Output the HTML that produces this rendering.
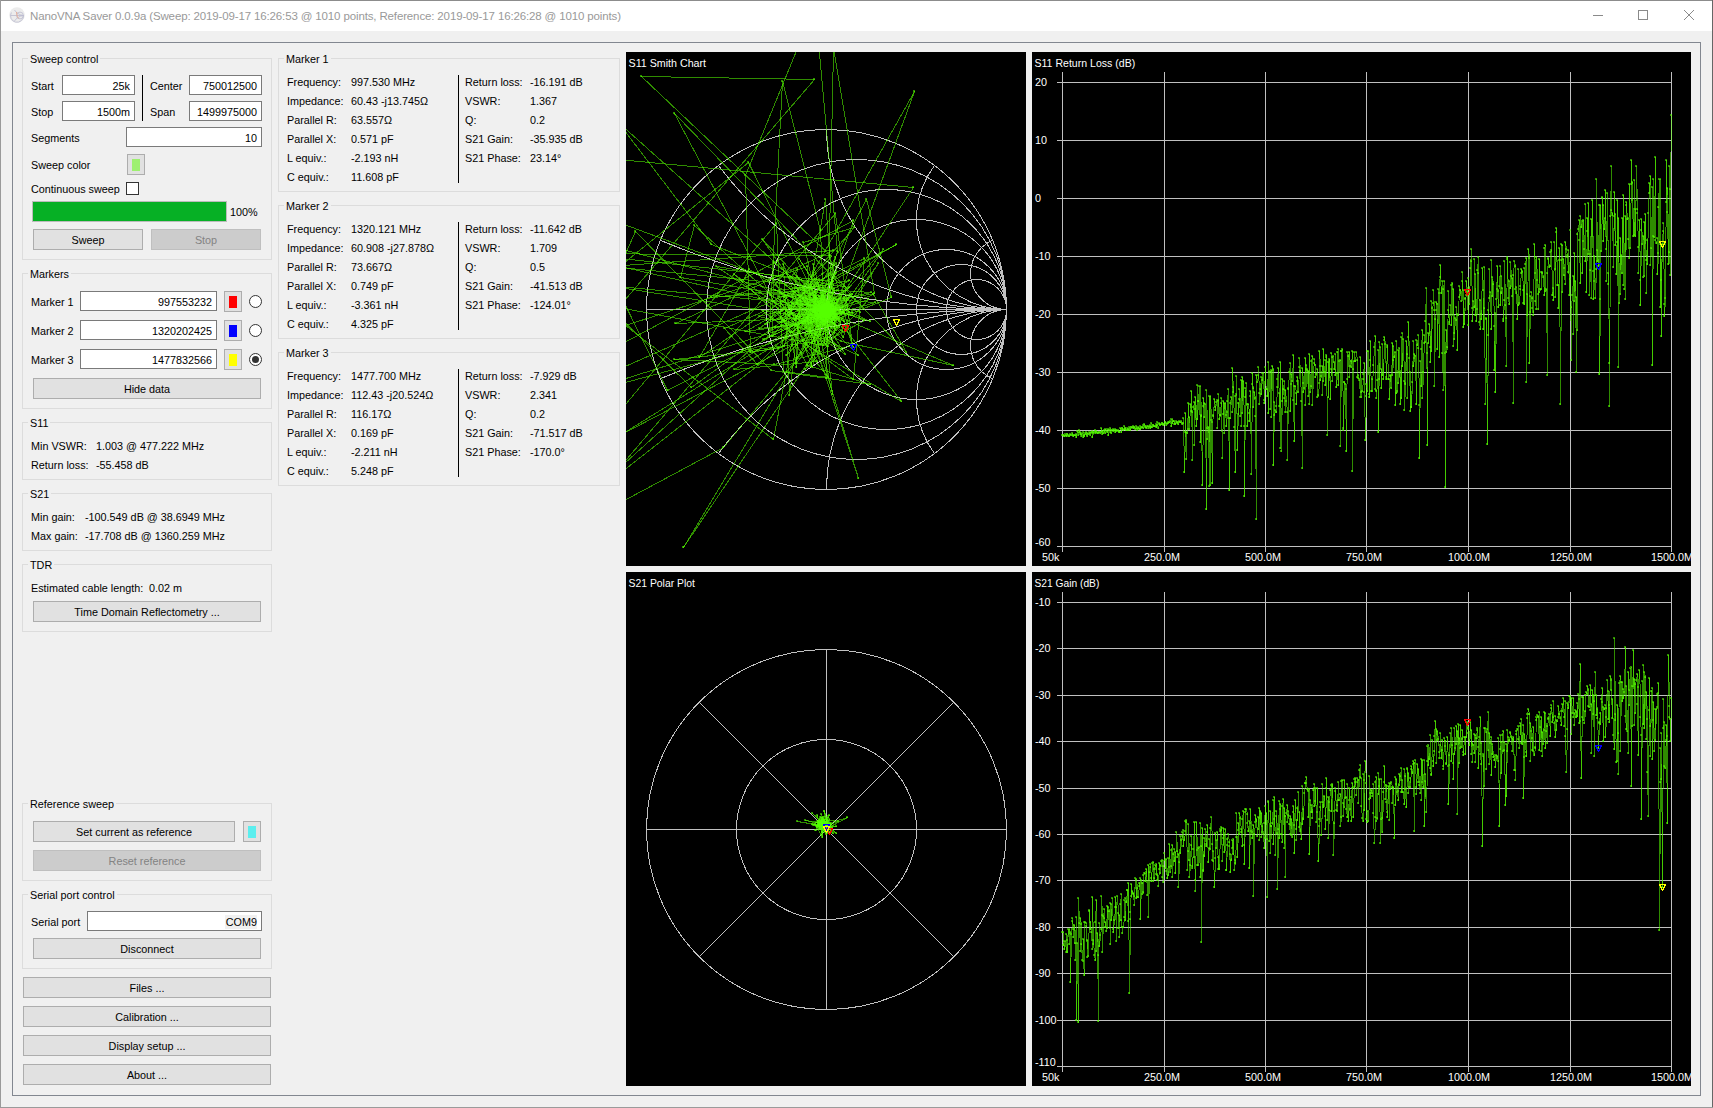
<!DOCTYPE html>
<html><head><meta charset="utf-8"><title>NanoVNA Saver</title><style>
*{box-sizing:border-box;margin:0;padding:0}
html,body{width:1713px;height:1108px;overflow:hidden;background:#f0f0f0}
body{position:relative;font-family:"Liberation Sans",sans-serif;font-size:10.8px;color:#000;line-height:13px}
.a{position:absolute;white-space:pre}
.t{position:absolute;white-space:pre;height:13px;line-height:13px}
.g{position:absolute;border:1px solid #dcdcdc}
.gt{position:absolute;white-space:pre;background:#f0f0f0;height:13px;line-height:13px;padding:0 2px}
.b{position:absolute;border:1px solid #adadad;background:#e1e1e1;text-align:center;white-space:pre;line-height:19px;height:21px}
.b.d{background:#cccccc;border-color:#bfbfbf;color:#838383}
.i{position:absolute;border:1px solid #7a7a7a;background:#fff;text-align:right;white-space:pre;height:20px;line-height:18px;padding-right:4px}
.c{position:absolute;border:1px solid #adadad;background:#e1e1e1}
.c i{position:absolute;display:block}
.v{position:absolute;width:1px;background:#000}
.r{position:absolute;width:13px;height:13px;border:1px solid #333;border-radius:50%;background:#fff}
.r.on::after{content:"";position:absolute;left:2px;top:2px;width:7px;height:7px;border-radius:50%;background:#333}
svg{position:absolute;display:block}
svg text{font-family:"Liberation Sans",sans-serif;font-size:10.8px;fill:#fff}
</style></head><body>
<div class="a" style="left:0;top:0;width:1713px;height:31px;background:#fff"></div>
<div class="a" style="left:0;top:0;width:1713px;height:1px;background:#8c8c8c"></div>
<div class="a" style="left:0;top:0;width:1px;height:1108px;background:#9a9a9a"></div>
<div class="a" style="left:1712px;top:0;width:1px;height:1108px;background:#666"></div>
<div class="a" style="left:0;top:1107px;width:1713px;height:1px;background:#9a9a9a"></div>
<svg style="left:9px;top:7px" width="16" height="16" viewBox="0 0 16 16"><circle cx="8" cy="8" r="7.8" fill="#ececec"/><g fill="none" stroke="#b4b4cc" stroke-width="0.8" opacity="0.85"><path d="M2.400 5.500A6.500 6.500 0 1 0 14.500 8.500"/><path d="M1.500 8.500H14.500"/><circle cx="11" cy="8.500" r="3.400"/><path d="M14.500 8.500C10 8 7 5.500 5.500 3M14.500 8.500C10 9 7 11.500 5.500 14"/></g><path d="M7.500 5C8 6.500 7.600 8 8.300 9.500S9.500 11 9.800 11.500" fill="none" stroke="#eaa98c" stroke-width="0.9"/></svg>
<div class="a" style="left:30px;top:9px;font-size:11.5px;line-height:15px;color:#999;letter-spacing:-0.137px" id="ttl">NanoVNA Saver 0.0.9a (Sweep: 2019-09-17 16:26:53 @ 1010 points, Reference: 2019-09-17 16:26:28 @ 1010 points)</div>
<svg style="left:1585px;top:1px" width="127" height="30" viewBox="0 0 127 30" shape-rendering="crispEdges"><path d="M8 14.500H18" stroke="#8a8a8a" fill="none"/><rect x="53.500" y="9.500" width="9" height="9" fill="none" stroke="#8a8a8a"/><path d="M99 9L109 19M109 9L99 19" stroke="#8a8a8a" fill="none" shape-rendering="auto"/></svg>
<div class="a" style="left:12px;top:42px;width:1689px;height:1054px;border:1px solid #828790"></div>
<div class="g" style="left:22px;top:58px;width:250px;height:202px"></div>
<div class="gt" style="left:28px;top:53px">Sweep control</div>
<div class="t" style="left:31px;top:80px;">Start</div>
<div class="i" style="left:62px;top:75px;width:73px;height:20px;line-height:20px">25k</div>
<div class="t" style="left:31px;top:106px;">Stop</div>
<div class="i" style="left:62px;top:101px;width:73px;height:20px;line-height:20px">1500m</div>
<div class="v" style="left:142px;top:75px;height:46px"></div>
<div class="t" style="left:150px;top:80px;">Center</div>
<div class="i" style="left:189px;top:75px;width:73px;height:20px;line-height:20px">750012500</div>
<div class="t" style="left:150px;top:106px;">Span</div>
<div class="i" style="left:189px;top:101px;width:73px;height:20px;line-height:20px">1499975000</div>
<div class="t" style="left:31px;top:132px;">Segments</div>
<div class="i" style="left:126px;top:127px;width:136px;height:20px;line-height:20px">10</div>
<div class="t" style="left:31px;top:159px;">Sweep color</div>
<div class="c" style="left:127px;top:154px;width:18px;height:21px"><i style="left:4px;top:4px;width:8px;height:12px;background:#9ef070"></i></div>
<div class="t" style="left:31px;top:183px;">Continuous sweep</div>
<div class="a" style="left:126px;top:182px;width:13px;height:13px;border:1px solid #333;background:#fff"></div>
<div class="a" style="left:32px;top:201px;width:195px;height:21px;border:1px solid #bcbcbc;background:#06b025"></div>
<div class="t" style="left:230px;top:206px;">100%</div>
<div class="b" style="left:33px;top:229px;width:110px;height:21px;line-height:20px">Sweep</div>
<div class="b d" style="left:151px;top:229px;width:110px;height:21px;line-height:20px">Stop</div>
<div class="g" style="left:22px;top:273px;width:250px;height:136px"></div>
<div class="gt" style="left:28px;top:268px">Markers</div>
<div class="t" style="left:31px;top:296px;">Marker 1</div>
<div class="i" style="left:80px;top:291px;width:137px;height:20px;line-height:20px">997553232</div>
<div class="c" style="left:224px;top:291px;width:18px;height:21px"><i style="left:4px;top:4px;width:8px;height:12px;background:#ff0000"></i></div>
<div class="r" style="left:249px;top:295px"></div>
<div class="t" style="left:31px;top:325px;">Marker 2</div>
<div class="i" style="left:80px;top:320px;width:137px;height:20px;line-height:20px">1320202425</div>
<div class="c" style="left:224px;top:320px;width:18px;height:21px"><i style="left:4px;top:4px;width:8px;height:12px;background:#0000ff"></i></div>
<div class="r" style="left:249px;top:324px"></div>
<div class="t" style="left:31px;top:354px;">Marker 3</div>
<div class="i" style="left:80px;top:349px;width:137px;height:20px;line-height:20px">1477832566</div>
<div class="c" style="left:224px;top:349px;width:18px;height:21px"><i style="left:4px;top:4px;width:8px;height:12px;background:#ffff00"></i></div>
<div class="r on" style="left:249px;top:353px"></div>
<div class="b" style="left:33px;top:378px;width:228px;height:21px;line-height:20px">Hide data</div>
<div class="g" style="left:22px;top:422px;width:250px;height:58px"></div>
<div class="gt" style="left:28px;top:417px">S11</div>
<div class="t" style="left:31px;top:440px;">Min VSWR:</div>
<div class="t" style="left:96px;top:440px;">1.003 @ 477.222 MHz</div>
<div class="t" style="left:31px;top:459px;">Return loss:</div>
<div class="t" style="left:96px;top:459px;">-55.458 dB</div>
<div class="g" style="left:22px;top:493px;width:250px;height:58px"></div>
<div class="gt" style="left:28px;top:488px">S21</div>
<div class="t" style="left:31px;top:511px;">Min gain:</div>
<div class="t" style="left:85px;top:511px;">-100.549 dB @ 38.6949 MHz</div>
<div class="t" style="left:31px;top:530px;">Max gain:</div>
<div class="t" style="left:85px;top:530px;">-17.708 dB @ 1360.259 MHz</div>
<div class="g" style="left:22px;top:564px;width:250px;height:68px"></div>
<div class="gt" style="left:28px;top:559px">TDR</div>
<div class="t" style="left:31px;top:582px;">Estimated cable length:</div>
<div class="t" style="left:149px;top:582px;">0.02 m</div>
<div class="b" style="left:33px;top:601px;width:228px;height:21px;line-height:20px">Time Domain Reflectometry ...</div>
<div class="g" style="left:22px;top:803px;width:250px;height:78px"></div>
<div class="gt" style="left:28px;top:798px">Reference sweep</div>
<div class="b" style="left:33px;top:821px;width:202px;height:21px;line-height:20px">Set current as reference</div>
<div class="c" style="left:243px;top:821px;width:18px;height:21px"><i style="left:4px;top:4px;width:8px;height:12px;background:#5beeee"></i></div>
<div class="b d" style="left:33px;top:850px;width:228px;height:21px;line-height:20px">Reset reference</div>
<div class="g" style="left:22px;top:894px;width:250px;height:75px"></div>
<div class="gt" style="left:28px;top:889px">Serial port control</div>
<div class="t" style="left:31px;top:916px;">Serial port</div>
<div class="i" style="left:87px;top:911px;width:175px;height:20px;line-height:20px"><span style="background:#f0f0f0;padding:1px 0 1px 1px">COM9</span></div>
<div class="b" style="left:33px;top:938px;width:228px;height:21px;line-height:20px">Disconnect</div>
<div class="b" style="left:23px;top:977px;width:248px;height:21px;line-height:20px">Files ...</div>
<div class="b" style="left:23px;top:1006px;width:248px;height:21px;line-height:20px">Calibration ...</div>
<div class="b" style="left:23px;top:1035px;width:248px;height:21px;line-height:20px">Display setup ...</div>
<div class="b" style="left:23px;top:1064px;width:248px;height:21px;line-height:20px">About ...</div>
<div class="g" style="left:278px;top:58px;width:342px;height:134px"></div>
<div class="gt" style="left:284px;top:53px">Marker 1</div>
<div class="t" style="left:287px;top:76px;">Frequency:</div>
<div class="t" style="left:351px;top:76px;">997.530 MHz</div>
<div class="t" style="left:287px;top:95px;">Impedance:</div>
<div class="t" style="left:351px;top:95px;">60.43 -j13.745Ω</div>
<div class="t" style="left:287px;top:114px;">Parallel R:</div>
<div class="t" style="left:351px;top:114px;">63.557Ω</div>
<div class="t" style="left:287px;top:133px;">Parallel X:</div>
<div class="t" style="left:351px;top:133px;">0.571 pF</div>
<div class="t" style="left:287px;top:152px;">L equiv.:</div>
<div class="t" style="left:351px;top:152px;">-2.193 nH</div>
<div class="t" style="left:287px;top:171px;">C equiv.:</div>
<div class="t" style="left:351px;top:171px;">11.608 pF</div>
<div class="t" style="left:465px;top:76px;">Return loss:</div>
<div class="t" style="left:530px;top:76px;">-16.191 dB</div>
<div class="t" style="left:465px;top:95px;">VSWR:</div>
<div class="t" style="left:530px;top:95px;">1.367</div>
<div class="t" style="left:465px;top:114px;">Q:</div>
<div class="t" style="left:530px;top:114px;">0.2</div>
<div class="t" style="left:465px;top:133px;">S21 Gain:</div>
<div class="t" style="left:530px;top:133px;">-35.935 dB</div>
<div class="t" style="left:465px;top:152px;">S21 Phase:</div>
<div class="t" style="left:530px;top:152px;">23.14°</div>
<div class="v" style="left:458px;top:75px;height:108px"></div>
<div class="g" style="left:278px;top:205px;width:342px;height:134px"></div>
<div class="gt" style="left:284px;top:200px">Marker 2</div>
<div class="t" style="left:287px;top:223px;">Frequency:</div>
<div class="t" style="left:351px;top:223px;">1320.121 MHz</div>
<div class="t" style="left:287px;top:242px;">Impedance:</div>
<div class="t" style="left:351px;top:242px;">60.908 -j27.878Ω</div>
<div class="t" style="left:287px;top:261px;">Parallel R:</div>
<div class="t" style="left:351px;top:261px;">73.667Ω</div>
<div class="t" style="left:287px;top:280px;">Parallel X:</div>
<div class="t" style="left:351px;top:280px;">0.749 pF</div>
<div class="t" style="left:287px;top:299px;">L equiv.:</div>
<div class="t" style="left:351px;top:299px;">-3.361 nH</div>
<div class="t" style="left:287px;top:318px;">C equiv.:</div>
<div class="t" style="left:351px;top:318px;">4.325 pF</div>
<div class="t" style="left:465px;top:223px;">Return loss:</div>
<div class="t" style="left:530px;top:223px;">-11.642 dB</div>
<div class="t" style="left:465px;top:242px;">VSWR:</div>
<div class="t" style="left:530px;top:242px;">1.709</div>
<div class="t" style="left:465px;top:261px;">Q:</div>
<div class="t" style="left:530px;top:261px;">0.5</div>
<div class="t" style="left:465px;top:280px;">S21 Gain:</div>
<div class="t" style="left:530px;top:280px;">-41.513 dB</div>
<div class="t" style="left:465px;top:299px;">S21 Phase:</div>
<div class="t" style="left:530px;top:299px;">-124.01°</div>
<div class="v" style="left:458px;top:222px;height:108px"></div>
<div class="g" style="left:278px;top:352px;width:342px;height:134px"></div>
<div class="gt" style="left:284px;top:347px">Marker 3</div>
<div class="t" style="left:287px;top:370px;">Frequency:</div>
<div class="t" style="left:351px;top:370px;">1477.700 MHz</div>
<div class="t" style="left:287px;top:389px;">Impedance:</div>
<div class="t" style="left:351px;top:389px;">112.43 -j20.524Ω</div>
<div class="t" style="left:287px;top:408px;">Parallel R:</div>
<div class="t" style="left:351px;top:408px;">116.17Ω</div>
<div class="t" style="left:287px;top:427px;">Parallel X:</div>
<div class="t" style="left:351px;top:427px;">0.169 pF</div>
<div class="t" style="left:287px;top:446px;">L equiv.:</div>
<div class="t" style="left:351px;top:446px;">-2.211 nH</div>
<div class="t" style="left:287px;top:465px;">C equiv.:</div>
<div class="t" style="left:351px;top:465px;">5.248 pF</div>
<div class="t" style="left:465px;top:370px;">Return loss:</div>
<div class="t" style="left:530px;top:370px;">-7.929 dB</div>
<div class="t" style="left:465px;top:389px;">VSWR:</div>
<div class="t" style="left:530px;top:389px;">2.341</div>
<div class="t" style="left:465px;top:408px;">Q:</div>
<div class="t" style="left:530px;top:408px;">0.2</div>
<div class="t" style="left:465px;top:427px;">S21 Gain:</div>
<div class="t" style="left:530px;top:427px;">-71.517 dB</div>
<div class="t" style="left:465px;top:446px;">S21 Phase:</div>
<div class="t" style="left:530px;top:446px;">-170.0°</div>
<div class="v" style="left:458px;top:369px;height:108px"></div>
<svg style="left:1032px;top:52px;background:#000" width="659" height="514" viewBox="0 0 659 514"><text x="2.5" y="15.3" textLength="100.7" lengthAdjust="spacingAndGlyphs">S11 Return Loss (dB)</text><path d="M30 20V499M132 20V499M233 20V499M334 20V499M436 20V499M538 20V499M639 20V499M25 30H639M25 88H639M25 146H639M25 204H639M25 262H639M25 320H639M25 378H639M25 436H639M25 494H639" stroke="#c0c0c0" fill="none" stroke-linecap="square" shape-rendering="crispEdges" transform="translate(.5 .5)"/><text x="3" y="34.3">20</text><text x="3" y="92.3">10</text><text x="3" y="150.3">0</text><text x="3" y="208.3">-10</text><text x="3" y="266.3">-20</text><text x="3" y="324.3">-30</text><text x="3" y="382.3">-40</text><text x="3" y="440.3">-50</text><text x="3" y="494.3">-60</text><text x="10" y="509.3">50k</text><text x="112" y="509.3">250.0M</text><text x="213" y="509.3">500.0M</text><text x="314" y="509.3">750.0M</text><text x="416" y="509.3">1000.0M</text><text x="518" y="509.3">1250.0M</text><text x="619" y="509.3">1500.0M</text><g fill="none" stroke="rgba(85,255,0,0.55)" stroke-width="1" stroke-linecap="square" shape-rendering="crispEdges" transform="translate(.5 .5)"><path d="M30 383l1 0M31 383l0 0M40 381l0 2M40 383l1 1M49 382l1 -1M50 381l1 4M59 380l1 -1M60 379l0 6M69 376l0 4M69 380l1 -1M78 380l1 1M79 381l0 -3M88 376l1 1M89 377l0 3M98 377l0 1M98 378l1 -3M107 377l1 -3M108 374l0 3M117 374l1 -1M118 373l0 3M127 371l0 1M127 372l1 0M136 370l1 0M137 370l0 0M146 372l0 -2M146 370l1 -1M156 351l0 26M156 377l1 -12M165 367l1 -18M166 349l0 0M175 376l0 11M175 387l1 -12M185 348l0 28M185 376l1 -28M194 374l1 -14M195 360l0 -11M204 342l0 -18M204 324l1 74M213 345l1 -14M214 331l1 43M223 364l1 103M224 467l0 -144M233 315l0 15M233 330l1 7M242 363l1 -5M243 358l1 2M252 346l1 14M253 360l0 -22M262 389l0 -55M262 334l1 0M271 340l1 -4M272 336l1 -30M281 320l1 -13M282 307l0 4M291 297l0 32M291 329l1 -9M300 305l1 -1M301 304l1 13M310 297l1 81M311 378l0 -2M320 299l0 120M320 419l1 -102M329 340l1 -1M330 339l1 -12M339 339l1 0M340 339l0 -12M349 336l0 -19M349 317l1 6M358 323l1 13M359 336l1 -45M368 352l1 -67M369 285l0 61M378 359l0 -39M378 320l1 35M387 406l1 -97M388 309l1 25M397 272l1 23M398 295l0 15M407 305l0 -64M407 241l1 -28M416 258l1 14M417 272l0 -2M426 263l1 -29M427 234l0 11M436 273l0 -47M436 226l1 16M445 218l1 -13M446 205l0 16M455 392l1 -134M456 258l0 25M465 214l0 23M465 237l1 18M474 266l1 -59M475 207l0 -2M484 241l0 -6M484 235l1 32M494 206l0 124M494 330l1 -88M503 249l1 8M504 257l0 -52M513 193l0 46M513 239l1 -2M523 217l0 28M523 245l1 -69M532 223l1 9M533 232l0 -42M542 201l0 48M542 249l1 -20M551 168l1 29M552 197l1 12M561 247l1 -18M562 229l0 -25M571 189l0 -36M571 153l1 24M580 161l1 54M581 215l1 -75M590 166l1 67M591 233l0 -90M600 130l0 18M600 148l1 36M609 167l1 25M610 192l1 -8M619 196l1 -61M620 135l0 178M629 284l0 -56M629 228l1 -36M638 137l1 -74"/><path d="M31 383l1 1M32 384l0 0M41 384l0 -1M41 383l1 0M51 385l0 -5M51 380l1 4M60 385l1 -4M61 381l0 -1M70 379l0 3M70 382l1 -1M79 378l1 0M80 378l1 -1M89 380l1 -4M90 376l0 0M99 375l0 0M99 375l1 0M108 377l1 -2M109 375l1 0M118 376l1 -5M119 371l0 4M128 372l0 1M128 373l1 -1M137 370l1 -1M138 369l1 5M147 369l1 1M148 370l0 0M157 365l0 12M157 377l1 -25M166 349l1 -15M167 334l1 56M176 375l1 59M177 434l0 -90M186 348l0 -6M186 342l1 25M195 349l1 -12M196 337l1 101M205 398l1 -47M206 351l0 11M215 374l0 -22M215 352l1 0M224 323l1 7M225 330l1 -7M234 337l1 0M235 337l0 7M244 360l0 -6M244 354l1 -19M253 338l1 11M254 349l1 11M263 334l1 7M264 341l0 11M273 306l0 47M273 353l1 -36M282 311l1 2M283 313l0 12M292 320l1 -12M293 308l0 25M302 317l0 -7M302 310l1 13M311 376l1 -46M312 330l0 0M321 317l1 -17M322 300l0 9M331 327l0 -5M331 322l1 -11M340 327l1 -7M341 320l0 -7M350 323l0 -31M350 292l1 35M360 291l0 32M360 323l1 -15M369 346l1 -65M370 281l0 33M379 355l0 0M379 355l1 -25M389 334l0 -37M389 297l1 -19M398 310l1 -61M399 249l0 50M408 213l0 12M408 225l1 16M417 270l1 -17M418 253l1 20M427 245l1 -7M428 238l0 0M437 242l0 10M437 252l1 -36M446 221l1 49M447 270l1 7M456 283l1 -66M457 217l0 29M466 255l0 -16M466 239l1 -5M475 205l1 41M476 246l1 6M485 267l1 -50M486 217l0 36M495 242l0 21M495 263l1 -66M504 205l1 23M505 228l1 14M514 237l1 86M515 323l0 -102M524 176l0 4M524 180l1 53M533 190l1 7M534 197l1 6M543 229l1 91M544 320l0 -75M553 209l0 -57M553 152l1 88M562 204l1 42M563 246l1 -29M572 177l1 -11M573 166l0 -28M582 140l0 24M582 164l1 29M591 143l1 94M592 237l1 -73M601 184l1 -56M602 128l0 55M611 184l0 41M611 225l1 -55M620 313l1 -186M621 127l0 57M630 192l1 -21M631 171l0 8"/><path d="M32 384l1 -2M33 382l1 2M42 383l1 0M43 383l0 0M52 384l0 -1M52 383l1 -2M61 380l1 0M62 380l1 -2M71 381l1 -3M72 378l0 1M81 377l0 2M81 379l1 -1M90 376l1 2M91 378l1 -1M100 375l1 -1M101 374l0 2M110 375l0 0M110 375l1 1M119 375l1 0M120 375l1 -2M129 372l1 -1M130 371l0 0M139 374l0 -7M139 367l1 4M148 370l1 -1M149 369l1 2M158 352l1 7M159 359l0 -20M168 390l0 -56M168 334l1 30M177 344l1 89M178 433l0 -89M187 367l1 -4M188 363l0 0M197 438l0 -72M197 366l1 0M206 362l1 -25M207 337l0 10M216 352l1 9M217 361l0 8M226 323l0 -8M226 315l1 26M235 344l1 -34M236 310l0 51M245 335l0 -8M245 327l1 -11M255 360l0 48M255 408l1 -71M264 352l1 -23M265 329l0 -4M274 317l0 -4M274 313l1 5M283 325l1 -3M284 322l1 -5M293 333l1 -28M294 305l0 -2M303 323l0 -21M303 302l1 33M312 330l1 2M313 332l1 67M322 309l1 0M323 309l0 0M332 311l0 29M332 340l1 48M341 313l1 -18M342 295l1 -11M351 327l1 -39M352 288l0 -3M361 308l0 -14M361 294l1 11M370 314l1 -27M371 287l1 42M380 330l1 -41M381 289l0 25M390 278l0 68M390 346l1 -26M399 299l1 -43M400 256l1 -5M409 241l1 -12M410 229l0 72M419 273l0 -40M419 233l1 -2M428 238l1 11M429 249l1 -20M438 216l1 -19M439 197l0 12M448 277l0 -29M448 248l1 19M457 246l1 -6M458 240l1 37M467 234l1 -20M468 214l0 39M477 252l0 -23M477 229l1 7M486 253l1 -2M487 251l1 -14M496 197l1 9M497 206l0 105M506 242l0 15M506 257l1 -50M515 221l1 -15M516 206l0 1M525 233l1 0M526 233l0 23M535 203l0 2M535 205l1 15M544 245l1 33M545 278l0 -96M554 240l1 -61M555 179l0 -13M564 217l0 -90M564 127l1 82M573 138l1 91M574 229l0 -32M583 193l0 -31M583 162l1 60M593 164l0 83M593 247l1 -97M602 183l1 -26M603 157l0 27M612 170l0 54M612 224l1 -62M621 184l1 1M622 185l1 -80M631 179l1 73M632 252l0 12"/><path d="M34 384l0 -1M34 383l1 -1M43 383l1 -1M44 382l0 3M53 381l1 -1M54 380l0 2M63 378l0 3M63 381l1 -1M72 379l1 2M73 381l0 -4M82 378l1 -1M83 377l0 3M92 377l0 -3M92 374l1 2M101 376l1 -1M102 375l0 0M111 376l0 -3M111 373l1 -1M121 373l0 0M121 373l1 1M130 371l1 2M131 373l0 -1M140 371l0 -4M140 367l1 2M150 371l0 1M150 372l1 -1M159 339l1 69M160 408l0 -48M169 364l0 -1M169 363l1 70M178 344l1 24M179 368l1 63M188 363l1 -17M189 346l0 5M198 366l0 -15M198 351l1 -6M207 347l1 17M208 364l1 -36M217 369l1 -25M218 344l0 -5M227 341l0 11M227 352l1 -15M236 361l1 -41M237 320l1 -1M246 316l1 38M247 354l0 -13M256 337l0 -1M256 336l1 -16M265 325l1 15M266 340l1 -25M275 318l1 26M276 344l0 -25M285 317l0 28M285 345l1 -2M294 303l1 80M295 383l1 -73M304 335l1 -14M305 321l0 -21M314 399l0 -62M314 337l1 -10M323 309l1 -9M324 300l1 8M333 388l1 -44M334 344l0 -12M343 284l0 53M343 337l1 2M352 285l1 7M353 292l1 35M362 305l1 -5M363 300l0 53M372 329l0 29M372 358l1 -26M381 314l1 -8M382 306l0 -4M391 320l1 -37M392 283l0 8M401 251l0 -13M401 238l1 20M410 301l1 37M411 338l0 -101M420 231l1 63M421 294l0 -57M430 229l0 -9M430 220l1 55M439 209l1 47M440 256l0 13M449 267l0 -5M449 262l1 -46M459 277l0 -69M459 208l1 36M468 253l1 -29M469 224l0 17M478 236l0 -26M478 210l1 14M488 237l0 -3M488 234l1 -17M497 311l1 -67M498 244l0 16M507 207l0 33M507 240l1 -3M516 207l1 8M517 215l1 -1M526 256l1 -48M527 208l0 -12M536 220l0 -22M536 198l1 45M545 182l1 -5M546 177l1 -9M555 166l1 36M556 202l0 -51M565 209l0 -11M565 198l1 16M574 197l1 -56M575 141l1 91M584 222l1 -32M585 190l0 -42M594 150l0 3M594 153l1 14M603 184l1 -70M604 114l1 43M613 162l1 79M614 241l0 -33M623 105l0 83M623 188l1 3M632 264l1 -18M633 246l1 -138"/><path d="M35 382l0 0M35 382l1 2M44 385l1 -6M45 379l1 1M54 382l1 2M55 384l0 -3M64 380l0 -1M64 379l1 2M73 377l1 1M74 378l1 2M83 380l1 -1M84 379l0 -1M93 376l0 1M93 377l1 1M102 375l1 2M103 377l1 -1M112 372l1 2M113 374l0 1M122 374l0 0M122 374l1 0M131 372l1 0M132 372l1 -2M141 369l1 0M142 369l0 3M151 371l0 -5M151 366l1 54M160 360l1 -5M161 355l1 -5M170 433l1 -79M171 354l0 -8M180 431l0 -61M180 370l1 -6M189 351l1 55M190 406l1 -57M199 345l1 15M200 360l0 -44M209 328l0 46M209 374l1 -49M218 339l1 83M219 422l1 -101M228 337l1 -12M229 325l0 17M238 319l0 38M238 357l1 -39M247 341l1 55M248 396l0 -86M257 320l1 -9M258 311l0 48M267 315l0 -9M267 306l1 13M276 319l1 33M277 352l0 -50M286 343l1 -12M287 331l0 -32M296 310l0 35M296 345l1 -38M305 300l1 -3M306 297l0 36M315 327l0 -27M315 300l1 4M325 308l0 17M325 325l1 1M334 332l1 7M335 339l0 -40M344 339l0 7M344 346l1 -18M354 327l0 -2M354 325l1 -32M363 353l1 -64M364 289l0 52M373 332l0 -1M373 331l1 -42M382 302l1 2M383 304l1 48M392 291l1 -1M393 290l0 -21M402 258l0 76M402 334l1 -67M411 237l1 -8M412 229l1 206M421 237l1 50M422 287l0 -6M431 275l0 -37M431 238l1 34M440 269l1 -20M441 249l1 6M450 216l1 22M451 238l0 39M460 244l0 -19M460 225l1 7M469 241l1 -5M470 236l1 33M479 224l1 20M480 244l0 -18M489 217l0 4M489 221l1 -2M498 260l1 -20M499 240l1 6M508 237l1 0M509 237l0 -17M518 214l0 -14M518 200l1 -2M527 196l1 156M528 352l1 -144M537 243l1 -65M538 178l0 49M547 168l0 20M547 188l1 43M556 151l1 92M557 243l1 -25M566 214l1 -61M567 153l0 169M576 232l0 -11M576 221l1 90M585 148l1 167M586 315l0 -149M595 167l1 -1M596 166l0 21M605 157l0 4M605 161l1 34M614 208l1 -20M615 188l0 24M624 191l1 -5M625 186l0 36M634 108l0 42M634 150l1 -14"/><path d="M36 384l1 -1M37 383l0 1M46 380l0 3M46 383l1 -5M55 381l1 1M56 382l1 -2M65 381l1 0M66 381l0 -1M75 380l0 -3M75 377l1 6M84 378l1 0M85 378l1 1M94 378l1 -2M95 376l0 2M104 376l0 -2M104 374l1 2M113 375l1 1M114 376l0 -1M123 374l1 -2M124 372l0 3M133 370l0 0M133 370l1 1M142 372l1 -1M143 371l0 1M152 420l1 -40M153 380l0 -19M162 350l0 43M162 393l1 -48M171 346l1 19M172 365l0 -14M181 364l0 -1M181 363l1 -16M191 349l0 13M191 362l1 -11M200 316l1 24M201 340l0 -5M210 325l0 36M210 361l1 -32M220 321l0 11M220 332l1 4M229 342l1 -21M230 321l0 7M239 318l0 47M239 365l1 -51M248 310l1 89M249 399l1 -72M258 359l1 -27M259 332l0 -10M268 319l0 0M268 319l1 30M277 302l1 38M278 340l1 -6M287 299l1 15M288 314l0 14M297 307l0 2M297 309l1 38M306 333l1 -24M307 309l1 -1M316 304l1 21M317 325l0 -25M326 326l0 -3M326 323l1 5M335 299l1 0M336 299l1 46M345 328l1 -30M346 298l0 82M355 293l0 2M355 295l1 32M364 341l1 -2M365 339l1 -41M374 289l1 57M375 346l0 -44M384 352l0 -64M384 288l1 5M393 269l1 -33M394 236l1 157M403 267l1 -9M404 258l0 -8M413 435l0 -134M413 301l1 -23M422 281l1 -15M423 266l1 2M432 272l1 -25M433 247l0 -1M442 255l0 -48M442 207l1 56M451 277l1 -62M452 215l0 41M461 232l1 42M462 274l0 44M471 269l0 -2M471 267l1 -19M480 226l1 125M481 351l0 -128M490 219l1 19M491 238l0 13M500 246l0 10M500 256l1 4M509 220l1 0M510 220l0 1M519 198l0 -8M519 190l1 53M529 208l0 -16M529 192l1 1M538 227l1 81M539 308l0 -53M548 231l0 -67M548 164l1 11M558 218l0 -16M558 202l1 -35M567 322l1 -75M568 247l0 -94M577 311l0 43M577 354l1 -190M586 166l1 85M587 251l1 -65M596 187l1 19M597 206l0 -74M606 195l0 26M606 221l1 -53M615 212l1 -51M616 161l1 -30M625 222l1 -21M626 201l0 -46M635 136l0 24M635 160l1 52"/><path d="M37 384l1 -1M38 383l0 -1M47 378l1 4M48 382l0 -2M57 380l0 2M57 382l1 -2M66 380l1 0M67 380l0 0M76 383l0 -6M76 377l1 1M86 379l0 -1M86 378l1 2M95 378l1 0M96 378l0 -1M105 376l0 2M105 378l1 -3M114 375l1 -1M115 374l1 0M124 375l1 -5M125 370l0 3M134 371l0 2M134 373l1 -2M143 372l1 -3M144 369l1 1M153 361l1 46M154 407l0 -27M163 345l0 12M163 357l1 17M172 351l1 1M173 352l1 105M182 347l1 8M183 355l0 3M192 351l0 30M192 381l1 -30M201 335l1 40M202 375l1 45M211 329l1 45M212 374l0 70M221 336l0 19M221 355l1 -15M230 328l1 -7M231 321l1 30M240 314l1 4M241 318l0 95M250 327l0 22M250 349l1 -12M259 322l1 7M260 329l1 -26M269 349l1 67M270 416l0 -100M279 334l0 -25M279 309l1 -5M288 328l1 -4M289 324l1 -10M298 347l1 -46M299 301l0 16M308 308l0 86M308 394l1 -95M317 300l1 14M318 314l1 -5M327 328l1 17M328 345l0 -40M337 345l0 -3M337 342l1 -53M346 380l1 -90M347 290l0 37M356 327l1 0M357 327l0 20M366 298l0 33M366 331l1 -11M375 302l1 -17M376 285l0 -15M385 293l1 -10M386 283l0 13M395 393l0 -92M395 301l1 -20M404 250l1 2M405 252l0 45M414 278l0 22M414 300l1 -5M424 268l0 -13M424 255l1 43M433 246l1 -3M434 243l0 -14M443 263l0 -41M443 222l1 47M452 256l1 96M453 352l1 -86M462 318l1 -57M463 261l0 79M472 248l0 -39M472 209l1 44M481 223l1 -14M482 209l1 5M491 251l1 -35M492 216l0 36M501 260l0 3M501 263l1 -71M510 221l1 4M511 225l1 18M520 243l1 -7M521 236l0 12M530 193l0 47M530 240l1 -33M539 255l1 -12M540 243l1 -19M549 175l1 -6M550 169l0 52M559 167l0 79M559 246l1 -98M568 153l1 46M569 199l1 -53M578 164l1 -50M579 114l0 44M588 186l0 56M588 242l1 -39M597 132l1 64M598 196l1 -88M607 168l1 60M608 228l0 25M617 131l0 10M617 141l1 -17M626 155l1 -28M627 127l1 128M636 212l1 -98M637 114l0 86"/><path d="M38 382l1 1M39 383l1 -2M48 380l1 4M49 384l0 -2M58 380l0 3M58 383l1 -3M67 380l1 1M68 381l1 -5M77 378l1 -2M78 376l0 4M87 380l0 0M87 380l1 -4M96 377l1 -2M97 375l1 2M106 375l1 1M107 376l0 1M116 374l0 2M116 376l1 -2M125 373l1 3M126 376l1 -5M135 371l1 0M136 371l0 -1M145 370l0 1M145 371l1 1M154 380l1 1M155 381l1 -30M164 374l1 -41M165 333l0 34M174 457l0 -119M174 338l1 38M183 358l1 -8M184 350l1 -2M193 351l1 12M194 363l0 11M203 420l0 -76M203 344l1 -2M212 444l1 -108M213 336l0 9M222 340l1 6M223 346l0 18M232 351l0 -3M232 348l1 -33M241 413l1 -63M242 350l0 13M251 337l1 -8M252 329l0 17M261 303l0 45M261 348l1 41M270 316l1 15M271 331l0 9M280 304l0 49M280 353l1 -33M290 314l0 29M290 343l1 -46M299 317l1 12M300 329l0 -24M309 299l0 0M309 299l1 -2M319 309l0 6M319 315l1 -16M328 305l1 40M329 345l0 -5M338 289l0 19M338 308l1 31M347 327l1 -32M348 295l1 41M357 347l1 -23M358 324l0 -1M367 320l0 -24M367 296l1 56M376 270l1 36M377 306l1 53M386 296l1 57M387 353l0 53M396 281l0 10M396 291l1 -19M405 297l1 -60M406 237l1 68M415 295l1 -56M416 239l0 19M425 298l0 -36M425 262l1 1M434 229l1 11M435 240l1 33M444 269l1 -12M445 257l0 -39M454 266l0 1M454 267l1 125M463 340l1 -93M464 247l1 -33M473 253l1 61M474 314l0 -48M483 214l0 23M483 237l1 4M492 252l1 -40M493 212l1 -6M502 192l1 29M503 221l0 28M512 243l0 -47M512 196l1 -3M521 248l1 -58M522 190l1 27M531 207l1 9M532 216l0 7M541 224l0 58M541 282l1 -81M550 221l1 -32M551 189l0 -21M560 148l1 71M561 219l0 28M570 146l0 -1M570 145l1 44M579 158l1 5M580 163l0 -2M589 203l1 18M590 221l0 -55M599 108l0 24M599 132l1 -2M608 253l1 -75M609 178l0 -11M618 124l0 89M618 213l1 -17M628 255l0 -128M628 127l1 157M637 200l1 23M638 223l0 -86"/></g><g fill="rgba(85,255,0,0.55)" shape-rendering="crispEdges"><path d="M29 382h2v2h-2zM30 382h2v2h-2zM31 383h2v2h-2zM33 383h2v2h-2zM34 381h2v2h-2zM35 383h2v2h-2zM36 383h2v2h-2zM37 381h2v2h-2zM39 380h2v2h-2zM40 383h2v2h-2zM41 382h2v2h-2zM42 382h2v2h-2zM43 384h2v2h-2zM45 379h2v2h-2zM46 377h2v2h-2zM47 379h2v2h-2zM48 381h2v2h-2zM50 384h2v2h-2zM51 383h2v2h-2zM52 380h2v2h-2zM53 381h2v2h-2zM54 380h2v2h-2zM56 379h2v2h-2zM57 379h2v2h-2zM58 379h2v2h-2zM59 384h2v2h-2zM60 379h2v2h-2zM62 377h2v2h-2zM63 379h2v2h-2zM64 380h2v2h-2zM65 379h2v2h-2zM66 379h2v2h-2zM68 375h2v2h-2zM69 378h2v2h-2zM70 380h2v2h-2zM71 378h2v2h-2zM72 376h2v2h-2zM74 379h2v2h-2zM75 382h2v2h-2zM76 377h2v2h-2zM77 379h2v2h-2zM78 377h2v2h-2zM80 376h2v2h-2zM81 377h2v2h-2zM82 379h2v2h-2zM83 377h2v2h-2zM85 378h2v2h-2zM86 379h2v2h-2zM87 375h2v2h-2zM88 379h2v2h-2zM89 375h2v2h-2zM91 376h2v2h-2zM92 375h2v2h-2zM93 377h2v2h-2zM94 377h2v2h-2zM95 376h2v2h-2zM97 376h2v2h-2zM98 374h2v2h-2zM99 374h2v2h-2zM100 375h2v2h-2zM101 374h2v2h-2zM103 375h2v2h-2zM104 375h2v2h-2zM105 374h2v2h-2zM106 376h2v2h-2zM107 376h2v2h-2zM109 374h2v2h-2zM110 375h2v2h-2zM111 371h2v2h-2zM112 374h2v2h-2zM113 374h2v2h-2zM115 373h2v2h-2zM116 373h2v2h-2zM117 375h2v2h-2zM118 374h2v2h-2zM120 372h2v2h-2zM121 373h2v2h-2zM122 373h2v2h-2zM123 374h2v2h-2zM124 372h2v2h-2zM126 370h2v2h-2zM127 371h2v2h-2zM128 371h2v2h-2zM129 370h2v2h-2zM130 371h2v2h-2zM132 369h2v2h-2zM133 370h2v2h-2zM134 370h2v2h-2zM135 369h2v2h-2zM136 369h2v2h-2zM138 373h2v2h-2zM139 370h2v2h-2zM140 368h2v2h-2zM141 371h2v2h-2zM142 371h2v2h-2zM144 369h2v2h-2zM145 371h2v2h-2zM146 368h2v2h-2zM147 369h2v2h-2zM149 370h2v2h-2zM150 370h2v2h-2zM151 419h2v2h-2zM152 360h2v2h-2zM153 379h2v2h-2zM155 350h2v2h-2zM156 364h2v2h-2zM157 351h2v2h-2zM158 338h2v2h-2zM159 359h2v2h-2zM161 349h2v2h-2zM162 344h2v2h-2zM163 373h2v2h-2zM164 366h2v2h-2zM165 348h2v2h-2zM167 389h2v2h-2zM168 363h2v2h-2zM169 432h2v2h-2zM170 345h2v2h-2zM171 350h2v2h-2zM173 456h2v2h-2zM174 375h2v2h-2zM175 374h2v2h-2zM176 343h2v2h-2zM177 343h2v2h-2zM179 430h2v2h-2zM180 363h2v2h-2zM181 346h2v2h-2zM182 357h2v2h-2zM184 347h2v2h-2zM185 347h2v2h-2zM186 366h2v2h-2zM187 362h2v2h-2zM188 350h2v2h-2zM190 348h2v2h-2zM191 350h2v2h-2zM192 350h2v2h-2zM193 373h2v2h-2zM194 348h2v2h-2zM196 437h2v2h-2zM197 365h2v2h-2zM198 344h2v2h-2zM199 315h2v2h-2zM200 334h2v2h-2zM202 419h2v2h-2zM203 341h2v2h-2zM204 397h2v2h-2zM205 361h2v2h-2zM206 346h2v2h-2zM208 327h2v2h-2zM209 324h2v2h-2zM210 328h2v2h-2zM211 443h2v2h-2zM212 344h2v2h-2zM214 373h2v2h-2zM215 351h2v2h-2zM216 368h2v2h-2zM217 338h2v2h-2zM219 320h2v2h-2zM220 335h2v2h-2zM221 339h2v2h-2zM222 363h2v2h-2zM223 322h2v2h-2zM225 322h2v2h-2zM226 340h2v2h-2zM227 336h2v2h-2zM228 341h2v2h-2zM229 327h2v2h-2zM231 350h2v2h-2zM232 314h2v2h-2zM233 336h2v2h-2zM234 343h2v2h-2zM235 360h2v2h-2zM237 318h2v2h-2zM238 317h2v2h-2zM239 313h2v2h-2zM240 412h2v2h-2zM241 362h2v2h-2zM243 359h2v2h-2zM244 334h2v2h-2zM245 315h2v2h-2zM246 340h2v2h-2zM247 309h2v2h-2zM249 326h2v2h-2zM250 336h2v2h-2zM251 345h2v2h-2zM252 337h2v2h-2zM254 359h2v2h-2zM255 336h2v2h-2zM256 319h2v2h-2zM257 358h2v2h-2zM258 321h2v2h-2zM260 302h2v2h-2zM261 388h2v2h-2zM262 333h2v2h-2zM263 351h2v2h-2zM264 324h2v2h-2zM266 314h2v2h-2zM267 318h2v2h-2zM268 348h2v2h-2zM269 315h2v2h-2zM270 339h2v2h-2zM272 305h2v2h-2zM273 316h2v2h-2zM274 317h2v2h-2zM275 318h2v2h-2zM276 301h2v2h-2zM278 333h2v2h-2zM279 303h2v2h-2zM280 319h2v2h-2zM281 310h2v2h-2zM282 324h2v2h-2zM284 316h2v2h-2zM285 342h2v2h-2zM286 298h2v2h-2zM287 327h2v2h-2zM289 313h2v2h-2zM290 296h2v2h-2zM291 319h2v2h-2zM292 332h2v2h-2zM293 302h2v2h-2zM295 309h2v2h-2zM296 306h2v2h-2zM297 346h2v2h-2zM298 316h2v2h-2zM299 304h2v2h-2zM301 316h2v2h-2zM302 322h2v2h-2zM303 334h2v2h-2zM304 299h2v2h-2zM305 332h2v2h-2zM307 307h2v2h-2zM308 298h2v2h-2zM309 296h2v2h-2zM310 375h2v2h-2zM311 329h2v2h-2zM313 398h2v2h-2zM314 326h2v2h-2zM315 303h2v2h-2zM316 299h2v2h-2zM318 308h2v2h-2zM319 298h2v2h-2zM320 316h2v2h-2zM321 308h2v2h-2zM322 308h2v2h-2zM324 307h2v2h-2zM325 325h2v2h-2zM326 327h2v2h-2zM327 304h2v2h-2zM328 339h2v2h-2zM330 326h2v2h-2zM331 310h2v2h-2zM332 387h2v2h-2zM333 331h2v2h-2zM334 298h2v2h-2zM336 344h2v2h-2zM337 288h2v2h-2zM338 338h2v2h-2zM339 326h2v2h-2zM340 312h2v2h-2zM342 283h2v2h-2zM343 338h2v2h-2zM344 327h2v2h-2zM345 379h2v2h-2zM346 326h2v2h-2zM348 335h2v2h-2zM349 322h2v2h-2zM350 326h2v2h-2zM351 284h2v2h-2zM353 326h2v2h-2zM354 292h2v2h-2zM355 326h2v2h-2zM356 346h2v2h-2zM357 322h2v2h-2zM359 290h2v2h-2zM360 307h2v2h-2zM361 304h2v2h-2zM362 352h2v2h-2zM363 340h2v2h-2zM365 297h2v2h-2zM366 319h2v2h-2zM367 351h2v2h-2zM368 345h2v2h-2zM369 313h2v2h-2zM371 328h2v2h-2zM372 331h2v2h-2zM373 288h2v2h-2zM374 301h2v2h-2zM375 269h2v2h-2zM377 358h2v2h-2zM378 354h2v2h-2zM379 329h2v2h-2zM380 313h2v2h-2zM381 301h2v2h-2zM383 351h2v2h-2zM384 292h2v2h-2zM385 295h2v2h-2zM386 405h2v2h-2zM388 333h2v2h-2zM389 277h2v2h-2zM390 319h2v2h-2zM391 290h2v2h-2zM392 268h2v2h-2zM394 392h2v2h-2zM395 280h2v2h-2zM396 271h2v2h-2zM397 309h2v2h-2zM398 298h2v2h-2zM400 250h2v2h-2zM401 257h2v2h-2zM402 266h2v2h-2zM403 249h2v2h-2zM404 296h2v2h-2zM406 304h2v2h-2zM407 212h2v2h-2zM408 240h2v2h-2zM409 300h2v2h-2zM410 236h2v2h-2zM412 434h2v2h-2zM413 277h2v2h-2zM414 294h2v2h-2zM415 257h2v2h-2zM416 269h2v2h-2zM418 272h2v2h-2zM419 230h2v2h-2zM420 236h2v2h-2zM421 280h2v2h-2zM423 267h2v2h-2zM424 297h2v2h-2zM425 262h2v2h-2zM426 244h2v2h-2zM427 237h2v2h-2zM429 228h2v2h-2zM430 274h2v2h-2zM431 271h2v2h-2zM432 245h2v2h-2zM433 228h2v2h-2zM435 272h2v2h-2zM436 241h2v2h-2zM437 215h2v2h-2zM438 208h2v2h-2zM439 268h2v2h-2zM441 254h2v2h-2zM442 262h2v2h-2zM443 268h2v2h-2zM444 217h2v2h-2zM445 220h2v2h-2zM447 276h2v2h-2zM448 266h2v2h-2zM449 215h2v2h-2zM450 276h2v2h-2zM451 255h2v2h-2zM453 265h2v2h-2zM454 391h2v2h-2zM455 282h2v2h-2zM456 245h2v2h-2zM458 276h2v2h-2zM459 243h2v2h-2zM460 231h2v2h-2zM461 317h2v2h-2zM462 339h2v2h-2zM464 213h2v2h-2zM465 254h2v2h-2zM466 233h2v2h-2zM467 252h2v2h-2zM468 240h2v2h-2zM470 268h2v2h-2zM471 247h2v2h-2zM472 252h2v2h-2zM473 265h2v2h-2zM474 204h2v2h-2zM476 251h2v2h-2zM477 235h2v2h-2zM478 223h2v2h-2zM479 225h2v2h-2zM480 222h2v2h-2zM482 213h2v2h-2zM483 240h2v2h-2zM484 266h2v2h-2zM485 252h2v2h-2zM487 236h2v2h-2zM488 216h2v2h-2zM489 218h2v2h-2zM490 250h2v2h-2zM491 251h2v2h-2zM493 205h2v2h-2zM494 241h2v2h-2zM495 196h2v2h-2zM496 310h2v2h-2zM497 259h2v2h-2zM499 245h2v2h-2zM500 259h2v2h-2zM501 191h2v2h-2zM502 248h2v2h-2zM503 204h2v2h-2zM505 241h2v2h-2zM506 206h2v2h-2zM507 236h2v2h-2zM508 219h2v2h-2zM509 220h2v2h-2zM511 242h2v2h-2zM512 192h2v2h-2zM513 236h2v2h-2zM514 220h2v2h-2zM515 206h2v2h-2zM517 213h2v2h-2zM518 197h2v2h-2zM519 242h2v2h-2zM520 247h2v2h-2zM522 216h2v2h-2zM523 175h2v2h-2zM524 232h2v2h-2zM525 255h2v2h-2zM526 195h2v2h-2zM528 207h2v2h-2zM529 192h2v2h-2zM530 206h2v2h-2zM531 222h2v2h-2zM532 189h2v2h-2zM534 202h2v2h-2zM535 219h2v2h-2zM536 242h2v2h-2zM537 226h2v2h-2zM538 254h2v2h-2zM540 223h2v2h-2zM541 200h2v2h-2zM542 228h2v2h-2zM543 244h2v2h-2zM544 181h2v2h-2zM546 167h2v2h-2zM547 230h2v2h-2zM548 174h2v2h-2zM549 220h2v2h-2zM550 167h2v2h-2zM552 208h2v2h-2zM553 239h2v2h-2zM554 165h2v2h-2zM555 150h2v2h-2zM557 217h2v2h-2zM558 166h2v2h-2zM559 147h2v2h-2zM560 246h2v2h-2zM561 203h2v2h-2zM563 216h2v2h-2zM564 208h2v2h-2zM565 213h2v2h-2zM566 321h2v2h-2zM567 152h2v2h-2zM569 145h2v2h-2zM570 188h2v2h-2zM571 176h2v2h-2zM572 137h2v2h-2zM573 196h2v2h-2zM575 231h2v2h-2zM576 310h2v2h-2zM577 163h2v2h-2zM578 157h2v2h-2zM579 160h2v2h-2zM581 139h2v2h-2zM582 192h2v2h-2zM583 221h2v2h-2zM584 147h2v2h-2zM585 165h2v2h-2zM587 185h2v2h-2zM588 202h2v2h-2zM589 165h2v2h-2zM590 142h2v2h-2zM592 163h2v2h-2zM593 149h2v2h-2zM594 166h2v2h-2zM595 186h2v2h-2zM596 131h2v2h-2zM598 107h2v2h-2zM599 129h2v2h-2zM600 183h2v2h-2zM601 182h2v2h-2zM602 183h2v2h-2zM604 156h2v2h-2zM605 194h2v2h-2zM606 167h2v2h-2zM607 252h2v2h-2zM608 166h2v2h-2zM610 183h2v2h-2zM611 169h2v2h-2zM612 161h2v2h-2zM613 207h2v2h-2zM614 211h2v2h-2zM616 130h2v2h-2zM617 123h2v2h-2zM618 195h2v2h-2zM619 312h2v2h-2zM620 183h2v2h-2zM622 104h2v2h-2zM623 190h2v2h-2zM624 221h2v2h-2zM625 154h2v2h-2zM627 254h2v2h-2zM628 283h2v2h-2zM629 191h2v2h-2zM630 178h2v2h-2zM631 263h2v2h-2zM633 107h2v2h-2zM634 135h2v2h-2zM635 211h2v2h-2zM636 199h2v2h-2zM637 136h2v2h-2z"/><path d="M30 382h2v2h-2zM31 383h2v2h-2zM32 381h2v2h-2zM33 382h2v2h-2zM34 381h2v2h-2zM36 382h2v2h-2zM37 382h2v2h-2zM38 382h2v2h-2zM39 382h2v2h-2zM40 382h2v2h-2zM42 382h2v2h-2zM43 381h2v2h-2zM44 378h2v2h-2zM45 382h2v2h-2zM47 381h2v2h-2zM48 383h2v2h-2zM49 380h2v2h-2zM50 379h2v2h-2zM51 382h2v2h-2zM53 379h2v2h-2zM54 383h2v2h-2zM55 381h2v2h-2zM56 381h2v2h-2zM57 382h2v2h-2zM59 378h2v2h-2zM60 380h2v2h-2zM61 379h2v2h-2zM62 380h2v2h-2zM63 378h2v2h-2zM65 380h2v2h-2zM66 379h2v2h-2zM67 380h2v2h-2zM68 379h2v2h-2zM69 381h2v2h-2zM71 377h2v2h-2zM72 380h2v2h-2zM73 377h2v2h-2zM74 376h2v2h-2zM75 376h2v2h-2zM77 375h2v2h-2zM78 380h2v2h-2zM79 377h2v2h-2zM80 378h2v2h-2zM82 376h2v2h-2zM83 378h2v2h-2zM84 377h2v2h-2zM85 377h2v2h-2zM86 379h2v2h-2zM88 376h2v2h-2zM89 375h2v2h-2zM90 377h2v2h-2zM91 373h2v2h-2zM92 376h2v2h-2zM94 375h2v2h-2zM95 377h2v2h-2zM96 374h2v2h-2zM97 377h2v2h-2zM98 374h2v2h-2zM100 373h2v2h-2zM101 374h2v2h-2zM102 376h2v2h-2zM103 373h2v2h-2zM104 377h2v2h-2zM106 375h2v2h-2zM107 373h2v2h-2zM108 374h2v2h-2zM109 374h2v2h-2zM110 372h2v2h-2zM112 373h2v2h-2zM113 375h2v2h-2zM114 373h2v2h-2zM115 375h2v2h-2zM117 372h2v2h-2zM118 370h2v2h-2zM119 374h2v2h-2zM120 372h2v2h-2zM121 373h2v2h-2zM123 371h2v2h-2zM124 369h2v2h-2zM125 375h2v2h-2zM126 371h2v2h-2zM127 372h2v2h-2zM129 370h2v2h-2zM130 372h2v2h-2zM131 371h2v2h-2zM132 369h2v2h-2zM133 372h2v2h-2zM135 370h2v2h-2zM136 369h2v2h-2zM137 368h2v2h-2zM138 366h2v2h-2zM139 366h2v2h-2zM141 368h2v2h-2zM142 370h2v2h-2zM143 368h2v2h-2zM144 370h2v2h-2zM145 369h2v2h-2zM147 369h2v2h-2zM148 368h2v2h-2zM149 371h2v2h-2zM150 365h2v2h-2zM152 379h2v2h-2zM153 406h2v2h-2zM154 380h2v2h-2zM155 376h2v2h-2zM156 376h2v2h-2zM158 358h2v2h-2zM159 407h2v2h-2zM160 354h2v2h-2zM161 392h2v2h-2zM162 356h2v2h-2zM164 332h2v2h-2zM165 348h2v2h-2zM166 333h2v2h-2zM167 333h2v2h-2zM168 362h2v2h-2zM170 353h2v2h-2zM171 364h2v2h-2zM172 351h2v2h-2zM173 337h2v2h-2zM174 386h2v2h-2zM176 433h2v2h-2zM177 432h2v2h-2zM178 367h2v2h-2zM179 369h2v2h-2zM180 362h2v2h-2zM182 354h2v2h-2zM183 349h2v2h-2zM184 375h2v2h-2zM185 341h2v2h-2zM187 362h2v2h-2zM188 345h2v2h-2zM189 405h2v2h-2zM190 361h2v2h-2zM191 380h2v2h-2zM193 362h2v2h-2zM194 359h2v2h-2zM195 336h2v2h-2zM196 365h2v2h-2zM197 350h2v2h-2zM199 359h2v2h-2zM200 339h2v2h-2zM201 374h2v2h-2zM202 343h2v2h-2zM203 323h2v2h-2zM205 350h2v2h-2zM206 336h2v2h-2zM207 363h2v2h-2zM208 373h2v2h-2zM209 360h2v2h-2zM211 373h2v2h-2zM212 335h2v2h-2zM213 330h2v2h-2zM214 351h2v2h-2zM216 360h2v2h-2zM217 343h2v2h-2zM218 421h2v2h-2zM219 331h2v2h-2zM220 354h2v2h-2zM222 345h2v2h-2zM223 466h2v2h-2zM224 329h2v2h-2zM225 314h2v2h-2zM226 351h2v2h-2zM228 324h2v2h-2zM229 320h2v2h-2zM230 320h2v2h-2zM231 347h2v2h-2zM232 329h2v2h-2zM234 336h2v2h-2zM235 309h2v2h-2zM236 319h2v2h-2zM237 356h2v2h-2zM238 364h2v2h-2zM240 317h2v2h-2zM241 349h2v2h-2zM242 357h2v2h-2zM243 353h2v2h-2zM244 326h2v2h-2zM246 353h2v2h-2zM247 395h2v2h-2zM248 398h2v2h-2zM249 348h2v2h-2zM251 328h2v2h-2zM252 359h2v2h-2zM253 348h2v2h-2zM254 407h2v2h-2zM255 335h2v2h-2zM257 310h2v2h-2zM258 331h2v2h-2zM259 328h2v2h-2zM260 347h2v2h-2zM261 333h2v2h-2zM263 340h2v2h-2zM264 328h2v2h-2zM265 339h2v2h-2zM266 305h2v2h-2zM267 318h2v2h-2zM269 415h2v2h-2zM270 330h2v2h-2zM271 335h2v2h-2zM272 352h2v2h-2zM273 312h2v2h-2zM275 343h2v2h-2zM276 351h2v2h-2zM277 339h2v2h-2zM278 308h2v2h-2zM279 352h2v2h-2zM281 306h2v2h-2zM282 312h2v2h-2zM283 321h2v2h-2zM284 344h2v2h-2zM286 330h2v2h-2zM287 313h2v2h-2zM288 323h2v2h-2zM289 342h2v2h-2zM290 328h2v2h-2zM292 307h2v2h-2zM293 304h2v2h-2zM294 382h2v2h-2zM295 344h2v2h-2zM296 308h2v2h-2zM298 300h2v2h-2zM299 328h2v2h-2zM300 303h2v2h-2zM301 309h2v2h-2zM302 301h2v2h-2zM304 320h2v2h-2zM305 296h2v2h-2zM306 308h2v2h-2zM307 393h2v2h-2zM308 298h2v2h-2zM310 377h2v2h-2zM311 329h2v2h-2zM312 331h2v2h-2zM313 336h2v2h-2zM314 299h2v2h-2zM316 324h2v2h-2zM317 313h2v2h-2zM318 314h2v2h-2zM319 418h2v2h-2zM321 299h2v2h-2zM322 308h2v2h-2zM323 299h2v2h-2zM324 324h2v2h-2zM325 322h2v2h-2zM327 344h2v2h-2zM328 344h2v2h-2zM329 338h2v2h-2zM330 321h2v2h-2zM331 339h2v2h-2zM333 343h2v2h-2zM334 338h2v2h-2zM335 298h2v2h-2zM336 341h2v2h-2zM337 307h2v2h-2zM339 338h2v2h-2zM340 319h2v2h-2zM341 294h2v2h-2zM342 336h2v2h-2zM343 345h2v2h-2zM345 297h2v2h-2zM346 289h2v2h-2zM347 294h2v2h-2zM348 316h2v2h-2zM349 291h2v2h-2zM351 287h2v2h-2zM352 291h2v2h-2zM353 324h2v2h-2zM354 294h2v2h-2zM356 326h2v2h-2zM357 323h2v2h-2zM358 335h2v2h-2zM359 322h2v2h-2zM360 293h2v2h-2zM362 299h2v2h-2zM363 288h2v2h-2zM364 338h2v2h-2zM365 330h2v2h-2zM366 295h2v2h-2zM368 284h2v2h-2zM369 280h2v2h-2zM370 286h2v2h-2zM371 357h2v2h-2zM372 330h2v2h-2zM374 345h2v2h-2zM375 284h2v2h-2zM376 305h2v2h-2zM377 319h2v2h-2zM378 354h2v2h-2zM380 288h2v2h-2zM381 305h2v2h-2zM382 303h2v2h-2zM383 287h2v2h-2zM385 282h2v2h-2zM386 352h2v2h-2zM387 308h2v2h-2zM388 296h2v2h-2zM389 345h2v2h-2zM391 282h2v2h-2zM392 289h2v2h-2zM393 235h2v2h-2zM394 300h2v2h-2zM395 290h2v2h-2zM397 294h2v2h-2zM398 248h2v2h-2zM399 255h2v2h-2zM400 237h2v2h-2zM401 333h2v2h-2zM403 257h2v2h-2zM404 251h2v2h-2zM405 236h2v2h-2zM406 240h2v2h-2zM407 224h2v2h-2zM409 228h2v2h-2zM410 337h2v2h-2zM411 228h2v2h-2zM412 300h2v2h-2zM413 299h2v2h-2zM415 238h2v2h-2zM416 271h2v2h-2zM417 252h2v2h-2zM418 232h2v2h-2zM420 293h2v2h-2zM421 286h2v2h-2zM422 265h2v2h-2zM423 254h2v2h-2zM424 261h2v2h-2zM426 233h2v2h-2zM427 237h2v2h-2zM428 248h2v2h-2zM429 219h2v2h-2zM430 237h2v2h-2zM432 246h2v2h-2zM433 242h2v2h-2zM434 239h2v2h-2zM435 225h2v2h-2zM436 251h2v2h-2zM438 196h2v2h-2zM439 255h2v2h-2zM440 248h2v2h-2zM441 206h2v2h-2zM442 221h2v2h-2zM444 256h2v2h-2zM445 204h2v2h-2zM446 269h2v2h-2zM447 247h2v2h-2zM448 261h2v2h-2zM450 237h2v2h-2zM451 214h2v2h-2zM452 351h2v2h-2zM453 266h2v2h-2zM455 257h2v2h-2zM456 216h2v2h-2zM457 239h2v2h-2zM458 207h2v2h-2zM459 224h2v2h-2zM461 273h2v2h-2zM462 260h2v2h-2zM463 246h2v2h-2zM464 236h2v2h-2zM465 238h2v2h-2zM467 213h2v2h-2zM468 223h2v2h-2zM469 235h2v2h-2zM470 266h2v2h-2zM471 208h2v2h-2zM473 313h2v2h-2zM474 206h2v2h-2zM475 245h2v2h-2zM476 228h2v2h-2zM477 209h2v2h-2zM479 243h2v2h-2zM480 350h2v2h-2zM481 208h2v2h-2zM482 236h2v2h-2zM483 234h2v2h-2zM485 216h2v2h-2zM486 250h2v2h-2zM487 233h2v2h-2zM488 220h2v2h-2zM490 237h2v2h-2zM491 215h2v2h-2zM492 211h2v2h-2zM493 329h2v2h-2zM494 262h2v2h-2zM496 205h2v2h-2zM497 243h2v2h-2zM498 239h2v2h-2zM499 255h2v2h-2zM500 262h2v2h-2zM502 220h2v2h-2zM503 256h2v2h-2zM504 227h2v2h-2zM505 256h2v2h-2zM506 239h2v2h-2zM508 236h2v2h-2zM509 219h2v2h-2zM510 224h2v2h-2zM511 195h2v2h-2zM512 238h2v2h-2zM514 322h2v2h-2zM515 205h2v2h-2zM516 214h2v2h-2zM517 199h2v2h-2zM518 189h2v2h-2zM520 235h2v2h-2zM521 189h2v2h-2zM522 244h2v2h-2zM523 179h2v2h-2zM525 232h2v2h-2zM526 207h2v2h-2zM527 351h2v2h-2zM528 191h2v2h-2zM529 239h2v2h-2zM531 215h2v2h-2zM532 231h2v2h-2zM533 196h2v2h-2zM534 204h2v2h-2zM535 197h2v2h-2zM537 177h2v2h-2zM538 307h2v2h-2zM539 242h2v2h-2zM540 281h2v2h-2zM541 248h2v2h-2zM543 319h2v2h-2zM544 277h2v2h-2zM545 176h2v2h-2zM546 187h2v2h-2zM547 163h2v2h-2zM549 168h2v2h-2zM550 188h2v2h-2zM551 196h2v2h-2zM552 151h2v2h-2zM554 178h2v2h-2zM555 201h2v2h-2zM556 242h2v2h-2zM557 201h2v2h-2zM558 245h2v2h-2zM560 218h2v2h-2zM561 228h2v2h-2zM562 245h2v2h-2zM563 126h2v2h-2zM564 197h2v2h-2zM566 152h2v2h-2zM567 246h2v2h-2zM568 198h2v2h-2zM569 144h2v2h-2zM570 152h2v2h-2zM572 165h2v2h-2zM573 228h2v2h-2zM574 140h2v2h-2zM575 220h2v2h-2zM576 353h2v2h-2zM578 113h2v2h-2zM579 162h2v2h-2zM580 214h2v2h-2zM581 163h2v2h-2zM582 161h2v2h-2zM584 189h2v2h-2zM585 314h2v2h-2zM586 250h2v2h-2zM587 241h2v2h-2zM589 220h2v2h-2zM590 232h2v2h-2zM591 236h2v2h-2zM592 246h2v2h-2zM593 152h2v2h-2zM595 165h2v2h-2zM596 205h2v2h-2zM597 195h2v2h-2zM598 131h2v2h-2zM599 147h2v2h-2zM601 127h2v2h-2zM602 156h2v2h-2zM603 113h2v2h-2zM604 160h2v2h-2zM605 220h2v2h-2zM607 227h2v2h-2zM608 177h2v2h-2zM609 191h2v2h-2zM610 224h2v2h-2zM611 223h2v2h-2zM613 240h2v2h-2zM614 187h2v2h-2zM615 160h2v2h-2zM616 140h2v2h-2zM617 212h2v2h-2zM619 134h2v2h-2zM620 126h2v2h-2zM621 184h2v2h-2zM622 187h2v2h-2zM624 185h2v2h-2zM625 200h2v2h-2zM626 126h2v2h-2zM627 126h2v2h-2zM628 227h2v2h-2zM630 170h2v2h-2zM631 251h2v2h-2zM632 245h2v2h-2zM633 149h2v2h-2zM634 159h2v2h-2zM636 113h2v2h-2zM637 222h2v2h-2zM638 62h2v2h-2z"/></g><path d="M435 243L432 237M435 243L438 237M432 237H438" fill="none" stroke="#ff0000" stroke-width="1" stroke-linecap="square" shape-rendering="crispEdges" transform="translate(.5 .5)"/><path d="M566 217L563 211M566 217L569 211M563 211H569" fill="none" stroke="#0000ff" stroke-width="1" stroke-linecap="square" shape-rendering="crispEdges" transform="translate(.5 .5)"/><path d="M630 195L627 189M630 195L633 189M627 189H633" fill="none" stroke="#ffff00" stroke-width="1" stroke-linecap="square" shape-rendering="crispEdges" transform="translate(.5 .5)"/></svg>
<svg style="left:1032px;top:572px;background:#000" width="659" height="514" viewBox="0 0 659 514"><text x="2.5" y="15.3" textLength="64.8" lengthAdjust="spacingAndGlyphs">S21 Gain (dB)</text><path d="M30 20V499M132 20V499M233 20V499M334 20V499M436 20V499M538 20V499M639 20V499M25 30H639M25 76H639M25 123H639M25 169H639M25 216H639M25 262H639M25 308H639M25 355H639M25 401H639M25 448H639M25 494H639" stroke="#c0c0c0" fill="none" stroke-linecap="square" shape-rendering="crispEdges" transform="translate(.5 .5)"/><text x="3" y="34.3">-10</text><text x="3" y="80.3">-20</text><text x="3" y="127.3">-30</text><text x="3" y="173.3">-40</text><text x="3" y="220.3">-50</text><text x="3" y="266.3">-60</text><text x="3" y="312.3">-70</text><text x="3" y="359.3">-80</text><text x="3" y="405.3">-90</text><text x="3" y="452.3">-100</text><text x="3" y="494.3">-110</text><text x="10" y="509.3">50k</text><text x="112" y="509.3">250.0M</text><text x="213" y="509.3">500.0M</text><text x="314" y="509.3">750.0M</text><text x="416" y="509.3">1000.0M</text><text x="518" y="509.3">1250.0M</text><text x="619" y="509.3">1500.0M</text><g fill="none" stroke="rgba(85,255,0,0.55)" stroke-width="1" stroke-linecap="square" shape-rendering="crispEdges" transform="translate(.5 .5)"><path d="M30 360l1 0M31 360l0 13M40 349l0 -3M40 346l1 11M49 372l1 16M50 388l1 -21M59 360l1 17M60 377l0 -52M69 357l0 -33M69 324l1 19M78 331l1 1M79 332l0 16M88 332l1 -10M89 322l0 26M98 347l0 -7M98 340l1 -28M107 314l1 -8M108 306l0 41M117 300l1 -8M118 292l0 3M127 291l0 6M127 297l1 -4M136 303l1 -8M137 295l0 -23M146 282l0 33M146 315l1 -25M156 279l0 -27M156 252l1 36M165 293l1 0M166 293l0 -17M175 253l0 7M175 260l1 30M185 260l0 8M185 268l1 29M194 298l1 -25M195 273l0 -6M204 265l0 -24M204 241l1 44M213 237l1 0M214 237l1 5M223 243l1 6M224 249l0 -2M233 234l0 32M233 266l1 -25M242 225l1 58M243 283l1 -39M252 236l1 69M253 305l0 -61M262 281l0 -28M262 253l1 -25M271 247l1 -26M272 221l1 -10M281 218l1 -6M282 212l0 22M291 235l0 -2M291 233l1 -9M300 212l1 71M301 283l1 -32M310 208l1 36M311 244l0 -13M320 211l0 5M320 216l1 29M329 234l1 12M330 246l1 3M339 218l1 6M340 224l0 -3M349 247l0 -40M349 207l1 39M358 211l1 -1M359 210l1 5M368 204l1 -8M369 196l0 24M378 206l0 9M378 215l1 -21M387 213l1 8M388 221l1 -34M397 187l1 -24M398 163l0 33M407 180l0 6M407 186l1 -13M416 232l1 -39M417 193l0 -10M426 152l1 39M427 191l0 -25M436 156l0 5M436 161l1 12M445 158l1 17M446 175l0 21M455 157l1 -17M456 140l0 38M465 184l0 2M465 186l1 3M474 224l1 -66M475 158l0 21M484 162l0 -3M484 159l1 -2M494 184l0 -4M494 180l1 -34M503 176l1 -31M504 145l0 3M513 176l0 -35M513 141l1 18M523 165l0 -21M523 144l1 14M532 145l1 -16M533 129l0 35M542 141l0 12M542 153l1 -15M551 125l1 26M552 151l1 -12M561 123l1 61M562 184l0 -55M571 169l0 -34M571 135l1 2M580 127l1 36M581 163l1 14M590 129l1 -12M591 117l0 9M600 114l0 40M600 154l1 -76M609 247l1 -138M610 109l1 43M619 119l1 -3M620 116l0 71M629 207l0 -46M629 161l1 154M638 169l1 -43"/><path d="M31 373l1 -4M32 369l0 8M41 357l0 8M41 365l1 -12M51 367l0 22M51 389l1 14M60 325l1 47M61 372l0 -4M70 343l0 37M70 380l1 -36M79 348l1 -22M80 326l1 34M89 348l1 13M90 361l0 -6M99 312l0 12M99 324l1 -5M108 347l1 -39M109 308l1 3M118 295l1 11M119 306l0 3M128 293l0 8M128 301l1 -12M137 272l1 28M138 300l1 -6M147 290l1 -26M148 264l0 17M157 288l0 17M157 305l1 -12M166 276l1 -1M167 275l1 30M176 290l1 -23M177 267l0 9M186 297l0 -12M186 285l1 12M195 267l1 -5M196 262l1 8M205 285l1 -27M206 258l0 -7M215 242l0 9M215 251l1 8M224 247l1 17M225 264l1 -19M234 241l1 84M235 325l0 -58M244 244l0 -5M244 239l1 22M253 244l1 -3M254 241l1 -8M263 228l1 40M264 268l0 -11M273 211l0 0M273 211l1 -6M282 234l1 -5M283 229l0 -13M292 224l1 20M293 244l0 13M302 251l0 -12M302 239l1 -20M311 231l1 4M312 235l0 -27M321 245l1 -38M322 207l0 8M331 249l0 -47M331 202l1 36M340 221l1 -9M341 212l0 29M350 246l0 14M350 260l1 -40M360 215l0 16M360 231l1 -16M369 220l1 -12M370 208l0 12M379 194l0 3M379 197l1 4M389 187l0 41M389 228l1 -40M398 196l1 7M399 203l0 -1M408 173l0 -12M408 161l1 25M417 183l1 -22M418 161l1 28M427 166l1 10M428 176l0 -23M437 173l0 -5M437 168l1 -18M446 196l1 -31M447 165l1 -20M456 178l1 14M457 192l0 -31M466 189l0 -23M466 166l1 88M475 179l1 -14M476 165l1 4M485 157l1 -3M486 154l0 13M495 146l0 -4M495 142l1 -5M504 148l1 -5M505 143l1 2M514 159l1 12M515 171l0 -17M524 158l0 -10M524 148l1 1M533 164l1 36M534 200l1 -43M543 138l1 2M544 140l0 5M553 139l0 -16M553 123l1 -3M562 129l1 -29M563 100l1 43M572 137l1 -4M573 133l0 32M582 177l0 -111M582 66l1 82M591 126l1 -6M592 120l1 -45M601 78l1 75M602 153l0 -46M611 152l0 -59M611 93l1 63M620 187l1 -39M621 148l0 -18M630 315l1 -188M631 127l0 29"/><path d="M32 377l1 -8M33 369l1 11M42 353l1 35M43 388l0 -17M52 403l0 -53M52 350l1 0M61 368l1 15M62 383l1 5M71 344l1 -7M72 337l0 9M81 360l0 -3M81 357l1 -9M90 355l1 0M91 355l1 -10M100 319l1 3M101 322l0 -1M110 311l0 11M110 322l1 -2M119 309l1 -18M120 291l1 -1M129 289l1 -1M130 288l0 17M139 294l0 -16M139 278l1 -5M148 281l1 -13M149 268l1 -4M158 293l1 -29M159 264l0 9M168 305l0 -54M168 251l1 23M177 276l1 1M178 277l0 -21M187 297l1 -40M188 257l0 2M197 270l0 4M197 274l1 26M206 251l1 11M207 262l0 -21M216 259l1 -10M217 249l0 47M226 245l0 12M226 257l1 -21M235 267l1 -38M236 229l0 1M245 261l0 56M245 317l1 -60M255 233l0 17M255 250l1 -7M264 257l1 -21M265 236l0 12M274 205l0 6M274 211l1 6M283 216l1 34M284 250l1 -34M293 257l1 -41M294 216l0 -10M303 219l0 -3M303 216l1 22M312 208l1 18M313 226l1 -1M322 215l1 -5M323 210l0 -4M332 238l0 -30M332 208l1 -19M341 241l1 30M342 271l1 -26M351 220l1 -10M352 210l0 -16M361 215l0 1M361 216l1 50M370 220l1 0M371 220l1 12M380 201l1 -9M381 192l0 -3M390 188l0 22M390 210l1 5M399 202l1 -34M400 168l1 26M409 186l1 -18M410 168l0 10M419 189l0 -33M419 156l1 17M428 153l1 22M429 175l1 -17M438 150l1 32M439 182l0 -24M448 145l0 37M448 182l1 10M457 161l1 10M458 171l1 32M467 254l1 -91M468 163l0 14M477 169l0 -1M477 168l1 -7M486 167l1 9M487 176l1 -25M496 137l1 5M497 142l0 0M506 145l0 -1M506 144l1 34M515 154l1 -7M516 147l0 -1M525 149l1 -4M526 145l0 -11M535 157l0 -26M535 131l1 5M544 145l1 -14M545 131l0 13M554 120l1 2M555 122l0 -8M564 143l0 -20M564 123l1 23M573 165l1 -20M574 145l0 -9M583 148l0 -6M583 142l1 48M593 75l0 69M593 144l1 13M602 107l1 34M603 141l0 -29M612 156l0 -56M612 100l1 5M621 130l1 49M622 179l1 -42M631 156l1 -6M632 150l0 44"/><path d="M34 380l0 -18M34 362l1 18M43 371l1 -26M44 345l0 103M53 350l1 1M54 351l0 3M63 388l0 -38M63 350l1 -22M72 346l1 9M73 355l0 -5M82 348l1 -13M83 335l0 -10M92 345l0 -17M92 328l1 20M101 321l1 12M102 333l0 -9M111 320l0 -17M111 303l1 -2M121 290l0 19M121 309l1 -3M130 305l1 5M131 310l0 -16M140 273l0 32M140 305l1 -23M150 264l0 -4M150 260l1 14M159 273l1 23M160 296l0 -2M169 274l0 96M169 370l1 -114M178 256l1 -11M179 245l1 27M188 259l1 -1M189 258l0 -3M198 300l0 -18M198 282l1 6M207 241l1 5M208 246l1 14M217 296l1 -45M218 251l0 -14M227 236l0 32M227 268l1 -29M236 230l1 39M237 269l1 -30M246 257l1 -28M247 229l0 37M256 243l0 -4M256 239l1 13M265 248l1 -28M266 220l1 35M275 217l1 2M276 219l0 26M285 216l0 24M285 240l1 49M294 206l1 42M295 248l1 -23M304 238l1 1M305 239l0 -6M314 225l0 12M314 237l1 8M323 206l1 17M324 223l1 -13M333 189l1 22M334 211l0 36M343 245l0 -35M343 210l1 -5M352 194l1 33M353 227l1 -14M362 266l1 -61M363 205l0 28M372 232l0 -35M372 197l1 7M381 189l1 70M382 259l0 -68M391 215l1 -27M392 188l0 66M401 194l0 -5M401 189l1 -10M410 178l1 19M411 197l0 -3M420 173l1 18M421 191l0 16M430 158l0 9M430 167l1 16M439 158l1 32M440 190l0 -19M449 192l0 -21M449 171l1 103M459 203l0 -38M459 165l1 17M468 177l1 -7M469 170l0 31M478 161l0 -1M478 160l1 5M488 151l0 3M488 154l1 17M497 142l1 47M498 189l0 -38M507 178l0 -38M507 140l1 15M516 146l1 -4M517 142l1 22M526 134l1 8M527 142l0 0M536 136l0 -3M536 133l1 -9M545 144l1 -22M546 122l1 29M555 114l1 4M556 118l0 16M565 146l0 -9M565 137l1 39M574 136l1 -28M575 108l1 39M584 190l1 -1M585 189l0 -56M594 157l0 -43M594 114l1 45M603 112l1 -4M604 108l1 -6M613 105l1 62M614 167l0 -47M623 137l0 31M623 168l1 -31M632 194l1 2M633 196l1 -43"/><path d="M35 380l0 -12M35 368l1 -11M44 448l1 -77M45 371l1 79M54 354l1 31M55 385l0 -17M64 328l0 51M64 379l1 -18M73 350l1 9M74 359l1 -25M83 325l1 44M84 369l0 -34M93 348l0 -22M93 326l1 4M102 324l1 -18M103 306l1 20M112 301l1 0M113 301l0 8M122 306l0 -9M122 297l1 -4M131 294l1 -13M132 281l1 15M141 282l1 -5M142 277l0 12M151 274l0 -16M151 258l1 10M160 294l1 -17M161 277l1 -27M170 256l1 43M171 299l0 -1M180 272l0 16M180 288l1 1M189 255l1 34M190 289l1 -33M199 288l1 -12M200 276l0 -8M209 260l0 -3M209 257l1 17M218 237l1 22M219 259l1 7M228 239l1 26M229 265l0 -24M238 239l0 42M238 281l1 -27M247 266l1 -29M248 237l0 -5M257 252l1 10M258 262l0 -18M267 255l0 -15M267 240l1 19M276 245l1 -28M277 217l0 65M286 289l1 -35M287 254l0 -7M296 225l0 41M296 266l1 -28M305 233l1 -23M306 210l0 18M315 245l0 -33M315 212l1 37M325 210l0 -4M325 206l1 2M334 247l1 -8M335 239l0 11M344 205l0 44M344 249l1 -3M354 213l0 17M354 230l1 15M363 233l1 -21M364 212l0 -5M373 204l0 13M373 217l1 18M382 191l1 -3M383 188l1 27M392 254l1 -52M393 202l0 7M402 179l0 -15M402 164l1 -15M411 194l1 -28M412 166l1 3M421 207l1 -51M422 156l0 26M431 183l0 -3M431 180l1 -15M440 171l1 2M441 173l1 8M450 274l1 -92M451 182l0 2M460 182l0 -10M460 172l1 13M469 201l1 -38M470 163l1 -4M479 165l1 14M480 179l0 -13M489 171l0 -24M489 147l1 25M498 151l1 8M499 159l1 19M508 155l1 24M509 179l0 -34M518 164l0 -22M518 142l1 -6M527 142l1 4M528 146l1 7M537 124l1 0M538 124l0 6M547 151l0 -24M547 127l1 -35M556 134l1 1M557 135l1 -22M566 176l1 -25M567 151l0 -1M576 147l0 -28M576 119l1 31M585 133l1 69M586 202l0 -41M595 159l1 22M596 181l0 -81M605 102l0 30M605 132l1 51M614 120l1 27M615 147l0 53M624 137l1 -2M625 135l0 -13M634 153l0 15M634 168l1 83"/><path d="M36 357l1 15M37 372l0 -15M46 450l0 -124M46 326l1 25M55 368l1 16M56 384l1 -46M65 361l1 88M66 449l0 -66M75 334l0 22M75 356l1 -17M84 335l1 -11M85 324l1 17M94 330l1 -12M95 318l0 0M104 326l0 -19M104 307l1 9M113 309l1 -9M114 300l0 -3M123 293l1 9M124 302l0 -10M133 296l0 -8M133 288l1 -1M142 289l1 -9M143 280l0 21M152 268l1 -9M153 259l0 -10M162 250l0 35M162 285l1 23M171 298l1 -32M172 266l0 18M181 289l0 -10M181 279l1 36M191 256l0 10M191 266l1 14M200 268l1 14M201 282l0 -15M210 274l0 -27M210 247l1 -8M220 266l0 -6M220 260l1 -7M229 241l1 19M230 260l0 -6M239 254l0 0M239 254l1 -3M248 232l1 30M249 262l1 8M258 244l1 19M259 263l0 -16M268 259l0 -2M268 257l1 10M277 282l1 -54M278 228l1 12M287 247l1 -17M288 230l0 5M297 238l0 -8M297 230l1 -12M306 228l1 0M307 228l1 -6M316 249l1 -21M317 228l0 -12M326 208l0 23M326 231l1 -33M335 250l1 -1M336 249l1 -22M345 246l1 -45M346 201l0 21M355 245l0 -5M355 240l1 -26M364 207l1 13M365 220l1 8M374 235l1 -39M375 196l0 1M384 215l0 7M384 222l1 -30M393 209l1 31M394 240l1 -51M403 149l1 42M404 191l0 -34M413 169l0 5M413 174l1 17M422 182l1 -6M423 176l1 -22M432 165l1 0M433 165l0 17M442 181l0 -19M442 162l1 1M451 184l1 30M452 214l0 -58M461 185l1 -1M462 184l0 4M471 159l0 20M471 179l1 -1M480 166l1 2M481 168l0 -3M490 172l1 -19M491 153l0 73M500 178l0 -12M500 166l1 -11M509 145l1 39M510 184l0 -24M519 136l0 -3M519 133l1 17M529 153l0 -14M529 139l1 -7M538 130l1 32M539 162l0 -36M548 92l0 57M548 149l1 57M558 113l0 25M558 138l1 -6M567 150l1 -9M568 141l0 11M577 150l0 -17M577 133l1 -29M586 161l1 -50M587 111l1 -7M596 100l1 33M597 133l0 -15M606 183l0 -68M606 115l1 -17M615 200l1 44M616 244l1 -138M625 122l1 -1M626 121l0 -10M635 251l0 -87M635 164l1 -81"/><path d="M37 357l1 4M38 361l0 49M47 351l1 28M48 379l0 -33M57 338l0 1M57 339l1 18M66 383l1 -32M67 351l0 23M76 339l0 -4M76 335l1 4M86 341l0 15M86 356l1 -13M95 318l1 31M96 349l0 -38M105 316l0 9M105 325l1 0M114 297l1 26M115 323l1 -30M124 292l1 16M125 308l0 -5M134 287l0 12M134 299l1 7M143 301l1 -41M144 260l1 19M153 249l1 -1M154 248l0 2M163 308l0 11M163 319l1 -69M172 284l1 -27M173 257l1 17M182 315l1 -29M183 286l0 -25M192 280l0 -17M192 263l1 -6M201 267l1 31M202 298l1 -10M211 239l1 34M212 273l0 19M221 253l0 71M221 324l1 -62M230 254l1 8M231 262l1 14M240 251l1 -23M241 228l0 44M250 270l0 -36M250 234l1 -7M259 247l1 18M260 265l1 -31M269 267l1 -53M270 214l0 38M279 240l0 -7M279 233l1 7M288 235l1 28M289 263l1 -33M298 218l1 -5M299 213l0 26M308 222l0 32M308 254l1 -9M317 216l1 21M318 237l1 12M327 198l1 -5M328 193l0 12M337 227l0 -23M337 204l1 22M346 222l1 -8M347 214l0 -7M356 214l1 34M357 248l0 -37M366 228l0 -9M366 219l1 -17M375 197l1 24M376 221l0 -20M385 192l1 18M386 210l0 -13M395 189l0 -15M395 174l1 19M404 157l1 11M405 168l0 -9M414 191l0 1M414 192l1 -27M424 154l0 18M424 172l1 -13M433 182l1 -32M434 150l0 15M443 163l0 27M443 190l1 -24M452 156l1 0M453 156l1 4M462 188l1 -5M463 183l0 12M472 178l0 -8M472 170l1 63M481 165l1 33M482 198l1 0M491 226l1 -41M492 185l0 -23M501 155l0 24M501 179l1 4M510 160l1 12M511 172l1 -32M520 150l1 -21M521 129l0 16M530 132l0 7M530 139l1 -13M539 126l1 15M540 141l1 -15M549 206l1 -81M550 125l0 20M559 132l0 49M559 181l1 -63M568 152l1 -25M569 127l1 -11M578 104l1 4M579 108l0 10M588 104l0 75M588 179l1 -69M597 118l1 -22M598 96l1 118M607 98l1 26M608 124l0 21M617 106l0 32M617 138l1 16M626 111l1 247M627 358l1 -148M636 83l1 51M637 134l0 11"/><path d="M38 410l1 -48M39 362l1 -13M48 346l1 6M49 352l0 20M58 357l0 -7M58 350l1 10M67 374l1 -11M68 363l1 -6M77 339l1 33M78 372l0 -41M87 343l0 22M87 365l1 -33M96 311l1 110M97 421l1 -74M106 325l1 -14M107 311l0 3M116 293l0 52M116 345l1 -45M125 303l1 11M126 314l1 -23M135 306l1 -20M136 286l0 17M145 279l0 6M145 285l1 -3M154 250l1 48M155 298l1 -19M164 250l1 28M165 278l0 15M174 274l0 -2M174 272l1 -19M183 261l1 15M184 276l1 -16M193 257l1 41M194 298l0 0M203 288l0 3M203 291l1 -26M212 292l1 -52M213 240l0 -3M222 262l1 -12M223 250l0 -7M232 276l0 -25M232 251l1 -17M241 272l1 -25M242 247l0 -22M251 227l1 49M252 276l0 -40M261 234l0 6M261 240l1 41M270 252l1 -15M271 237l0 10M280 240l0 6M280 246l1 -28M290 230l0 -18M290 212l1 23M299 239l1 -25M300 214l0 -2M309 245l0 -36M309 209l1 -1M319 249l0 -24M319 225l1 -14M328 205l1 1M329 206l0 28M338 226l0 -5M338 221l1 -3M347 207l1 64M348 271l1 -24M357 211l1 6M358 217l0 -6M367 202l0 11M367 213l1 -9M376 201l1 14M377 215l1 -9M386 197l1 13M387 210l0 3M396 193l0 -20M396 173l1 14M405 159l1 8M406 167l1 13M415 165l1 29M416 194l0 38M425 159l0 83M425 242l1 -90M434 165l1 -15M435 150l1 6M444 166l1 -10M445 156l0 2M454 160l0 37M454 197l1 -40M463 195l1 -12M464 183l1 1M473 233l1 -61M474 172l0 52M483 198l0 10M483 208l1 -46M492 162l1 8M493 170l1 14M502 183l1 -8M503 175l0 1M512 140l0 18M512 158l1 18M521 145l1 6M522 151l1 14M531 126l1 28M532 154l0 -9M541 126l0 19M541 145l1 -4M550 145l1 3M551 148l0 -23M560 118l1 24M561 142l0 -19M570 116l0 14M570 130l1 39M579 118l1 28M580 146l0 -19M589 110l1 0M590 110l0 19M599 214l0 -119M599 95l1 19M608 145l1 18M609 163l0 84M618 154l0 30M618 184l1 -65M628 210l0 -34M628 176l1 31M637 145l1 2M638 147l0 22"/></g><g fill="rgba(85,255,0,0.55)" shape-rendering="crispEdges"><path d="M29 359h2v2h-2zM30 372h2v2h-2zM31 376h2v2h-2zM33 379h2v2h-2zM34 379h2v2h-2zM35 356h2v2h-2zM36 356h2v2h-2zM37 409h2v2h-2zM39 348h2v2h-2zM40 356h2v2h-2zM41 352h2v2h-2zM42 370h2v2h-2zM43 447h2v2h-2zM45 449h2v2h-2zM46 350h2v2h-2zM47 345h2v2h-2zM48 371h2v2h-2zM50 366h2v2h-2zM51 402h2v2h-2zM52 349h2v2h-2zM53 353h2v2h-2zM54 367h2v2h-2zM56 337h2v2h-2zM57 356h2v2h-2zM58 359h2v2h-2zM59 324h2v2h-2zM60 367h2v2h-2zM62 387h2v2h-2zM63 327h2v2h-2zM64 360h2v2h-2zM65 382h2v2h-2zM66 373h2v2h-2zM68 356h2v2h-2zM69 342h2v2h-2zM70 343h2v2h-2zM71 345h2v2h-2zM72 349h2v2h-2zM74 333h2v2h-2zM75 338h2v2h-2zM76 338h2v2h-2zM77 330h2v2h-2zM78 347h2v2h-2zM80 359h2v2h-2zM81 347h2v2h-2zM82 324h2v2h-2zM83 334h2v2h-2zM85 340h2v2h-2zM86 342h2v2h-2zM87 331h2v2h-2zM88 347h2v2h-2zM89 354h2v2h-2zM91 344h2v2h-2zM92 347h2v2h-2zM93 329h2v2h-2zM94 317h2v2h-2zM95 310h2v2h-2zM97 346h2v2h-2zM98 311h2v2h-2zM99 318h2v2h-2zM100 320h2v2h-2zM101 323h2v2h-2zM103 325h2v2h-2zM104 315h2v2h-2zM105 324h2v2h-2zM106 313h2v2h-2zM107 346h2v2h-2zM109 310h2v2h-2zM110 319h2v2h-2zM111 300h2v2h-2zM112 308h2v2h-2zM113 296h2v2h-2zM115 292h2v2h-2zM116 299h2v2h-2zM117 294h2v2h-2zM118 308h2v2h-2zM120 289h2v2h-2zM121 305h2v2h-2zM122 292h2v2h-2zM123 291h2v2h-2zM124 302h2v2h-2zM126 290h2v2h-2zM127 292h2v2h-2zM128 288h2v2h-2zM129 304h2v2h-2zM130 293h2v2h-2zM132 295h2v2h-2zM133 286h2v2h-2zM134 305h2v2h-2zM135 302h2v2h-2zM136 271h2v2h-2zM138 293h2v2h-2zM139 272h2v2h-2zM140 281h2v2h-2zM141 288h2v2h-2zM142 300h2v2h-2zM144 278h2v2h-2zM145 281h2v2h-2zM146 289h2v2h-2zM147 280h2v2h-2zM149 263h2v2h-2zM150 273h2v2h-2zM151 267h2v2h-2zM152 248h2v2h-2zM153 249h2v2h-2zM155 278h2v2h-2zM156 287h2v2h-2zM157 292h2v2h-2zM158 272h2v2h-2zM159 293h2v2h-2zM161 249h2v2h-2zM162 307h2v2h-2zM163 249h2v2h-2zM164 292h2v2h-2zM165 275h2v2h-2zM167 304h2v2h-2zM168 273h2v2h-2zM169 255h2v2h-2zM170 297h2v2h-2zM171 283h2v2h-2zM173 273h2v2h-2zM174 252h2v2h-2zM175 289h2v2h-2zM176 275h2v2h-2zM177 255h2v2h-2zM179 271h2v2h-2zM180 288h2v2h-2zM181 314h2v2h-2zM182 260h2v2h-2zM184 259h2v2h-2zM185 296h2v2h-2zM186 296h2v2h-2zM187 258h2v2h-2zM188 254h2v2h-2zM190 255h2v2h-2zM191 279h2v2h-2zM192 256h2v2h-2zM193 297h2v2h-2zM194 266h2v2h-2zM196 269h2v2h-2zM197 299h2v2h-2zM198 287h2v2h-2zM199 267h2v2h-2zM200 266h2v2h-2zM202 287h2v2h-2zM203 264h2v2h-2zM204 284h2v2h-2zM205 250h2v2h-2zM206 240h2v2h-2zM208 259h2v2h-2zM209 273h2v2h-2zM210 238h2v2h-2zM211 291h2v2h-2zM212 236h2v2h-2zM214 241h2v2h-2zM215 258h2v2h-2zM216 295h2v2h-2zM217 236h2v2h-2zM219 265h2v2h-2zM220 252h2v2h-2zM221 261h2v2h-2zM222 242h2v2h-2zM223 246h2v2h-2zM225 244h2v2h-2zM226 235h2v2h-2zM227 238h2v2h-2zM228 240h2v2h-2zM229 253h2v2h-2zM231 275h2v2h-2zM232 233h2v2h-2zM233 240h2v2h-2zM234 266h2v2h-2zM235 229h2v2h-2zM237 238h2v2h-2zM238 253h2v2h-2zM239 250h2v2h-2zM240 271h2v2h-2zM241 224h2v2h-2zM243 243h2v2h-2zM244 260h2v2h-2zM245 256h2v2h-2zM246 265h2v2h-2zM247 231h2v2h-2zM249 269h2v2h-2zM250 226h2v2h-2zM251 235h2v2h-2zM252 243h2v2h-2zM254 232h2v2h-2zM255 242h2v2h-2zM256 251h2v2h-2zM257 243h2v2h-2zM258 246h2v2h-2zM260 233h2v2h-2zM261 280h2v2h-2zM262 227h2v2h-2zM263 256h2v2h-2zM264 247h2v2h-2zM266 254h2v2h-2zM267 258h2v2h-2zM268 266h2v2h-2zM269 251h2v2h-2zM270 246h2v2h-2zM272 210h2v2h-2zM273 204h2v2h-2zM274 216h2v2h-2zM275 244h2v2h-2zM276 281h2v2h-2zM278 239h2v2h-2zM279 239h2v2h-2zM280 217h2v2h-2zM281 233h2v2h-2zM282 215h2v2h-2zM284 215h2v2h-2zM285 288h2v2h-2zM286 246h2v2h-2zM287 234h2v2h-2zM289 229h2v2h-2zM290 234h2v2h-2zM291 223h2v2h-2zM292 256h2v2h-2zM293 205h2v2h-2zM295 224h2v2h-2zM296 237h2v2h-2zM297 217h2v2h-2zM298 238h2v2h-2zM299 211h2v2h-2zM301 250h2v2h-2zM302 218h2v2h-2zM303 237h2v2h-2zM304 232h2v2h-2zM305 227h2v2h-2zM307 221h2v2h-2zM308 244h2v2h-2zM309 207h2v2h-2zM310 230h2v2h-2zM311 207h2v2h-2zM313 224h2v2h-2zM314 244h2v2h-2zM315 248h2v2h-2zM316 215h2v2h-2zM318 248h2v2h-2zM319 210h2v2h-2zM320 244h2v2h-2zM321 214h2v2h-2zM322 205h2v2h-2zM324 209h2v2h-2zM325 207h2v2h-2zM326 197h2v2h-2zM327 204h2v2h-2zM328 233h2v2h-2zM330 248h2v2h-2zM331 237h2v2h-2zM332 188h2v2h-2zM333 246h2v2h-2zM334 249h2v2h-2zM336 226h2v2h-2zM337 225h2v2h-2zM338 217h2v2h-2zM339 220h2v2h-2zM340 240h2v2h-2zM342 244h2v2h-2zM343 204h2v2h-2zM344 245h2v2h-2zM345 221h2v2h-2zM346 206h2v2h-2zM348 246h2v2h-2zM349 245h2v2h-2zM350 219h2v2h-2zM351 193h2v2h-2zM353 212h2v2h-2zM354 244h2v2h-2zM355 213h2v2h-2zM356 210h2v2h-2zM357 210h2v2h-2zM359 214h2v2h-2zM360 214h2v2h-2zM361 265h2v2h-2zM362 232h2v2h-2zM363 206h2v2h-2zM365 227h2v2h-2zM366 201h2v2h-2zM367 203h2v2h-2zM368 219h2v2h-2zM369 219h2v2h-2zM371 231h2v2h-2zM372 203h2v2h-2zM373 234h2v2h-2zM374 196h2v2h-2zM375 200h2v2h-2zM377 205h2v2h-2zM378 193h2v2h-2zM379 200h2v2h-2zM380 188h2v2h-2zM381 190h2v2h-2zM383 214h2v2h-2zM384 191h2v2h-2zM385 196h2v2h-2zM386 212h2v2h-2zM388 186h2v2h-2zM389 187h2v2h-2zM390 214h2v2h-2zM391 253h2v2h-2zM392 208h2v2h-2zM394 188h2v2h-2zM395 192h2v2h-2zM396 186h2v2h-2zM397 195h2v2h-2zM398 201h2v2h-2zM400 193h2v2h-2zM401 178h2v2h-2zM402 148h2v2h-2zM403 156h2v2h-2zM404 158h2v2h-2zM406 179h2v2h-2zM407 172h2v2h-2zM408 185h2v2h-2zM409 177h2v2h-2zM410 193h2v2h-2zM412 168h2v2h-2zM413 190h2v2h-2zM414 164h2v2h-2zM415 231h2v2h-2zM416 182h2v2h-2zM418 188h2v2h-2zM419 172h2v2h-2zM420 206h2v2h-2zM421 181h2v2h-2zM423 153h2v2h-2zM424 158h2v2h-2zM425 151h2v2h-2zM426 165h2v2h-2zM427 152h2v2h-2zM429 157h2v2h-2zM430 182h2v2h-2zM431 164h2v2h-2zM432 181h2v2h-2zM433 164h2v2h-2zM435 155h2v2h-2zM436 172h2v2h-2zM437 149h2v2h-2zM438 157h2v2h-2zM439 170h2v2h-2zM441 180h2v2h-2zM442 162h2v2h-2zM443 165h2v2h-2zM444 157h2v2h-2zM445 195h2v2h-2zM447 144h2v2h-2zM448 191h2v2h-2zM449 273h2v2h-2zM450 183h2v2h-2zM451 155h2v2h-2zM453 159h2v2h-2zM454 156h2v2h-2zM455 177h2v2h-2zM456 160h2v2h-2zM458 202h2v2h-2zM459 181h2v2h-2zM460 184h2v2h-2zM461 187h2v2h-2zM462 194h2v2h-2zM464 183h2v2h-2zM465 188h2v2h-2zM466 253h2v2h-2zM467 176h2v2h-2zM468 200h2v2h-2zM470 158h2v2h-2zM471 177h2v2h-2zM472 232h2v2h-2zM473 223h2v2h-2zM474 178h2v2h-2zM476 168h2v2h-2zM477 160h2v2h-2zM478 164h2v2h-2zM479 165h2v2h-2zM480 164h2v2h-2zM482 197h2v2h-2zM483 161h2v2h-2zM484 156h2v2h-2zM485 166h2v2h-2zM487 150h2v2h-2zM488 170h2v2h-2zM489 171h2v2h-2zM490 225h2v2h-2zM491 161h2v2h-2zM493 183h2v2h-2zM494 145h2v2h-2zM495 136h2v2h-2zM496 141h2v2h-2zM497 150h2v2h-2zM499 177h2v2h-2zM500 154h2v2h-2zM501 182h2v2h-2zM502 175h2v2h-2zM503 147h2v2h-2zM505 144h2v2h-2zM506 177h2v2h-2zM507 154h2v2h-2zM508 144h2v2h-2zM509 159h2v2h-2zM511 139h2v2h-2zM512 175h2v2h-2zM513 158h2v2h-2zM514 153h2v2h-2zM515 145h2v2h-2zM517 163h2v2h-2zM518 135h2v2h-2zM519 149h2v2h-2zM520 144h2v2h-2zM522 164h2v2h-2zM523 157h2v2h-2zM524 148h2v2h-2zM525 133h2v2h-2zM526 141h2v2h-2zM528 152h2v2h-2zM529 131h2v2h-2zM530 125h2v2h-2zM531 144h2v2h-2zM532 163h2v2h-2zM534 156h2v2h-2zM535 135h2v2h-2zM536 123h2v2h-2zM537 129h2v2h-2zM538 125h2v2h-2zM540 125h2v2h-2zM541 140h2v2h-2zM542 137h2v2h-2zM543 144h2v2h-2zM544 143h2v2h-2zM546 150h2v2h-2zM547 91h2v2h-2zM548 205h2v2h-2zM549 144h2v2h-2zM550 124h2v2h-2zM552 138h2v2h-2zM553 119h2v2h-2zM554 113h2v2h-2zM555 133h2v2h-2zM557 112h2v2h-2zM558 131h2v2h-2zM559 117h2v2h-2zM560 122h2v2h-2zM561 128h2v2h-2zM563 142h2v2h-2zM564 145h2v2h-2zM565 175h2v2h-2zM566 149h2v2h-2zM567 151h2v2h-2zM569 115h2v2h-2zM570 168h2v2h-2zM571 136h2v2h-2zM572 164h2v2h-2zM573 135h2v2h-2zM575 146h2v2h-2zM576 149h2v2h-2zM577 103h2v2h-2zM578 117h2v2h-2zM579 126h2v2h-2zM581 176h2v2h-2zM582 147h2v2h-2zM583 189h2v2h-2zM584 132h2v2h-2zM585 160h2v2h-2zM587 103h2v2h-2zM588 109h2v2h-2zM589 128h2v2h-2zM590 125h2v2h-2zM592 74h2v2h-2zM593 156h2v2h-2zM594 158h2v2h-2zM595 99h2v2h-2zM596 117h2v2h-2zM598 213h2v2h-2zM599 113h2v2h-2zM600 77h2v2h-2zM601 106h2v2h-2zM602 111h2v2h-2zM604 101h2v2h-2zM605 182h2v2h-2zM606 97h2v2h-2zM607 144h2v2h-2zM608 246h2v2h-2zM610 151h2v2h-2zM611 155h2v2h-2zM612 104h2v2h-2zM613 119h2v2h-2zM614 199h2v2h-2zM616 105h2v2h-2zM617 153h2v2h-2zM618 118h2v2h-2zM619 186h2v2h-2zM620 129h2v2h-2zM622 136h2v2h-2zM623 136h2v2h-2zM624 121h2v2h-2zM625 110h2v2h-2zM627 209h2v2h-2zM628 206h2v2h-2zM629 314h2v2h-2zM630 155h2v2h-2zM631 193h2v2h-2zM633 152h2v2h-2zM634 250h2v2h-2zM635 82h2v2h-2zM636 144h2v2h-2zM637 168h2v2h-2z"/><path d="M30 359h2v2h-2zM31 368h2v2h-2zM32 368h2v2h-2zM33 361h2v2h-2zM34 367h2v2h-2zM36 371h2v2h-2zM37 360h2v2h-2zM38 361h2v2h-2zM39 345h2v2h-2zM40 364h2v2h-2zM42 387h2v2h-2zM43 344h2v2h-2zM44 370h2v2h-2zM45 325h2v2h-2zM47 378h2v2h-2zM48 351h2v2h-2zM49 387h2v2h-2zM50 388h2v2h-2zM51 349h2v2h-2zM53 350h2v2h-2zM54 384h2v2h-2zM55 383h2v2h-2zM56 338h2v2h-2zM57 349h2v2h-2zM59 376h2v2h-2zM60 371h2v2h-2zM61 382h2v2h-2zM62 349h2v2h-2zM63 378h2v2h-2zM65 448h2v2h-2zM66 350h2v2h-2zM67 362h2v2h-2zM68 323h2v2h-2zM69 379h2v2h-2zM71 336h2v2h-2zM72 354h2v2h-2zM73 358h2v2h-2zM74 355h2v2h-2zM75 334h2v2h-2zM77 371h2v2h-2zM78 331h2v2h-2zM79 325h2v2h-2zM80 356h2v2h-2zM82 334h2v2h-2zM83 368h2v2h-2zM84 323h2v2h-2zM85 355h2v2h-2zM86 364h2v2h-2zM88 321h2v2h-2zM89 360h2v2h-2zM90 354h2v2h-2zM91 327h2v2h-2zM92 325h2v2h-2zM94 317h2v2h-2zM95 348h2v2h-2zM96 420h2v2h-2zM97 339h2v2h-2zM98 323h2v2h-2zM100 321h2v2h-2zM101 332h2v2h-2zM102 305h2v2h-2zM103 306h2v2h-2zM104 324h2v2h-2zM106 310h2v2h-2zM107 305h2v2h-2zM108 307h2v2h-2zM109 321h2v2h-2zM110 302h2v2h-2zM112 300h2v2h-2zM113 299h2v2h-2zM114 322h2v2h-2zM115 344h2v2h-2zM117 291h2v2h-2zM118 305h2v2h-2zM119 290h2v2h-2zM120 308h2v2h-2zM121 296h2v2h-2zM123 301h2v2h-2zM124 307h2v2h-2zM125 313h2v2h-2zM126 296h2v2h-2zM127 300h2v2h-2zM129 287h2v2h-2zM130 309h2v2h-2zM131 280h2v2h-2zM132 287h2v2h-2zM133 298h2v2h-2zM135 285h2v2h-2zM136 294h2v2h-2zM137 299h2v2h-2zM138 277h2v2h-2zM139 304h2v2h-2zM141 276h2v2h-2zM142 279h2v2h-2zM143 259h2v2h-2zM144 284h2v2h-2zM145 314h2v2h-2zM147 263h2v2h-2zM148 267h2v2h-2zM149 259h2v2h-2zM150 257h2v2h-2zM152 258h2v2h-2zM153 247h2v2h-2zM154 297h2v2h-2zM155 251h2v2h-2zM156 304h2v2h-2zM158 263h2v2h-2zM159 295h2v2h-2zM160 276h2v2h-2zM161 284h2v2h-2zM162 318h2v2h-2zM164 277h2v2h-2zM165 292h2v2h-2zM166 274h2v2h-2zM167 250h2v2h-2zM168 369h2v2h-2zM170 298h2v2h-2zM171 265h2v2h-2zM172 256h2v2h-2zM173 271h2v2h-2zM174 259h2v2h-2zM176 266h2v2h-2zM177 276h2v2h-2zM178 244h2v2h-2zM179 287h2v2h-2zM180 278h2v2h-2zM182 285h2v2h-2zM183 275h2v2h-2zM184 267h2v2h-2zM185 284h2v2h-2zM187 256h2v2h-2zM188 257h2v2h-2zM189 288h2v2h-2zM190 265h2v2h-2zM191 262h2v2h-2zM193 297h2v2h-2zM194 272h2v2h-2zM195 261h2v2h-2zM196 273h2v2h-2zM197 281h2v2h-2zM199 275h2v2h-2zM200 281h2v2h-2zM201 297h2v2h-2zM202 290h2v2h-2zM203 240h2v2h-2zM205 257h2v2h-2zM206 261h2v2h-2zM207 245h2v2h-2zM208 256h2v2h-2zM209 246h2v2h-2zM211 272h2v2h-2zM212 239h2v2h-2zM213 236h2v2h-2zM214 250h2v2h-2zM216 248h2v2h-2zM217 250h2v2h-2zM218 258h2v2h-2zM219 259h2v2h-2zM220 323h2v2h-2zM222 249h2v2h-2zM223 248h2v2h-2zM224 263h2v2h-2zM225 256h2v2h-2zM226 267h2v2h-2zM228 264h2v2h-2zM229 259h2v2h-2zM230 261h2v2h-2zM231 250h2v2h-2zM232 265h2v2h-2zM234 324h2v2h-2zM235 228h2v2h-2zM236 268h2v2h-2zM237 280h2v2h-2zM238 253h2v2h-2zM240 227h2v2h-2zM241 246h2v2h-2zM242 282h2v2h-2zM243 238h2v2h-2zM244 316h2v2h-2zM246 228h2v2h-2zM247 236h2v2h-2zM248 261h2v2h-2zM249 233h2v2h-2zM251 275h2v2h-2zM252 304h2v2h-2zM253 240h2v2h-2zM254 249h2v2h-2zM255 238h2v2h-2zM257 261h2v2h-2zM258 262h2v2h-2zM259 264h2v2h-2zM260 239h2v2h-2zM261 252h2v2h-2zM263 267h2v2h-2zM264 235h2v2h-2zM265 219h2v2h-2zM266 239h2v2h-2zM267 256h2v2h-2zM269 213h2v2h-2zM270 236h2v2h-2zM271 220h2v2h-2zM272 210h2v2h-2zM273 210h2v2h-2zM275 218h2v2h-2zM276 216h2v2h-2zM277 227h2v2h-2zM278 232h2v2h-2zM279 245h2v2h-2zM281 211h2v2h-2zM282 228h2v2h-2zM283 249h2v2h-2zM284 239h2v2h-2zM286 253h2v2h-2zM287 229h2v2h-2zM288 262h2v2h-2zM289 211h2v2h-2zM290 232h2v2h-2zM292 243h2v2h-2zM293 215h2v2h-2zM294 247h2v2h-2zM295 265h2v2h-2zM296 229h2v2h-2zM298 212h2v2h-2zM299 213h2v2h-2zM300 282h2v2h-2zM301 238h2v2h-2zM302 215h2v2h-2zM304 238h2v2h-2zM305 209h2v2h-2zM306 227h2v2h-2zM307 253h2v2h-2zM308 208h2v2h-2zM310 243h2v2h-2zM311 234h2v2h-2zM312 225h2v2h-2zM313 236h2v2h-2zM314 211h2v2h-2zM316 227h2v2h-2zM317 236h2v2h-2zM318 224h2v2h-2zM319 215h2v2h-2zM321 206h2v2h-2zM322 209h2v2h-2zM323 222h2v2h-2zM324 205h2v2h-2zM325 230h2v2h-2zM327 192h2v2h-2zM328 205h2v2h-2zM329 245h2v2h-2zM330 201h2v2h-2zM331 207h2v2h-2zM333 210h2v2h-2zM334 238h2v2h-2zM335 248h2v2h-2zM336 203h2v2h-2zM337 220h2v2h-2zM339 223h2v2h-2zM340 211h2v2h-2zM341 270h2v2h-2zM342 209h2v2h-2zM343 248h2v2h-2zM345 200h2v2h-2zM346 213h2v2h-2zM347 270h2v2h-2zM348 206h2v2h-2zM349 259h2v2h-2zM351 209h2v2h-2zM352 226h2v2h-2zM353 229h2v2h-2zM354 239h2v2h-2zM356 247h2v2h-2zM357 216h2v2h-2zM358 209h2v2h-2zM359 230h2v2h-2zM360 215h2v2h-2zM362 204h2v2h-2zM363 211h2v2h-2zM364 219h2v2h-2zM365 218h2v2h-2zM366 212h2v2h-2zM368 195h2v2h-2zM369 207h2v2h-2zM370 219h2v2h-2zM371 196h2v2h-2zM372 216h2v2h-2zM374 195h2v2h-2zM375 220h2v2h-2zM376 214h2v2h-2zM377 214h2v2h-2zM378 196h2v2h-2zM380 191h2v2h-2zM381 258h2v2h-2zM382 187h2v2h-2zM383 221h2v2h-2zM385 209h2v2h-2zM386 209h2v2h-2zM387 220h2v2h-2zM388 227h2v2h-2zM389 209h2v2h-2zM391 187h2v2h-2zM392 201h2v2h-2zM393 239h2v2h-2zM394 173h2v2h-2zM395 172h2v2h-2zM397 162h2v2h-2zM398 202h2v2h-2zM399 167h2v2h-2zM400 188h2v2h-2zM401 163h2v2h-2zM403 190h2v2h-2zM404 167h2v2h-2zM405 166h2v2h-2zM406 185h2v2h-2zM407 160h2v2h-2zM409 167h2v2h-2zM410 196h2v2h-2zM411 165h2v2h-2zM412 173h2v2h-2zM413 191h2v2h-2zM415 193h2v2h-2zM416 192h2v2h-2zM417 160h2v2h-2zM418 155h2v2h-2zM420 190h2v2h-2zM421 155h2v2h-2zM422 175h2v2h-2zM423 171h2v2h-2zM424 241h2v2h-2zM426 190h2v2h-2zM427 175h2v2h-2zM428 174h2v2h-2zM429 166h2v2h-2zM430 179h2v2h-2zM432 164h2v2h-2zM433 149h2v2h-2zM434 149h2v2h-2zM435 160h2v2h-2zM436 167h2v2h-2zM438 181h2v2h-2zM439 189h2v2h-2zM440 172h2v2h-2zM441 161h2v2h-2zM442 189h2v2h-2zM444 155h2v2h-2zM445 174h2v2h-2zM446 164h2v2h-2zM447 181h2v2h-2zM448 170h2v2h-2zM450 181h2v2h-2zM451 213h2v2h-2zM452 155h2v2h-2zM453 196h2v2h-2zM455 139h2v2h-2zM456 191h2v2h-2zM457 170h2v2h-2zM458 164h2v2h-2zM459 171h2v2h-2zM461 183h2v2h-2zM462 182h2v2h-2zM463 182h2v2h-2zM464 185h2v2h-2zM465 165h2v2h-2zM467 162h2v2h-2zM468 169h2v2h-2zM469 162h2v2h-2zM470 178h2v2h-2zM471 169h2v2h-2zM473 171h2v2h-2zM474 157h2v2h-2zM475 164h2v2h-2zM476 167h2v2h-2zM477 159h2v2h-2zM479 178h2v2h-2zM480 167h2v2h-2zM481 197h2v2h-2zM482 207h2v2h-2zM483 158h2v2h-2zM485 153h2v2h-2zM486 175h2v2h-2zM487 153h2v2h-2zM488 146h2v2h-2zM490 152h2v2h-2zM491 184h2v2h-2zM492 169h2v2h-2zM493 179h2v2h-2zM494 141h2v2h-2zM496 141h2v2h-2zM497 188h2v2h-2zM498 158h2v2h-2zM499 165h2v2h-2zM500 178h2v2h-2zM502 174h2v2h-2zM503 144h2v2h-2zM504 142h2v2h-2zM505 143h2v2h-2zM506 139h2v2h-2zM508 178h2v2h-2zM509 183h2v2h-2zM510 171h2v2h-2zM511 157h2v2h-2zM512 140h2v2h-2zM514 170h2v2h-2zM515 146h2v2h-2zM516 141h2v2h-2zM517 141h2v2h-2zM518 132h2v2h-2zM520 128h2v2h-2zM521 150h2v2h-2zM522 143h2v2h-2zM523 147h2v2h-2zM525 144h2v2h-2zM526 141h2v2h-2zM527 145h2v2h-2zM528 138h2v2h-2zM529 138h2v2h-2zM531 153h2v2h-2zM532 128h2v2h-2zM533 199h2v2h-2zM534 130h2v2h-2zM535 132h2v2h-2zM537 123h2v2h-2zM538 161h2v2h-2zM539 140h2v2h-2zM540 144h2v2h-2zM541 152h2v2h-2zM543 139h2v2h-2zM544 130h2v2h-2zM545 121h2v2h-2zM546 126h2v2h-2zM547 148h2v2h-2zM549 124h2v2h-2zM550 147h2v2h-2zM551 150h2v2h-2zM552 122h2v2h-2zM554 121h2v2h-2zM555 117h2v2h-2zM556 134h2v2h-2zM557 137h2v2h-2zM558 180h2v2h-2zM560 141h2v2h-2zM561 183h2v2h-2zM562 99h2v2h-2zM563 122h2v2h-2zM564 136h2v2h-2zM566 150h2v2h-2zM567 140h2v2h-2zM568 126h2v2h-2zM569 129h2v2h-2zM570 134h2v2h-2zM572 132h2v2h-2zM573 144h2v2h-2zM574 107h2v2h-2zM575 118h2v2h-2zM576 132h2v2h-2zM578 107h2v2h-2zM579 145h2v2h-2zM580 162h2v2h-2zM581 65h2v2h-2zM582 141h2v2h-2zM584 188h2v2h-2zM585 201h2v2h-2zM586 110h2v2h-2zM587 178h2v2h-2zM589 109h2v2h-2zM590 116h2v2h-2zM591 119h2v2h-2zM592 143h2v2h-2zM593 113h2v2h-2zM595 180h2v2h-2zM596 132h2v2h-2zM597 95h2v2h-2zM598 94h2v2h-2zM599 153h2v2h-2zM601 152h2v2h-2zM602 140h2v2h-2zM603 107h2v2h-2zM604 131h2v2h-2zM605 114h2v2h-2zM607 123h2v2h-2zM608 162h2v2h-2zM609 108h2v2h-2zM610 92h2v2h-2zM611 99h2v2h-2zM613 166h2v2h-2zM614 146h2v2h-2zM615 243h2v2h-2zM616 137h2v2h-2zM617 183h2v2h-2zM619 115h2v2h-2zM620 147h2v2h-2zM621 178h2v2h-2zM622 167h2v2h-2zM624 134h2v2h-2zM625 120h2v2h-2zM626 357h2v2h-2zM627 175h2v2h-2zM628 160h2v2h-2zM630 126h2v2h-2zM631 149h2v2h-2zM632 195h2v2h-2zM633 167h2v2h-2zM634 163h2v2h-2zM636 133h2v2h-2zM637 146h2v2h-2zM638 125h2v2h-2z"/></g><path d="M435 153L432 147M435 153L438 147M432 147H438" fill="none" stroke="#ff0000" stroke-width="1" stroke-linecap="square" shape-rendering="crispEdges" transform="translate(.5 .5)"/><path d="M566 179L563 173M566 179L569 173M563 173H569" fill="none" stroke="#0000ff" stroke-width="1" stroke-linecap="square" shape-rendering="crispEdges" transform="translate(.5 .5)"/><path d="M630 318L627 312M630 318L633 312M627 312H633" fill="none" stroke="#ffff00" stroke-width="1" stroke-linecap="square" shape-rendering="crispEdges" transform="translate(.5 .5)"/></svg>
<svg style="left:626px;top:52px;background:#000" width="400" height="514" viewBox="0 0 400 514"><text x="2.5" y="15.3" textLength="77.6" lengthAdjust="spacingAndGlyphs">S11 Smith Chart</text><g fill="none" stroke="#c0c0c0" stroke-width="1" shape-rendering="crispEdges" transform="translate(.5 .5)"><circle cx="200" cy="257" r="180"/><path d="M20 257H380"/><circle cx="290.0" cy="257" r="90.0"/><circle cx="320.0" cy="257" r="60.0"/><circle cx="335.0" cy="257" r="45.0"/><circle cx="350.0" cy="257" r="30.0"/><circle cx="260.0" cy="257" r="120.0"/><circle cx="230.0" cy="257" r="150.0"/><path d="M380 257A36.0 36.0 0 0 1 366.2 187.8M380 257A36.0 36.0 0 0 0 366.2 326.2M380 257A90.0 90.0 0 0 1 308.0 113.0M380 257A90.0 90.0 0 0 0 308.0 401.0M380 257A180.0 180.0 0 0 1 200.0 77.0M380 257A180.0 180.0 0 0 0 200.0 437.0M380 257A360.0 360.0 0 0 1 92.0 113.0M380 257A360.0 360.0 0 0 0 92.0 401.0M380 257A900.0 900.0 0 0 1 33.8 187.8M380 257A900.0 900.0 0 0 0 33.8 326.2"/></g><g fill="none" stroke="rgba(85,255,0,0.55)" stroke-width="1" stroke-linecap="square" shape-rendering="crispEdges" transform="translate(.5 .5)"><path d="M201 258l0 0M201 258l1 1M199 258l0 0M199 258l0 0M199 260l-1 -1M198 259l1 1M202 259l0 1M202 260l-1 -2M201 261l0 -1M201 260l1 0M198 258l0 0M198 258l0 1M202 259l0 0M202 259l-1 1M198 259l0 0M198 259l0 0M199 261l0 0M199 261l-1 -1M200 261l2 -2M202 259l0 0M202 260l0 0M202 260l0 -2M198 259l0 1M198 260l0 -1M201 257l1 1M202 258l0 1M198 259l5 1M203 260l-4 -3M206 256l-5 4M201 260l-3 -1M200 256l0 4M200 260l-3 -2M201 260l1 3M202 263l2 2M196 256l6 -1M202 255l-2 9M204 258l-5 0M199 258l-1 -1M198 265l4 -5M202 260l0 1M196 255l4 7M200 262l-2 2M197 258l4 0M201 258l-2 7M200 266l0 -2M200 264l2 -8M198 258l1 1M199 259l-5 0M194 256l4 3M198 259l4 0M202 255l-2 3M200 258l2 -1M199 251l-2 11M197 262l8 -7M196 268l7 -16M203 252l-4 16M191 256l9 7M200 263l-1 -5M201 258l2 2M203 260l-1 0M197 261l-7 -15M190 246l7 8M199 260l1 3M200 263l-4 -6M200 250l3 9M203 259l-9 1M201 263l5 -11M206 252l-4 13M203 255l-9 5M194 260l12 7M196 256l7 0M203 256l-1 3M209 256l-7 0M202 256l3 14M200 269l-6 -7M194 262l0 -1M194 266l-1 -15M193 251l0 1M205 253l-4 2M201 255l4 2M202 257l8 1M210 258l-6 -1M152 227l27 22M179 249l20 23M193 244l-22 -20M171 224l23 56M199 270l-12 -11M187 259l23 -39M204 259l-34 13M170 272l28 -5M199 292l53 -81M252 211l-45 60M194 283l2 -61M196 222l1 38M182 272l-4 -34M178 238l-24 32M242 247l-40 13M202 260l-53 -22M201 255l43 14M244 269l-74 -34M207 252l-20 -3M187 249l6 50M197 257l-11 58M186 315l-26 -70M170 315l-6 -35M164 280l33 2M206 260l-5 -6M201 254l74 95M166 261l30 2M196 263l-1 -7M-1 273l148 114M147 387l23 -122M41 338l-198 -401M-157 -63l347 310M194 178l3 67M197 245l-31 6M226 260l-37 3M189 263l-53 -76M48 61l133 252M181 313l63 19M193 265l-276 87M-83 352l227 -61M209 -97l-90 220M119 123l5 177M172 240l33 -36M205 204l-190 -180M85 192l-485 -635"/><path d="M202 259l0 0M202 259l0 0M199 258l1 -1M200 257l-1 1M199 260l0 0M199 260l0 0M201 258l1 0M202 258l-2 -1M202 260l-1 0M201 260l1 -1M198 259l0 0M198 259l1 2M201 260l1 0M202 260l-1 1M198 259l0 0M198 259l1 -1M198 260l1 0M199 260l-1 0M202 259l0 -1M202 258l0 2M202 258l-1 -1M201 257l-1 0M198 259l0 1M198 260l1 -2M202 259l0 0M202 259l0 0M199 257l3 4M202 261l-2 0M198 259l1 -2M199 257l-1 5M197 258l8 5M205 263l-9 -8M204 265l-9 -4M195 261l10 -3M200 264l-3 -5M197 259l-1 5M198 257l2 4M200 261l4 -2M202 261l-7 -4M195 257l6 1M198 264l3 -2M201 262l-1 6M199 265l-5 -4M194 261l4 -4M202 256l0 -1M202 255l-4 5M194 259l1 -2M195 257l13 4M202 259l-1 -2M201 257l-7 2M202 257l-3 2M199 259l6 -1M205 255l1 5M206 260l-5 -1M199 268l-9 -6M190 262l7 -7M199 258l-8 -6M191 252l14 3M202 260l-5 -2M197 258l6 7M197 254l6 3M203 257l3 -8M196 257l4 10M200 267l-1 -10M194 260l7 -2M201 258l2 -8M202 265l1 0M203 265l-4 -9M206 267l1 -5M207 262l0 -4M202 259l-2 -4M200 255l6 1M205 270l9 -16M214 254l-20 6M194 261l-5 0M189 261l13 -10M193 252l8 12M201 264l-7 -17M205 257l-13 -7M192 250l7 -12M204 257l-16 -3M188 254l1 10M199 272l11 6M210 278l-9 -10M194 280l-12 -23M182 257l-3 26M210 220l-22 40M188 260l12 18M198 267l-1 6M197 273l-27 -9M207 271l-19 -24M188 247l14 15M197 260l-11 31M186 291l5 -25M154 270l37 -16M191 254l27 15M149 238l64 29M213 267l-80 9M170 235l75 5M245 240l-35 7M193 299l-22 -47M171 252l12 -2M160 245l-21 27M139 272l84 -44M197 282l10 -60M207 222l19 20M275 349l-96 -57M179 292l32 -93M195 256l-18 -15M177 241l93 -49M170 265l10 -19M180 246l19 13M190 247l-13 -57M177 190l51 -15M166 251l49 46M215 297l-107 -75M136 187l70 75M206 262l-58 -12M244 332l-99 -14M145 318l-136 -139M144 291l78 -44M222 247l-34 39M124 300l34 -6M158 294l13 -77M15 24l173 3M188 27l-196 228"/><path d="M202 259l0 0M202 259l0 -1M199 258l0 0M199 258l0 0M199 260l1 1M200 261l0 0M200 257l0 0M200 257l-1 0M202 259l-1 1M201 260l1 0M199 261l1 0M200 261l1 0M201 261l-1 0M200 261l-2 -1M199 258l1 -1M200 257l-2 1M198 260l1 1M199 261l0 0M202 260l0 -1M202 259l0 -1M200 257l-1 1M199 258l-1 0M199 258l-1 1M198 259l0 0M202 259l0 -1M202 258l-1 -1M200 261l1 -5M201 256l0 4M198 262l1 -4M199 258l0 0M196 255l5 6M201 261l-2 -2M205 258l-10 1M195 259l9 -3M196 264l5 -6M201 258l-1 8M204 259l-7 2M197 261l6 3M201 258l0 3M201 261l-4 -5M200 268l-2 -5M198 263l5 -7M198 257l-3 -3M195 254l9 4M198 260l2 -8M200 252l7 6M208 261l-3 -7M205 254l-6 6M194 259l2 1M196 260l2 2M205 258l-11 -3M194 255l10 3M201 259l1 -1M202 258l-1 1M197 255l4 -4M201 251l-5 8M205 255l-4 3M201 258l-3 4M203 265l-8 0M195 265l8 -3M206 249l-8 20M198 269l9 -9M199 257l-1 -3M198 254l5 4M203 250l-17 6M186 256l17 17M199 256l9 2M208 258l1 8M207 258l-13 3M194 261l4 -11M206 256l-6 14M200 270l-7 -3M194 260l11 -5M205 255l0 4M202 251l9 13M211 264l-4 -19M194 247l0 26M194 273l-2 -23M199 238l-3 37M196 275l-37 10M189 264l5 -3M194 261l-9 5M201 268l-6 -21M195 247l-8 6M179 283l21 -16M200 267l16 12M200 278l57 -81M257 197l-58 64M170 264l39 -8M209 256l-46 0M202 262l-16 -8M186 254l25 21M191 266l-4 -9M187 257l16 7M218 269l-20 -16M198 253l19 7M133 276l69 -54M202 222l-1 65M210 247l-2 19M208 266l-20 -21M183 250l19 18M202 268l-25 -33M223 228l-79 15M144 243l42 20M226 242l-74 2M152 244l59 -6M211 199l-36 -396M175 -197l73 438M270 192l-114 65M156 257l29 -27M199 259l2 -3M201 256l-144 239M228 175l-54 61M174 236l-101 69M108 222l51 47M159 269l129 -230M148 250l67 39M215 289l112 24M9 179l-156 348M-147 527l297 -356M188 286l-91 109M97 395l-159 85M171 217l-7 8M164 225l14 13M-8 255l210 39M202 294l-134 -121"/><path d="M202 258l0 1M202 259l0 0M199 258l0 0M199 258l-1 1M200 261l2 -2M202 259l-1 1M199 257l-1 2M198 259l1 2M202 260l0 -1M202 259l0 0M201 261l0 0M201 261l-1 0M198 260l0 -2M198 258l1 -1M198 258l0 1M198 259l1 -2M199 261l1 0M200 261l-1 0M202 258l-1 0M201 258l1 1M198 258l1 0M199 258l0 -1M198 259l0 0M198 259l1 2M201 257l-1 0M200 257l1 0M201 260l0 4M201 264l1 -1M199 258l-3 2M196 260l3 -2M199 259l3 4M202 263l2 -1M204 256l-3 3M201 259l-3 -3M200 266l-3 -7M197 259l3 2M203 264l-6 -4M197 260l2 5M197 256l3 3M200 259l-2 -3M203 256l-6 -1M197 255l1 8M204 258l-4 -5M200 253l-2 3M207 258l0 7M207 265l-11 -9M199 260l-1 -3M198 257l6 0M198 262l-5 -5M193 257l5 0M204 258l-5 0M199 258l4 2M201 259l-6 8M195 267l9 -19M196 259l8 -6M204 253l-10 10M198 262l5 -4M203 258l-7 6M203 262l-7 0M196 262l11 -9M207 260l-1 2M206 262l-17 -9M203 258l-2 9M201 267l13 -6M203 273l0 -15M203 258l3 1M209 266l-17 -9M192 257l17 6M198 250l4 10M202 260l-5 4M193 267l12 -8M205 259l-3 1M205 259l-3 -2M202 257l2 -2M207 245l-5 17M202 262l-2 -7M192 250l-6 7M186 257l-49 30M159 285l58 -46M217 239l-13 15M185 266l13 -19M198 247l-20 22M187 253l-11 -1M176 252l40 3M216 279l0 -4M216 275l-20 -19M199 261l10 -56M209 205l-13 49M163 256l63 7M226 263l-27 -9M211 275l-16 -19M195 256l1 -7M203 264l-3 -4M200 260l-10 -33M217 260l-68 15M149 275l48 -13M201 287l-9 -33M192 254l-7 60M188 245l-4 -4M184 241l6 5M177 235l42 67M219 302l-129 -88M186 263l16 2M202 265l4 -24M211 238l-22 21M189 259l18 -26M248 241l-47 8M201 249l-28 -42M185 230l-39 54M146 284l1 -74M57 495l163 -242M220 253l-45 15M73 305l50 -88M123 217l51 31M288 39l-86 235M202 274l-207 108M327 313l-165 -70M162 243l76 -37M150 171l7 148M157 319l45 6M-62 480l271 -319M209 161l17 132M178 238l-93 7M85 245l119 -13M68 173l-14 52M54 225l154 26"/><path d="M202 259l-3 -1M199 258l2 0M198 259l0 1M198 260l0 -2M201 260l1 -1M202 259l0 1M199 261l0 -1M199 260l-1 -1M202 259l-1 1M201 260l1 -1M200 261l1 0M201 261l0 0M199 257l0 1M199 258l0 0M199 257l0 1M199 258l0 -1M199 261l0 0M199 261l-1 -1M202 259l-1 -2M201 257l1 2M199 257l-1 2M198 259l0 -1M199 261l0 0M199 261l1 0M201 257l-3 0M198 257l7 1M202 263l1 -4M203 259l-2 1M199 258l2 -1M201 257l-5 5M204 262l-6 1M198 263l1 -3M198 256l3 5M201 261l0 -4M200 261l0 -4M200 257l-2 3M199 265l-3 -9M196 256l8 4M198 256l0 3M198 259l-5 4M198 263l4 -9M202 254l-4 7M198 256l-2 0M196 256l4 6M196 256l-1 6M195 262l11 -2M204 257l-1 4M203 261l1 2M198 257l7 6M205 263l-8 -7M203 260l1 -4M204 256l-1 -2M204 248l-12 10M192 258l17 6M194 263l2 -7M196 256l8 -3M196 264l7 -5M203 259l0 1M207 253l-14 11M193 264l9 -11M189 253l21 13M210 266l-19 -8M214 261l-10 2M204 263l-2 -8M206 259l-7 -1M199 258l-1 2M209 263l-14 -1M195 262l2 -3M197 264l-9 -4M188 260l20 1M202 260l-3 -8M199 252l0 0M204 255l-2 5M202 260l3 -14M200 255l16 -2M216 253l-26 -1M137 287l57 -26M194 261l9 -2M204 254l-1 -10M203 244l-8 6M178 269l-18 34M160 303l47 -50M216 255l-35 14M181 269l2 7M196 256l2 2M198 258l-16 8M196 254l10 88M206 342l-16 -75M199 254l-22 34M177 288l26 -3M196 249l-9 -37M187 212l2 48M190 227l-38 40M152 267l45 -20M197 262l-8 -13M189 249l18 8M185 314l-1 -72M184 242l-3 7M190 246l59 4M249 250l-46 13M90 214l133 21M223 235l-21 14M206 241l-25 6M181 247l-2 28M207 233l-38 34M169 267l4 -8M173 207l40 62M213 269l-26 -9M147 210l62 50M209 260l-12 8M175 268l65 -121M240 147l25 98M174 248l-4 63M170 311l117 -176M-5 382l201 -125M196 257l31 -89M238 206l-11 121M227 327l-90 -68M202 325l-47 -59M155 266l77 37M226 293l-78 19M148 312l-100 -5M204 232l23 63M227 295l-24 -92M208 251l26 9M234 260l-306 -81"/><path d="M201 258l-1 -1M200 257l1 1M198 258l0 1M198 259l0 1M202 260l0 -1M202 259l0 0M198 259l0 0M198 259l0 0M202 259l0 0M202 259l-1 -2M201 261l0 -1M201 260l1 0M199 258l1 -1M200 257l0 0M199 257l-1 1M198 258l0 0M198 260l1 1M199 261l2 0M202 259l0 -1M202 258l-1 -1M198 258l1 -1M199 257l1 0M200 261l0 0M200 261l2 -2M205 258l-7 6M198 264l6 -2M201 260l-1 -3M200 257l-3 2M196 262l1 -6M197 256l1 5M199 260l1 -1M200 259l3 -4M201 257l-5 5M196 262l2 -5M198 260l3 -6M201 254l1 6M204 260l-4 -3M200 257l-1 7M193 263l4 -7M197 256l5 1M198 261l6 1M204 262l2 -9M200 262l1 -2M201 260l-1 -3M206 260l-8 -8M198 252l-3 6M204 263l1 -10M205 253l-12 11M197 256l-2 4M195 260l5 -1M203 254l-4 3M199 257l8 0M209 264l-5 -6M204 258l-12 8M204 253l1 5M205 258l-5 8M203 260l-8 1M195 261l6 4M202 253l-10 4M192 257l12 0M191 258l-5 -9M186 249l18 12M202 255l-8 3M194 258l1 2M198 260l0 -5M198 255l4 9M197 259l6 -8M203 251l4 8M208 261l-4 -14M204 247l-2 7M199 252l5 6M204 258l-1 2M205 246l12 13M217 259l-17 -6M190 252l11 6M201 258l6 9M203 259l0 7M203 266l-10 -12M195 250l24 8M219 258l-13 13M207 253l-25 9M182 262l26 -16M183 276l5 -8M188 268l20 -29M182 266l-3 -1M179 265l4 -2M190 267l9 -16M199 251l-9 7M203 285l-5 -27M198 258l19 27M189 260l1 -5M190 255l23 20M197 247l-64 17M133 264l61 16M207 257l-41 23M166 280l21 -23M181 249l18 -102M199 147l8 108M203 263l-22 -31M181 232l22 31M202 249l-7 17M195 266l-2 -13M179 275l15 17M194 292l44 -24M173 259l-21 -13M152 246l39 63M187 260l6 -33M193 227l-31 33M197 268l-8 21M189 289l-66 9M265 245l-73 29M192 274l-7 -41M287 135l-1085 -103M-798 32l931 214M227 168l-520 277M-293 445l415 -335M137 259l-39 17M98 276l33 36M232 303l-38 -38M194 265l-145 6M48 307l104 -11M152 296l21 -37M203 203l-255 -2M-52 201l259 28M-72 179l-89 206M-161 385l333 -148"/><path d="M201 258l0 0M201 258l-1 -1M198 260l0 -1M198 259l1 1M202 259l0 -1M202 258l0 1M198 259l1 2M199 261l0 -1M201 257l-1 0M200 257l1 1M202 260l-1 0M201 260l1 -2M200 257l-2 2M198 259l1 -1M198 258l0 0M198 258l0 2M201 261l0 0M201 261l0 0M201 257l-1 0M200 257l1 0M200 257l-1 0M199 257l0 0M202 259l0 1M202 260l0 0M204 262l-4 -3M200 259l0 1M197 259l-1 -1M196 258l5 1M198 261l0 -4M198 257l1 5M203 255l-2 4M201 259l4 -3M198 257l0 0M198 257l1 1M202 260l-3 2M199 262l4 0M199 264l7 -3M206 261l-6 -4M202 257l-3 3M199 260l7 4M206 253l-4 4M202 257l-3 7M200 257l5 -2M205 255l-5 6M195 258l5 1M200 259l1 6M193 264l6 1M199 265l-3 -12M200 259l2 -7M202 252l1 3M207 257l-8 -6M199 251l-9 6M192 266l11 -9M203 257l-2 4M200 266l3 -9M203 257l1 8M201 265l0 0M201 265l0 -9M204 257l-6 2M198 259l-6 3M204 261l-1 -1M203 260l4 -6M195 260l8 2M203 262l-14 -6M202 264l-2 -7M200 257l-7 -1M207 259l-11 -3M196 256l-6 0M202 254l0 9M202 263l-4 -18M203 260l0 1M203 261l6 -2M200 253l7 8M207 261l-8 3M207 267l2 -8M209 259l-12 -5M193 254l16 18M209 272l-34 -4M206 271l-32 -21M174 250l15 -11M208 246l-11 18M197 264l5 0M208 239l-17 23M191 262l-18 -10M183 263l-1 1M182 264l6 2M190 258l2 9M192 267l5 -19M217 285l6 -25M223 260l-5 -13M213 275l1 -6M214 269l-26 -42M194 280l-5 -26M189 254l3 20M187 257l1 -7M188 250l12 24M207 255l-47 16M160 271l36 -28M203 263l-6 30M197 293l-27 -43M193 253l31 -11M224 242l-4 5M238 268l-66 -25M172 243l28 4M191 309l-83 8M108 317l89 -53M162 260l47 16M209 276l-51 -31M123 298l-177 160M-54 458l239 -187M185 233l8 31M193 264l-23 42M133 246l58 8M191 254l-48 25M122 110l71 143M193 253l-212 -20M131 312l41 -41M172 271l75 -29M49 271l158 -73M207 198l-224 16M173 259l-10 84M163 343l-6 -131M207 229l-88 50M119 279l66 -9M172 237l-335 -125M-163 112l228 223"/><path d="M200 257l-1 1M199 258l0 0M199 260l-1 -1M198 259l1 1M202 259l-1 1M201 260l1 -1M199 260l0 0M199 260l2 1M201 258l-2 -1M199 257l-1 1M202 258l0 1M202 259l0 0M199 258l0 -1M199 257l-1 2M198 260l1 0M199 260l0 1M201 261l-1 0M200 261l0 0M201 257l1 2M202 259l0 1M199 257l-1 2M198 259l0 0M202 260l0 -2M202 258l-1 -1M200 260l-1 -4M199 256l-1 3M201 259l0 -1M201 258l5 -2M199 262l0 0M199 262l1 -6M205 256l-5 2M200 258l1 2M199 258l-7 1M192 259l4 -3M203 262l-3 -5M200 257l4 1M200 257l0 0M200 257l-2 8M206 264l1 -10M207 254l-11 1M199 264l-4 -3M195 261l2 -3M200 261l1 -6M201 255l-1 11M201 265l-6 -6M195 259l3 -1M196 253l11 9M207 262l-13 -6M203 255l-2 1M201 256l1 -1M190 257l9 -1M199 256l0 -5M201 261l-4 -5M197 256l-1 12M204 265l3 1M207 266l-16 -10M201 256l7 -1M208 255l-7 3M192 262l2 -6M194 256l3 5M207 254l-9 -1M198 253l1 7M189 256l13 7M202 263l-2 -13M193 256l2 14M195 270l6 -7M190 256l-3 -1M187 255l16 0M198 245l7 16M205 261l-9 -5M209 259l-11 3M198 262l11 -6M199 264l6 -6M205 258l-5 11M197 254l-8 2M189 256l5 10M175 268l6 -9M181 259l24 -6M189 239l0 29M189 268l13 -11M202 264l1 3M203 267l-51 -40M173 252l45 9M218 261l-25 -17M188 266l-11 -19M177 247l22 23M197 248l-13 11M184 259l20 0M218 247l-26 21M192 268l7 24M188 227l22 -16M210 211l-16 72M192 274l19 -18M211 256l-29 16M200 274l-21 43M179 317l63 -70M196 243l2 30M198 273l3 -18M170 250l38 31M208 281l-1 -29M220 247l-28 18M192 265l5 -8M200 247l-29 27M171 274l-1 41M197 264l21 -19M218 245l-12 15M158 245l-12 -19M146 226l20 35M185 271l-4 -57M181 214l-182 59M170 306l42 -57M212 249l-171 89M143 279l13 -250M156 29l38 149M-19 233l200 32M181 265l45 -5M247 242l33 58M280 300l-232 -239M-17 214l225 22M208 236l-15 29M157 212l43 114M200 326l9 -423M185 270l47 156M232 426l-60 -186M65 335l134 -98M199 237l-114 -45"/></g><g fill="rgba(85,255,0,0.55)" shape-rendering="crispEdges"><path d="M200 257h2v2h-2zM201 258h2v2h-2zM201 258h2v2h-2zM201 257h2v2h-2zM201 258h2v2h-2zM200 257h2v2h-2zM200 257h2v2h-2zM199 256h2v2h-2zM198 257h2v2h-2zM198 257h2v2h-2zM198 257h2v2h-2zM198 257h2v2h-2zM197 258h2v2h-2zM197 257h2v2h-2zM197 259h2v2h-2zM198 259h2v2h-2zM198 259h2v2h-2zM198 259h2v2h-2zM198 259h2v2h-2zM199 260h2v2h-2zM200 259h2v2h-2zM201 259h2v2h-2zM201 258h2v2h-2zM201 258h2v2h-2zM201 258h2v2h-2zM200 257h2v2h-2zM199 256h2v2h-2zM198 256h2v2h-2zM198 260h2v2h-2zM197 258h2v2h-2zM197 258h2v2h-2zM198 259h2v2h-2zM200 260h2v2h-2zM201 259h2v2h-2zM201 258h2v2h-2zM201 259h2v2h-2zM201 258h2v2h-2zM201 258h2v2h-2zM200 256h2v2h-2zM200 257h2v2h-2zM197 257h2v2h-2zM197 258h2v2h-2zM198 260h2v2h-2zM200 260h2v2h-2zM199 260h2v2h-2zM200 260h2v2h-2zM201 259h2v2h-2zM201 257h2v2h-2zM201 258h2v2h-2zM200 259h2v2h-2zM200 260h2v2h-2zM197 259h2v2h-2zM198 256h2v2h-2zM198 257h2v2h-2zM199 256h2v2h-2zM198 257h2v2h-2zM197 258h2v2h-2zM197 258h2v2h-2zM198 257h2v2h-2zM197 257h2v2h-2zM198 256h2v2h-2zM198 256h2v2h-2zM197 257h2v2h-2zM197 259h2v2h-2zM198 260h2v2h-2zM197 259h2v2h-2zM197 259h2v2h-2zM198 260h2v2h-2zM198 260h2v2h-2zM197 259h2v2h-2zM200 260h2v2h-2zM200 260h2v2h-2zM199 260h2v2h-2zM201 258h2v2h-2zM201 259h2v2h-2zM201 257h2v2h-2zM201 258h2v2h-2zM201 258h2v2h-2zM200 256h2v2h-2zM200 256h2v2h-2zM201 259h2v2h-2zM201 257h2v2h-2zM199 256h2v2h-2zM197 257h2v2h-2zM198 256h2v2h-2zM197 257h2v2h-2zM199 256h2v2h-2zM198 256h2v2h-2zM197 258h2v2h-2zM197 258h2v2h-2zM198 257h2v2h-2zM197 258h2v2h-2zM198 260h2v2h-2zM199 260h2v2h-2zM201 258h2v2h-2zM201 259h2v2h-2zM200 256h2v2h-2zM201 258h2v2h-2zM201 258h2v2h-2zM200 256h2v2h-2zM200 256h2v2h-2zM204 257h2v2h-2zM203 261h2v2h-2zM199 259h2v2h-2zM197 258h2v2h-2zM198 256h2v2h-2zM199 260h2v2h-2zM200 259h2v2h-2zM201 262h2v2h-2zM200 259h2v2h-2zM196 258h2v2h-2zM200 258h2v2h-2zM205 255h2v2h-2zM197 258h2v2h-2zM197 261h2v2h-2zM198 257h2v2h-2zM198 257h2v2h-2zM195 261h2v2h-2zM197 260h2v2h-2zM198 261h2v2h-2zM199 255h2v2h-2zM196 257h2v2h-2zM195 254h2v2h-2zM198 258h2v2h-2zM203 261h2v2h-2zM198 259h2v2h-2zM202 254h2v2h-2zM204 255h2v2h-2zM200 259h2v2h-2zM203 264h2v2h-2zM204 257h2v2h-2zM203 255h2v2h-2zM197 255h2v2h-2zM200 256h2v2h-2zM197 256h2v2h-2zM198 257h2v2h-2zM195 255h2v2h-2zM199 263h2v2h-2zM195 263h2v2h-2zM199 265h2v2h-2zM199 260h2v2h-2zM197 259h2v2h-2zM201 259h2v2h-2zM202 261h2v2h-2zM203 257h2v2h-2zM197 256h2v2h-2zM203 258h2v2h-2zM202 263h2v2h-2zM198 264h2v2h-2zM203 259h2v2h-2zM198 263h2v2h-2zM199 256h2v2h-2zM197 264h2v2h-2zM201 260h2v2h-2zM200 257h2v2h-2zM196 255h2v2h-2zM197 255h2v2h-2zM192 262h2v2h-2zM201 256h2v2h-2zM205 263h2v2h-2zM195 254h2v2h-2zM197 263h2v2h-2zM199 267h2v2h-2zM202 255h2v2h-2zM197 262h2v2h-2zM197 260h2v2h-2zM205 252h2v2h-2zM198 263h2v2h-2zM196 257h2v2h-2zM198 264h2v2h-2zM197 256h2v2h-2zM203 257h2v2h-2zM197 255h2v2h-2zM199 261h2v2h-2zM199 256h2v2h-2zM199 260h2v2h-2zM199 265h2v2h-2zM201 255h2v2h-2zM197 259h2v2h-2zM206 257h2v2h-2zM195 255h2v2h-2zM205 259h2v2h-2zM194 257h2v2h-2zM200 264h2v2h-2zM197 257h2v2h-2zM193 258h2v2h-2zM207 260h2v2h-2zM198 259h2v2h-2zM203 256h2v2h-2zM203 262h2v2h-2zM192 263h2v2h-2zM195 252h2v2h-2zM193 255h2v2h-2zM201 258h2v2h-2zM193 258h2v2h-2zM197 261h2v2h-2zM197 256h2v2h-2zM196 255h2v2h-2zM199 258h2v2h-2zM202 254h2v2h-2zM201 254h2v2h-2zM201 256h2v2h-2zM204 257h2v2h-2zM203 257h2v2h-2zM202 259h2v2h-2zM202 253h2v2h-2zM206 256h2v2h-2zM189 256h2v2h-2zM198 250h2v2h-2zM204 254h2v2h-2zM200 258h2v2h-2zM200 258h2v2h-2zM203 247h2v2h-2zM208 263h2v2h-2zM191 265h2v2h-2zM200 260h2v2h-2zM195 267h2v2h-2zM198 267h2v2h-2zM196 254h2v2h-2zM195 258h2v2h-2zM193 262h2v2h-2zM203 252h2v2h-2zM199 265h2v2h-2zM203 264h2v2h-2zM190 255h2v2h-2zM198 257h2v2h-2zM204 254h2v2h-2zM197 261h2v2h-2zM195 263h2v2h-2zM202 259h2v2h-2zM200 264h2v2h-2zM200 255h2v2h-2zM200 257h2v2h-2zM201 259h2v2h-2zM202 264h2v2h-2zM202 261h2v2h-2zM206 252h2v2h-2zM201 252h2v2h-2zM203 256h2v2h-2zM191 261h2v2h-2zM196 260h2v2h-2zM196 253h2v2h-2zM205 248h2v2h-2zM206 259h2v2h-2zM188 252h2v2h-2zM190 257h2v2h-2zM203 260h2v2h-2zM206 253h2v2h-2zM198 259h2v2h-2zM195 256h2v2h-2zM198 256h2v2h-2zM202 257h2v2h-2zM213 260h2v2h-2zM201 254h2v2h-2zM194 259h2v2h-2zM188 255h2v2h-2zM199 249h2v2h-2zM193 259h2v2h-2zM202 249h2v2h-2zM202 272h2v2h-2zM205 258h2v2h-2zM197 259h2v2h-2zM201 263h2v2h-2zM192 255h2v2h-2zM200 262h2v2h-2zM201 264h2v2h-2zM198 255h2v2h-2zM208 265h2v2h-2zM208 262h2v2h-2zM196 258h2v2h-2zM206 258h2v2h-2zM189 255h2v2h-2zM202 254h2v2h-2zM205 266h2v2h-2zM206 257h2v2h-2zM197 249h2v2h-2zM196 263h2v2h-2zM207 260h2v2h-2zM201 253h2v2h-2zM197 244h2v2h-2zM195 255h2v2h-2zM201 258h2v2h-2zM205 255h2v2h-2zM192 266h2v2h-2zM201 259h2v2h-2zM198 251h2v2h-2zM202 259h2v2h-2zM208 258h2v2h-2zM208 255h2v2h-2zM204 269h2v2h-2zM193 259h2v2h-2zM204 258h2v2h-2zM203 254h2v2h-2zM204 245h2v2h-2zM199 252h2v2h-2zM198 263h2v2h-2zM199 268h2v2h-2zM193 260h2v2h-2zM201 250h2v2h-2zM206 244h2v2h-2zM199 254h2v2h-2zM189 251h2v2h-2zM206 266h2v2h-2zM196 253h2v2h-2zM193 265h2v2h-2zM192 251h2v2h-2zM193 246h2v2h-2zM191 249h2v2h-2zM136 286h2v2h-2zM202 258h2v2h-2zM192 253h2v2h-2zM174 267h2v2h-2zM204 252h2v2h-2zM204 256h2v2h-2zM198 237h2v2h-2zM158 284h2v2h-2zM203 253h2v2h-2zM194 249h2v2h-2zM205 270h2v2h-2zM188 238h2v2h-2zM201 256h2v2h-2zM203 256h2v2h-2zM188 263h2v2h-2zM184 265h2v2h-2zM177 268h2v2h-2zM206 252h2v2h-2zM207 245h2v2h-2zM201 263h2v2h-2zM151 226h2v2h-2zM198 271h2v2h-2zM200 267h2v2h-2zM186 252h2v2h-2zM215 254h2v2h-2zM182 275h2v2h-2zM207 238h2v2h-2zM172 251h2v2h-2zM192 243h2v2h-2zM193 279h2v2h-2zM178 282h2v2h-2zM215 278h2v2h-2zM195 255h2v2h-2zM181 265h2v2h-2zM182 262h2v2h-2zM187 265h2v2h-2zM198 269h2v2h-2zM209 219h2v2h-2zM199 277h2v2h-2zM198 260h2v2h-2zM195 253h2v2h-2zM189 266h2v2h-2zM189 257h2v2h-2zM196 247h2v2h-2zM203 258h2v2h-2zM197 266h2v2h-2zM169 263h2v2h-2zM162 255h2v2h-2zM198 253h2v2h-2zM202 284h2v2h-2zM216 284h2v2h-2zM217 246h2v2h-2zM198 291h2v2h-2zM206 270h2v2h-2zM201 261h2v2h-2zM210 274h2v2h-2zM195 248h2v2h-2zM188 259h2v2h-2zM212 274h2v2h-2zM187 226h2v2h-2zM193 282h2v2h-2zM196 259h2v2h-2zM190 265h2v2h-2zM202 263h2v2h-2zM189 226h2v2h-2zM196 246h2v2h-2zM193 279h2v2h-2zM191 273h2v2h-2zM181 271h2v2h-2zM153 269h2v2h-2zM217 268h2v2h-2zM216 259h2v2h-2zM196 261h2v2h-2zM206 256h2v2h-2zM186 256h2v2h-2zM199 273h2v2h-2zM241 246h2v2h-2zM148 237h2v2h-2zM132 275h2v2h-2zM200 286h2v2h-2zM184 313h2v2h-2zM180 248h2v2h-2zM206 254h2v2h-2zM195 242h2v2h-2zM200 254h2v2h-2zM169 234h2v2h-2zM209 246h2v2h-2zM187 244h2v2h-2zM189 245h2v2h-2zM202 262h2v2h-2zM202 262h2v2h-2zM169 249h2v2h-2zM206 251h2v2h-2zM192 298h2v2h-2zM182 249h2v2h-2zM176 234h2v2h-2zM89 213h2v2h-2zM201 248h2v2h-2zM192 252h2v2h-2zM219 246h2v2h-2zM196 256h2v2h-2zM159 244h2v2h-2zM222 227h2v2h-2zM185 262h2v2h-2zM205 240h2v2h-2zM178 274h2v2h-2zM237 267h2v2h-2zM199 246h2v2h-2zM169 314h2v2h-2zM196 281h2v2h-2zM225 241h2v2h-2zM210 237h2v2h-2zM206 232h2v2h-2zM172 258h2v2h-2zM190 308h2v2h-2zM196 263h2v2h-2zM205 259h2v2h-2zM274 348h2v2h-2zM210 198h2v2h-2zM247 240h2v2h-2zM172 206h2v2h-2zM186 259h2v2h-2zM161 259h2v2h-2zM157 244h2v2h-2zM165 260h2v2h-2zM194 255h2v2h-2zM269 191h2v2h-2zM184 229h2v2h-2zM146 209h2v2h-2zM196 267h2v2h-2zM122 297h2v2h-2zM184 270h2v2h-2zM-2 272h2v2h-2zM169 264h2v2h-2zM198 258h2v2h-2zM56 494h2v2h-2zM174 267h2v2h-2zM264 244h2v2h-2zM184 232h2v2h-2zM169 305h2v2h-2zM40 337h2v2h-2zM189 246h2v2h-2zM227 174h2v2h-2zM72 304h2v2h-2zM173 247h2v2h-2zM286 134h2v2h-2zM132 245h2v2h-2zM142 278h2v2h-2zM193 177h2v2h-2zM165 250h2v2h-2zM107 221h2v2h-2zM287 38h2v2h-2zM-6 381h2v2h-2zM226 167h2v2h-2zM121 109h2v2h-2zM-20 232h2v2h-2zM225 259h2v2h-2zM135 186h2v2h-2zM147 249h2v2h-2zM326 312h2v2h-2zM237 205h2v2h-2zM136 258h2v2h-2zM130 311h2v2h-2zM246 241h2v2h-2zM47 60h2v2h-2zM243 331h2v2h-2zM8 178h2v2h-2zM149 170h2v2h-2zM201 324h2v2h-2zM231 302h2v2h-2zM48 270h2v2h-2zM-18 213h2v2h-2zM192 264h2v2h-2zM143 290h2v2h-2zM187 285h2v2h-2zM-63 479h2v2h-2zM225 292h2v2h-2zM47 306h2v2h-2zM172 258h2v2h-2zM156 211h2v2h-2zM208 -98h2v2h-2zM123 299h2v2h-2zM170 216h2v2h-2zM177 237h2v2h-2zM203 231h2v2h-2zM202 202h2v2h-2zM206 228h2v2h-2zM184 269h2v2h-2zM171 239h2v2h-2zM14 23h2v2h-2zM-9 254h2v2h-2zM67 172h2v2h-2zM207 250h2v2h-2zM-73 178h2v2h-2zM171 236h2v2h-2zM64 334h2v2h-2zM84 191h2v2h-2z"/><path d="M200 257h2v2h-2zM201 258h2v2h-2zM201 258h2v2h-2zM201 258h2v2h-2zM198 257h2v2h-2zM199 256h2v2h-2zM200 257h2v2h-2zM198 257h2v2h-2zM198 257h2v2h-2zM199 256h2v2h-2zM198 257h2v2h-2zM198 257h2v2h-2zM197 259h2v2h-2zM197 258h2v2h-2zM197 258h2v2h-2zM197 258h2v2h-2zM197 258h2v2h-2zM198 259h2v2h-2zM199 260h2v2h-2zM201 258h2v2h-2zM201 258h2v2h-2zM201 258h2v2h-2zM201 257h2v2h-2zM200 259h2v2h-2zM201 259h2v2h-2zM201 257h2v2h-2zM199 256h2v2h-2zM197 258h2v2h-2zM198 259h2v2h-2zM197 258h2v2h-2zM198 260h2v2h-2zM198 259h2v2h-2zM200 259h2v2h-2zM200 259h2v2h-2zM200 259h2v2h-2zM201 258h2v2h-2zM200 259h2v2h-2zM201 258h2v2h-2zM199 256h2v2h-2zM198 256h2v2h-2zM197 257h2v2h-2zM197 258h2v2h-2zM199 260h2v2h-2zM200 260h2v2h-2zM200 260h2v2h-2zM200 259h2v2h-2zM200 259h2v2h-2zM201 258h2v2h-2zM201 258h2v2h-2zM201 259h2v2h-2zM199 260h2v2h-2zM197 257h2v2h-2zM198 257h2v2h-2zM199 256h2v2h-2zM197 258h2v2h-2zM198 256h2v2h-2zM197 258h2v2h-2zM197 258h2v2h-2zM199 256h2v2h-2zM197 258h2v2h-2zM198 257h2v2h-2zM197 257h2v2h-2zM197 257h2v2h-2zM198 259h2v2h-2zM198 260h2v2h-2zM198 259h2v2h-2zM198 260h2v2h-2zM199 260h2v2h-2zM198 260h2v2h-2zM198 260h2v2h-2zM200 260h2v2h-2zM199 260h2v2h-2zM201 258h2v2h-2zM201 257h2v2h-2zM201 258h2v2h-2zM200 257h2v2h-2zM200 256h2v2h-2zM201 257h2v2h-2zM199 256h2v2h-2zM201 258h2v2h-2zM201 259h2v2h-2zM200 256h2v2h-2zM198 257h2v2h-2zM198 257h2v2h-2zM197 258h2v2h-2zM198 256h2v2h-2zM198 256h2v2h-2zM197 258h2v2h-2zM197 259h2v2h-2zM197 259h2v2h-2zM197 258h2v2h-2zM197 258h2v2h-2zM198 260h2v2h-2zM199 260h2v2h-2zM201 259h2v2h-2zM201 257h2v2h-2zM201 257h2v2h-2zM201 258h2v2h-2zM201 257h2v2h-2zM199 256h2v2h-2zM197 256h2v2h-2zM197 263h2v2h-2zM199 258h2v2h-2zM198 255h2v2h-2zM202 259h2v2h-2zM201 260h2v2h-2zM200 255h2v2h-2zM200 263h2v2h-2zM202 258h2v2h-2zM199 256h2v2h-2zM195 257h2v2h-2zM200 257h2v2h-2zM200 259h2v2h-2zM198 256h2v2h-2zM198 257h2v2h-2zM195 259h2v2h-2zM200 256h2v2h-2zM196 255h2v2h-2zM197 256h2v2h-2zM198 261h2v2h-2zM199 259h2v2h-2zM204 262h2v2h-2zM200 260h2v2h-2zM201 262h2v2h-2zM197 262h2v2h-2zM199 258h2v2h-2zM200 258h2v2h-2zM199 257h2v2h-2zM201 262h2v2h-2zM194 260h2v2h-2zM194 258h2v2h-2zM200 258h2v2h-2zM200 260h2v2h-2zM195 261h2v2h-2zM197 256h2v2h-2zM191 258h2v2h-2zM201 254h2v2h-2zM196 258h2v2h-2zM200 257h2v2h-2zM196 258h2v2h-2zM199 256h2v2h-2zM200 253h2v2h-2zM198 261h2v2h-2zM199 256h2v2h-2zM198 257h2v2h-2zM199 260h2v2h-2zM196 260h2v2h-2zM196 259h2v2h-2zM195 255h2v2h-2zM199 256h2v2h-2zM205 260h2v2h-2zM199 256h2v2h-2zM201 259h2v2h-2zM194 256h2v2h-2zM200 260h2v2h-2zM199 258h2v2h-2zM197 258h2v2h-2zM196 255h2v2h-2zM198 259h2v2h-2zM206 253h2v2h-2zM199 261h2v2h-2zM200 261h2v2h-2zM197 262h2v2h-2zM196 254h2v2h-2zM201 253h2v2h-2zM203 261h2v2h-2zM201 256h2v2h-2zM194 260h2v2h-2zM200 257h2v2h-2zM193 260h2v2h-2zM194 253h2v2h-2zM199 252h2v2h-2zM195 255h2v2h-2zM200 259h2v2h-2zM204 254h2v2h-2zM200 254h2v2h-2zM199 263h2v2h-2zM201 254h2v2h-2zM199 251h2v2h-2zM206 264h2v2h-2zM194 261h2v2h-2zM197 251h2v2h-2zM199 258h2v2h-2zM194 258h2v2h-2zM198 258h2v2h-2zM194 256h2v2h-2zM204 253h2v2h-2zM197 256h2v2h-2zM202 260h2v2h-2zM204 252h2v2h-2zM198 264h2v2h-2zM206 261h2v2h-2zM197 258h2v2h-2zM200 256h2v2h-2zM195 259h2v2h-2zM192 256h2v2h-2zM204 262h2v2h-2zM194 259h2v2h-2zM201 251h2v2h-2zM200 255h2v2h-2zM199 257h2v2h-2zM198 258h2v2h-2zM193 254h2v2h-2zM198 257h2v2h-2zM203 255h2v2h-2zM198 256h2v2h-2zM198 250h2v2h-2zM198 255h2v2h-2zM196 261h2v2h-2zM205 259h2v2h-2zM201 257h2v2h-2zM194 266h2v2h-2zM191 257h2v2h-2zM203 257h2v2h-2zM202 256h2v2h-2zM196 255h2v2h-2zM202 251h2v2h-2zM189 261h2v2h-2zM200 250h2v2h-2zM203 252h2v2h-2zM195 255h2v2h-2zM204 257h2v2h-2zM202 256h2v2h-2zM206 265h2v2h-2zM199 262h2v2h-2zM190 251h2v2h-2zM200 257h2v2h-2zM202 257h2v2h-2zM202 258h2v2h-2zM194 260h2v2h-2zM200 264h2v2h-2zM207 254h2v2h-2zM202 259h2v2h-2zM196 257h2v2h-2zM194 264h2v2h-2zM195 261h2v2h-2zM192 263h2v2h-2zM191 256h2v2h-2zM197 258h2v2h-2zM193 255h2v2h-2zM189 245h2v2h-2zM202 256h2v2h-2zM197 268h2v2h-2zM205 261h2v2h-2zM209 265h2v2h-2zM185 248h2v2h-2zM202 259h2v2h-2zM197 252h2v2h-2zM199 262h2v2h-2zM199 266h2v2h-2zM197 253h2v2h-2zM200 266h2v2h-2zM203 262h2v2h-2zM193 257h2v2h-2zM202 261h2v2h-2zM201 262h2v2h-2zM202 258h2v2h-2zM200 257h2v2h-2zM185 255h2v2h-2zM202 257h2v2h-2zM198 257h2v2h-2zM197 254h2v2h-2zM199 256h2v2h-2zM194 269h2v2h-2zM205 251h2v2h-2zM202 264h2v2h-2zM207 257h2v2h-2zM191 256h2v2h-2zM194 261h2v2h-2zM202 250h2v2h-2zM195 255h2v2h-2zM186 254h2v2h-2zM193 259h2v2h-2zM206 261h2v2h-2zM193 260h2v2h-2zM201 259h2v2h-2zM187 259h2v2h-2zM203 246h2v2h-2zM201 262h2v2h-2zM204 260h2v2h-2zM202 255h2v2h-2zM199 254h2v2h-2zM199 269h2v2h-2zM204 258h2v2h-2zM198 251h2v2h-2zM203 257h2v2h-2zM202 260h2v2h-2zM197 261h2v2h-2zM201 255h2v2h-2zM213 253h2v2h-2zM204 254h2v2h-2zM201 256h2v2h-2zM201 259h2v2h-2zM216 258h2v2h-2zM206 260h2v2h-2zM204 257h2v2h-2zM193 261h2v2h-2zM188 260h2v2h-2zM210 263h2v2h-2zM201 261h2v2h-2zM215 252h2v2h-2zM200 257h2v2h-2zM208 258h2v2h-2zM188 255h2v2h-2zM192 250h2v2h-2zM200 263h2v2h-2zM193 272h2v2h-2zM185 256h2v2h-2zM193 260h2v2h-2zM202 265h2v2h-2zM208 271h2v2h-2zM180 258h2v2h-2zM200 254h2v2h-2zM191 249h2v2h-2zM195 274h2v2h-2zM216 238h2v2h-2zM202 243h2v2h-2zM218 257h2v2h-2zM173 249h2v2h-2zM188 267h2v2h-2zM209 257h2v2h-2zM187 253h2v2h-2zM193 260h2v2h-2zM197 246h2v2h-2zM159 302h2v2h-2zM181 261h2v2h-2zM196 263h2v2h-2zM202 266h2v2h-2zM178 248h2v2h-2zM209 277h2v2h-2zM194 246h2v2h-2zM175 251h2v2h-2zM180 268h2v2h-2zM187 267h2v2h-2zM190 261h2v2h-2zM217 260h2v2h-2zM170 223h2v2h-2zM181 256h2v2h-2zM199 266h2v2h-2zM215 274h2v2h-2zM197 257h2v2h-2zM178 264h2v2h-2zM181 263h2v2h-2zM176 246h2v2h-2zM186 258h2v2h-2zM187 259h2v2h-2zM256 196h2v2h-2zM208 204h2v2h-2zM205 341h2v2h-2zM198 250h2v2h-2zM191 266h2v2h-2zM183 258h2v2h-2zM169 271h2v2h-2zM196 272h2v2h-2zM208 255h2v2h-2zM225 262h2v2h-2zM176 287h2v2h-2zM197 257h2v2h-2zM222 259h2v2h-2zM191 267h2v2h-2zM251 210h2v2h-2zM187 246h2v2h-2zM185 253h2v2h-2zM194 255h2v2h-2zM186 211h2v2h-2zM189 254h2v2h-2zM213 268h2v2h-2zM209 210h2v2h-2zM195 221h2v2h-2zM185 290h2v2h-2zM186 256h2v2h-2zM199 259h2v2h-2zM151 266h2v2h-2zM132 263h2v2h-2zM188 253h2v2h-2zM210 255h2v2h-2zM177 237h2v2h-2zM190 253h2v2h-2zM197 252h2v2h-2zM148 274h2v2h-2zM188 248h2v2h-2zM165 279h2v2h-2zM187 249h2v2h-2zM178 316h2v2h-2zM201 259h2v2h-2zM212 266h2v2h-2zM201 221h2v2h-2zM191 253h2v2h-2zM183 241h2v2h-2zM198 146h2v2h-2zM159 270h2v2h-2zM197 272h2v2h-2zM243 268h2v2h-2zM244 239h2v2h-2zM207 265h2v2h-2zM183 240h2v2h-2zM248 249h2v2h-2zM180 231h2v2h-2zM196 292h2v2h-2zM207 280h2v2h-2zM186 248h2v2h-2zM170 251h2v2h-2zM201 267h2v2h-2zM218 301h2v2h-2zM222 234h2v2h-2zM194 265h2v2h-2zM223 241h2v2h-2zM191 264h2v2h-2zM185 314h2v2h-2zM138 271h2v2h-2zM143 242h2v2h-2zM201 264h2v2h-2zM180 246h2v2h-2zM193 291h2v2h-2zM171 242h2v2h-2zM170 273h2v2h-2zM163 279h2v2h-2zM206 221h2v2h-2zM151 243h2v2h-2zM188 258h2v2h-2zM168 266h2v2h-2zM151 245h2v2h-2zM107 316h2v2h-2zM217 244h2v2h-2zM200 253h2v2h-2zM178 291h2v2h-2zM174 -198h2v2h-2zM200 248h2v2h-2zM212 268h2v2h-2zM192 226h2v2h-2zM208 275h2v2h-2zM145 225h2v2h-2zM195 262h2v2h-2zM176 240h2v2h-2zM155 256h2v2h-2zM145 283h2v2h-2zM208 259h2v2h-2zM188 288h2v2h-2zM-55 457h2v2h-2zM180 213h2v2h-2zM146 386h2v2h-2zM179 245h2v2h-2zM200 255h2v2h-2zM219 252h2v2h-2zM239 146h2v2h-2zM191 273h2v2h-2zM192 263h2v2h-2zM211 248h2v2h-2zM-158 -64h2v2h-2zM176 189h2v2h-2zM173 235h2v2h-2zM122 216h2v2h-2zM169 310h2v2h-2zM-799 31h2v2h-2zM190 253h2v2h-2zM155 28h2v2h-2zM196 244h2v2h-2zM214 296h2v2h-2zM158 268h2v2h-2zM201 273h2v2h-2zM195 256h2v2h-2zM-294 444h2v2h-2zM192 252h2v2h-2zM180 264h2v2h-2zM188 262h2v2h-2zM205 261h2v2h-2zM214 288h2v2h-2zM161 242h2v2h-2zM226 326h2v2h-2zM97 275h2v2h-2zM171 270h2v2h-2zM279 299h2v2h-2zM180 312h2v2h-2zM144 317h2v2h-2zM-148 526h2v2h-2zM156 318h2v2h-2zM154 265h2v2h-2zM193 264h2v2h-2zM206 197h2v2h-2zM207 235h2v2h-2zM-84 351h2v2h-2zM221 246h2v2h-2zM96 394h2v2h-2zM208 160h2v2h-2zM147 311h2v2h-2zM151 295h2v2h-2zM162 342h2v2h-2zM199 325h2v2h-2zM118 122h2v2h-2zM157 293h2v2h-2zM163 224h2v2h-2zM84 244h2v2h-2zM226 294h2v2h-2zM-53 200h2v2h-2zM118 278h2v2h-2zM231 425h2v2h-2zM204 203h2v2h-2zM187 26h2v2h-2zM201 293h2v2h-2zM53 224h2v2h-2zM233 259h2v2h-2zM-162 384h2v2h-2zM-164 111h2v2h-2zM198 236h2v2h-2zM-401 -444h2v2h-2z"/></g><path d="M219 279L216 273M219 279L222 273M216 273H222" fill="none" stroke="#ff0000" stroke-width="1" stroke-linecap="square" shape-rendering="crispEdges" transform="translate(.5 .5)"/><path d="M227 298L224 292M227 298L230 292M224 292H230" fill="none" stroke="#0000ff" stroke-width="1" stroke-linecap="square" shape-rendering="crispEdges" transform="translate(.5 .5)"/><path d="M270 273L267 267M270 273L273 267M267 267H273" fill="none" stroke="#ffff00" stroke-width="1" stroke-linecap="square" shape-rendering="crispEdges" transform="translate(.5 .5)"/></svg>
<svg style="left:626px;top:572px;background:#000" width="400" height="514" viewBox="0 0 400 514"><text x="2.5" y="15.3" textLength="66.5" lengthAdjust="spacingAndGlyphs">S21 Polar Plot</text><g fill="none" stroke="#c0c0c0" stroke-width="1" shape-rendering="crispEdges" transform="translate(.5 .5)"><circle cx="200" cy="257" r="180"/><circle cx="200" cy="257" r="90"/><path d="M20 257H380M200 77V437M73 130L327 384M73 384L327 130"/></g><g fill="none" stroke="rgba(85,255,0,0.55)" stroke-width="1" stroke-linecap="square" shape-rendering="crispEdges" transform="translate(.5 .5)"><path d="M199 254l0 0M199 254l0 0M200 254l-1 0M199 254l0 0M200 254l-1 0M199 254l0 0M199 254l0 0M199 254l0 0M200 254l-1 0M199 254l0 0M199 254l0 0M199 254l0 0M199 254l1 0M200 254l-1 0M199 254l0 0M199 254l0 0M199 254l0 0M199 254l0 0M200 254l-1 0M199 254l0 0M200 254l0 0M200 254l0 0M200 254l-1 0M199 254l0 0M199 254l0 0M199 254l1 0M199 254l0 0M199 254l1 0M200 254l-1 0M199 254l0 0M199 254l1 0M200 254l-1 0M200 254l-1 0M199 254l0 0M199 254l0 0M199 254l0 0M199 254l0 0M199 254l0 0M199 254l1 0M200 254l-1 0M199 254l1 0M200 254l-1 0M200 254l-1 0M199 254l0 0M199 254l0 0M199 254l0 0M200 254l-1 0M199 254l0 0M200 254l-1 0M199 254l0 0M199 254l0 0M199 254l0 -1M200 254l-1 0M199 254l0 0M199 254l0 0M199 254l0 -1M199 253l0 1M199 254l0 0M199 254l1 0M200 254l-1 0M199 253l1 0M200 253l-1 1M199 254l0 0M199 254l0 0M199 254l0 0M199 254l1 0M199 254l0 0M199 254l0 0M200 254l-1 0M199 254l0 -1M200 253l-2 1M198 254l1 -1M199 253l1 1M200 254l-1 1M199 254l1 0M200 254l-1 -1M198 254l-1 0M197 254l2 -1M198 253l1 2M199 255l2 0M199 254l1 -1M200 253l-2 2M198 257l0 -4M198 253l-1 1M202 256l-4 -5M198 251l2 5M199 257l-1 -3M198 254l1 1M198 251l6 3M204 254l-6 -1M200 253l-1 0M199 253l0 0M199 254l3 1M202 255l-4 -2M198 252l-1 2M197 254l0 0M201 255l-2 -3M199 252l-3 0M198 254l0 -4M198 250l-2 2M198 255l-3 -3M195 252l3 -1M198 256l-1 -5M197 251l5 2M196 253l9 -1M205 252l-4 4M195 253l7 -1M202 252l-5 -2M196 260l7 -6M203 254l-6 -4M193 253l8 0M201 253l-4 -4M197 254l2 5M199 259l-4 -4M206 255l-9 -2M197 253l1 1M194 251l-2 1M192 252l3 -3M202 245l-4 6M198 251l-19 -3M200 254l-11 -1M189 253l8 -1M203 261l-9 -13M194 248l6 7M199 253l3 -1M202 252l-3 2M202 254l-5 -6"/><path d="M199 254l0 0M199 254l0 0M199 254l0 0M199 254l1 0M199 254l0 0M199 254l0 0M199 254l0 0M199 254l0 0M199 254l1 0M200 254l-1 0M199 254l1 0M200 254l-1 0M199 254l1 0M200 254l-1 0M199 254l0 0M199 254l0 0M199 254l1 0M200 254l-1 0M199 254l0 0M199 254l0 0M200 254l-1 0M199 254l0 0M199 254l0 0M199 254l0 0M200 254l-1 0M199 254l1 0M200 254l0 0M200 254l-1 0M199 254l1 0M200 254l-1 0M199 254l0 0M199 254l0 0M199 254l0 0M199 254l0 0M199 254l0 0M199 254l0 0M199 254l0 0M199 254l0 0M199 254l0 0M199 254l0 0M199 254l1 0M200 254l-1 0M199 254l1 0M200 254l-1 0M199 254l1 0M200 254l-1 0M199 254l0 0M199 254l1 0M199 254l0 0M199 254l1 0M199 253l1 0M200 253l-1 1M199 254l0 0M199 254l0 0M199 253l0 1M199 254l0 0M199 254l0 0M199 254l1 -1M199 254l0 0M199 254l0 0M199 254l1 1M200 255l-1 -1M199 254l0 -1M199 253l0 1M200 254l0 0M200 254l-1 0M199 254l0 0M199 254l1 0M199 253l1 1M200 254l0 0M199 253l1 1M200 254l0 -1M199 255l1 0M200 255l0 0M199 253l0 1M199 254l0 -1M199 253l0 0M199 253l0 0M201 255l0 1M201 256l-2 -3M198 255l3 -3M201 252l-1 3M197 254l1 -2M198 252l0 -1M200 256l1 0M201 256l0 1M199 255l-1 1M198 256l-2 -3M198 253l2 0M200 253l-3 0M199 253l-2 0M197 253l3 1M198 253l-1 1M197 254l1 -2M197 254l2 -3M199 251l-1 5M196 252l0 4M196 256l-1 -4M196 252l0 4M196 256l2 -6M198 251l4 3M202 254l-6 -1M202 253l0 -2M202 251l-5 0M201 256l-2 -3M199 253l-1 4M197 250l0 0M197 250l-2 4M197 250l9 7M206 257l-6 5M197 249l-10 4M187 253l13 -3M195 255l-1 -3M194 252l8 2M198 254l-27 -5M171 249l25 4M195 249l-3 5M192 254l29 -9M179 248l18 4M197 252l-7 -2M197 252l1 -13M198 239l0 12M200 255l3 -2M203 253l-9 0M199 254l-3 -5M196 249l6 6"/><path d="M199 254l0 0M199 254l0 0M200 254l-1 0M199 254l0 0M199 254l0 0M199 254l0 0M199 254l1 0M200 254l-1 0M199 254l1 0M200 254l-1 0M199 254l1 0M200 254l0 0M199 254l0 0M199 254l0 0M199 254l0 0M199 254l0 0M199 254l0 0M199 254l0 0M199 254l0 0M199 254l1 0M199 254l0 0M199 254l0 0M199 254l0 0M199 254l1 0M200 254l-1 0M199 254l0 0M199 254l1 0M200 254l-1 0M199 254l1 0M200 254l-1 0M199 254l0 0M199 254l1 0M199 254l0 0M199 254l0 0M199 254l1 0M200 254l0 0M199 254l0 0M199 254l0 0M199 254l1 0M200 254l-1 0M199 254l0 0M199 254l1 0M199 254l0 0M199 254l0 0M199 254l0 0M199 254l0 0M200 254l-1 0M199 254l0 0M200 254l-1 0M199 254l1 0M199 254l0 -1M199 253l0 1M199 254l0 0M199 254l0 0M199 254l0 0M199 254l0 0M200 253l-1 1M199 254l0 0M199 254l0 0M199 254l0 0M199 254l0 0M199 254l1 -1M199 254l0 1M199 255l2 0M199 254l0 0M199 254l1 0M200 254l-1 1M199 255l1 0M200 254l0 1M200 255l-1 -1M200 253l-1 1M199 254l0 0M200 255l-1 -2M199 253l-1 1M199 253l0 1M199 254l0 -1M199 253l3 2M202 255l-2 0M199 253l-1 2M198 255l3 0M200 255l-4 0M196 255l2 -3M198 251l1 1M199 252l-2 1M201 257l-3 -4M198 253l-1 1M196 253l2 2M198 255l2 -2M197 253l2 -1M199 252l0 2M200 254l-1 -2M199 252l2 1M198 252l-1 2M197 254l0 0M198 256l0 -3M198 253l-2 1M195 252l4 6M199 258l-4 -3M198 250l-1 1M197 251l1 3M196 253l0 -1M196 252l0 1M197 251l-2 3M195 254l9 -3M198 257l-3 -7M195 250l1 0M195 254l2 -5M197 249l-2 4M200 262l-6 -12M194 250l2 -4M200 250l-7 5M193 255l3 -3M202 254l-1 -4M201 250l-7 4M196 253l-1 3M195 256l4 -3M221 245l-24 13M197 258l0 -5M190 250l6 1M196 251l-6 3M198 251l-3 -9M195 242l-6 16M194 253l7 2M201 255l-5 -4M202 255l-6 -1M196 254l2 0"/><path d="M199 254l0 0M199 254l0 0M199 254l0 0M199 254l0 0M199 254l1 0M200 254l0 0M199 254l1 0M200 254l-1 0M199 254l0 0M199 254l1 0M200 254l0 0M200 254l0 0M199 254l0 0M199 254l0 0M199 254l0 0M199 254l1 0M199 254l0 0M199 254l0 0M200 254l-1 0M199 254l1 0M199 254l0 0M199 254l0 0M200 254l-1 0M199 254l0 0M199 254l0 0M199 254l1 0M199 254l0 0M199 254l0 0M199 254l1 0M200 254l0 0M200 254l0 0M200 254l-1 0M199 254l1 0M200 254l-1 0M200 254l0 0M200 254l0 0M199 254l0 0M199 254l1 0M199 254l0 0M199 254l0 0M200 254l-1 0M199 254l1 0M199 254l0 0M199 254l0 0M199 254l0 -1M199 253l1 1M199 254l0 0M199 254l0 0M200 254l-1 0M199 254l0 0M199 254l1 0M200 254l-1 0M199 254l0 0M199 254l0 0M199 254l0 0M199 254l0 0M199 254l1 0M200 254l-1 0M199 254l0 0M199 254l1 0M200 253l0 2M200 255l-1 -1M201 255l-2 -2M199 253l0 1M200 254l-1 -1M199 253l0 0M200 255l-1 -1M199 254l0 -1M199 254l0 0M199 254l0 0M199 254l1 1M200 255l-1 -2M198 254l1 0M199 254l0 -1M199 253l0 0M199 253l0 1M200 255l-1 -2M199 253l2 2M201 255l-2 -2M199 253l1 0M198 252l0 2M198 254l1 0M197 253l1 0M198 253l3 2M197 254l2 -1M199 253l2 -1M200 253l-2 3M198 256l1 -2M199 254l0 -2M199 252l-1 1M201 253l-3 -1M198 252l2 1M197 254l4 -3M201 251l-4 2M196 254l1 -2M197 252l1 1M195 255l4 -2M199 253l-3 0M198 254l-3 -2M195 252l1 2M196 253l-1 1M195 254l2 -1M204 251l-7 0M197 251l0 -1M196 250l6 -1M202 249l-1 -2M195 253l1 -5M196 248l0 7M196 246l-5 9M191 255l10 4M196 252l-1 -1M195 251l3 3M194 254l13 7M207 261l-4 -7M199 253l-1 1M198 254l-3 -4M197 253l0 -8M197 245l3 12M190 254l4 -9M194 245l9 -2M189 258l8 -4M197 254l-5 0M196 251l1 2M197 253l-2 4M198 254l1 -1M199 253l-3 0"/><path d="M199 254l0 0M199 254l1 0M199 254l0 0M199 254l0 0M200 254l-1 0M199 254l1 0M199 254l1 0M200 254l-1 0M200 254l-1 0M199 254l0 0M200 254l0 0M200 254l-1 0M199 254l0 0M199 254l1 0M200 254l-1 0M199 254l0 0M199 254l1 0M200 254l-1 0M200 254l0 0M200 254l0 0M199 254l0 0M199 254l0 0M199 254l0 0M199 254l0 0M200 254l-1 0M199 254l0 0M199 254l0 0M199 254l0 0M200 254l-1 0M199 254l0 0M199 254l0 0M199 254l1 0M199 254l0 0M199 254l0 0M200 254l-1 0M199 254l0 0M200 254l-1 0M199 254l0 0M199 254l0 0M199 254l0 0M200 254l0 0M200 254l-1 0M199 254l0 0M199 254l1 0M200 254l-1 0M199 254l1 0M199 254l1 0M200 254l-1 0M199 254l1 0M200 254l0 0M199 254l0 0M199 254l0 0M199 254l0 0M199 254l0 0M199 254l0 0M199 254l0 0M199 254l1 0M200 254l-1 0M200 254l-1 -1M199 253l0 1M199 254l0 0M199 254l0 1M199 254l0 0M199 254l0 0M199 253l1 1M200 254l-1 0M199 253l1 1M200 254l-1 0M199 254l0 -1M199 253l0 1M199 253l0 1M199 254l0 0M199 253l0 0M199 253l0 1M199 254l1 1M200 255l-1 -1M201 255l-2 -4M199 251l-2 0M200 253l-3 1M197 254l0 0M199 254l3 2M202 256l-3 -3M201 255l-3 -1M198 254l2 -2M201 252l-2 0M199 252l-1 1M199 254l-1 -1M198 253l0 2M198 253l0 2M198 255l1 -3M200 253l-3 1M197 254l2 -3M197 253l4 2M201 255l-4 -1M198 253l0 -3M198 250l0 3M196 253l1 0M197 253l2 -1M196 254l3 2M199 256l-3 1M197 253l4 -3M201 250l3 1M197 250l-1 1M196 251l1 0M201 247l-5 13M196 260l6 0M196 255l4 -7M200 248l-2 -9M201 259l-5 -9M196 250l-4 -1M198 254l5 0M203 254l-5 3M203 254l-11 0M192 254l5 -3M195 250l4 3M199 253l1 -2M200 257l0 -4M200 253l10 8M203 243l-8 7M195 250l4 3M192 254l7 -4M199 250l-1 4M195 257l-1 -5M194 252l-1 5M196 253l2 -1M198 252l1 2"/><path d="M200 254l-1 0M199 254l0 0M199 254l0 0M199 254l0 0M200 254l0 0M200 254l0 0M199 254l0 0M199 254l0 0M199 254l0 0M199 254l0 0M199 254l0 0M199 254l1 0M200 254l-1 0M199 254l0 0M199 254l0 0M199 254l0 0M199 254l1 0M200 254l-1 0M200 254l0 0M200 254l-1 0M199 254l0 0M199 254l0 0M199 254l0 0M199 254l0 0M199 254l1 0M200 254l0 0M199 254l0 0M199 254l0 0M199 254l1 0M200 254l-1 0M200 254l-1 0M199 254l0 0M199 254l0 0M199 254l0 0M199 254l0 0M199 254l0 0M199 254l0 0M199 254l0 0M199 254l0 0M199 254l0 0M199 254l0 0M199 254l0 0M200 254l-1 0M199 254l0 0M200 254l-1 0M199 254l1 0M199 254l0 0M199 254l0 0M200 254l0 0M200 254l0 0M199 254l1 0M200 254l-1 0M199 254l1 0M200 254l-1 0M199 254l0 0M199 254l1 -1M199 254l0 0M199 254l0 0M199 254l0 0M199 254l1 0M199 255l0 -1M199 254l2 0M199 254l1 0M200 254l0 0M199 254l0 0M199 254l0 -1M199 254l0 0M199 254l1 1M199 254l0 0M199 254l0 0M199 254l-1 -1M198 253l2 0M199 254l1 0M200 254l-2 0M199 254l0 0M199 254l0 -1M197 251l3 2M200 253l1 4M197 254l1 1M198 255l0 -1M199 253l0 3M199 256l1 -5M200 252l1 0M201 252l-1 0M198 253l0 -1M198 252l1 4M198 255l1 -1M199 254l-2 -2M199 252l1 1M200 253l-1 0M199 251l-1 3M198 254l3 0M197 254l2 -2M199 252l0 4M198 253l-2 0M196 253l3 1M199 252l-1 1M198 253l1 4M196 257l2 -2M198 255l-1 -2M204 251l-7 -2M197 249l-1 5M197 251l-2 5M195 256l2 -7M202 260l-4 -8M198 252l-5 -1M198 239l3 12M201 251l-2 2M192 249l12 3M204 252l-9 -1M198 257l1 1M199 258l4 -5M197 251l-2 0M195 251l1 14M200 251l-4 -6M196 245l-8 7M210 261l-13 -12M197 249l-1 -2M199 253l-7 -4M192 249l-1 -6M198 254l1 0M199 254l11 0M193 257l0 -7M193 250l-2 -1M199 254l2 2M201 256l-15 -15"/><path d="M199 254l1 0M200 254l0 0M199 254l0 0M199 254l0 0M200 254l0 0M200 254l-1 0M199 254l1 0M200 254l-1 0M199 254l0 0M199 254l0 0M200 254l-1 0M199 254l1 0M199 254l0 0M199 254l1 0M199 254l0 0M199 254l1 0M199 254l0 0M199 254l0 0M199 254l0 0M199 254l0 0M199 254l0 0M199 254l1 0M199 254l0 0M199 254l0 0M200 254l-1 0M199 254l0 0M199 254l0 0M199 254l0 0M199 254l0 0M199 254l1 0M199 254l1 0M200 254l-1 0M199 254l0 0M199 254l0 0M199 254l1 0M200 254l-1 0M199 254l0 0M199 254l0 0M199 254l0 0M199 254l0 0M199 254l1 0M200 254l-1 0M199 254l1 0M200 254l-1 0M200 254l-1 0M199 254l0 0M199 254l0 0M199 254l0 0M200 254l0 0M200 254l-1 0M199 254l0 0M199 254l0 0M199 254l0 0M199 254l0 0M200 253l0 2M200 255l0 -1M199 254l0 0M199 254l1 0M200 254l-1 0M199 254l0 0M201 254l-2 -1M199 253l0 1M200 254l-1 1M199 255l1 -1M199 253l1 1M200 254l0 1M200 255l-1 -1M199 254l0 0M199 254l0 0M199 254l0 -1M200 253l0 1M200 254l-1 0M198 254l1 0M199 254l0 -1M199 253l-1 -1M198 252l3 2M201 257l-4 -4M197 253l0 0M198 254l1 -1M199 253l-1 -1M200 251l-2 2M198 253l4 3M200 252l0 6M200 258l-3 -5M199 256l-1 -2M198 254l0 2M197 252l4 -1M201 251l-3 0M199 253l1 3M200 256l-2 -2M201 254l-4 0M197 254l2 0M199 256l1 -3M200 253l-2 1M199 254l-1 0M198 254l4 1M199 257l0 -1M199 256l-1 -1M197 253l2 3M199 256l3 2M196 254l1 -6M197 248l1 2M197 249l1 0M198 249l-2 0M193 251l9 6M202 257l3 0M199 253l-2 -5M197 248l0 3M195 251l4 1M199 252l4 -5M203 253l2 5M205 258l-9 -11M196 265l-1 -20M195 245l1 2M188 252l11 3M199 255l-9 -1M196 247l16 2M212 249l-12 4M191 243l2 12M193 255l3 -2M210 254l-15 -2M195 252l6 -1M191 249l9 5M200 254l-1 1M186 241l18 16M204 257l-1 -4"/><path d="M200 254l-1 0M199 254l1 0M199 254l0 0M199 254l1 0M199 254l1 0M200 254l-1 0M199 254l0 0M199 254l1 0M199 254l0 0M199 254l0 0M200 254l-1 0M199 254l0 0M200 254l-1 0M199 254l0 0M200 254l-1 0M199 254l0 0M199 254l0 0M199 254l1 0M199 254l0 0M199 254l1 0M200 254l-1 0M199 254l1 0M199 254l0 0M199 254l0 0M199 254l0 0M199 254l0 0M199 254l0 0M199 254l1 0M200 254l-1 0M199 254l0 0M199 254l0 0M199 254l1 0M199 254l0 0M199 254l0 0M199 254l0 0M199 254l0 0M199 254l1 0M200 254l-1 0M199 254l0 0M199 254l0 0M199 254l0 0M199 254l1 0M199 254l0 0M199 254l0 0M199 254l1 0M200 254l0 0M199 254l1 0M200 254l0 0M199 254l0 0M199 254l0 0M199 254l0 0M199 254l1 0M199 254l1 1M200 255l-1 -1M200 254l-1 -1M199 253l0 0M200 254l-1 0M199 254l0 0M199 254l0 -1M199 253l0 0M199 254l1 -1M200 253l-1 1M200 254l-1 0M199 254l0 0M200 255l-1 -1M199 254l0 0M199 254l0 -1M199 253l1 1M199 253l0 2M199 255l1 -2M199 254l0 0M199 254l0 -1M199 253l0 1M199 254l0 0M201 254l1 0M202 254l-4 0M197 253l4 2M201 255l-3 -2M198 252l1 1M199 253l0 1M202 256l-2 -2M200 254l-2 3M197 253l2 4M199 257l3 -1M198 256l-1 -4M197 252l2 5M198 251l1 2M199 253l-1 -2M198 254l0 -1M198 253l2 0M199 254l-1 -1M198 253l1 1M198 254l1 0M199 254l-1 -2M202 255l-4 -3M198 252l3 3M198 255l3 -2M201 253l-3 1M202 258l-1 -1M201 257l-3 -2M198 250l-2 3M196 253l2 3M196 249l6 7M202 256l-6 -3M205 257l-3 0M202 257l-7 -4M197 251l3 -1M200 250l-4 10M203 247l0 4M203 251l-10 2M196 247l-2 5M194 252l3 2M196 247l1 4M197 251l9 4M190 254l5 9M195 263l-1 -12M200 253l-14 -1M186 252l16 -7M196 253l5 -1M201 252l-1 2M201 251l-3 3M198 254l5 7M199 255l-1 -1M198 254l1 -1M203 253l-7 0M196 253l6 1"/></g><g fill="rgba(85,255,0,0.55)" shape-rendering="crispEdges"><path d="M198 253h2v2h-2zM198 253h2v2h-2zM198 253h2v2h-2zM198 253h2v2h-2zM198 253h2v2h-2zM199 253h2v2h-2zM198 253h2v2h-2zM199 253h2v2h-2zM199 253h2v2h-2zM198 253h2v2h-2zM199 253h2v2h-2zM198 253h2v2h-2zM198 253h2v2h-2zM198 253h2v2h-2zM198 253h2v2h-2zM198 253h2v2h-2zM199 253h2v2h-2zM198 253h2v2h-2zM198 253h2v2h-2zM198 253h2v2h-2zM199 253h2v2h-2zM199 253h2v2h-2zM199 253h2v2h-2zM198 253h2v2h-2zM198 253h2v2h-2zM198 253h2v2h-2zM198 253h2v2h-2zM198 253h2v2h-2zM198 253h2v2h-2zM198 253h2v2h-2zM198 253h2v2h-2zM198 253h2v2h-2zM199 253h2v2h-2zM198 253h2v2h-2zM198 253h2v2h-2zM198 253h2v2h-2zM199 253h2v2h-2zM198 253h2v2h-2zM198 253h2v2h-2zM198 253h2v2h-2zM198 253h2v2h-2zM198 253h2v2h-2zM198 253h2v2h-2zM199 253h2v2h-2zM199 253h2v2h-2zM198 253h2v2h-2zM199 253h2v2h-2zM199 253h2v2h-2zM198 253h2v2h-2zM198 253h2v2h-2zM198 253h2v2h-2zM198 253h2v2h-2zM198 253h2v2h-2zM199 253h2v2h-2zM198 253h2v2h-2zM199 253h2v2h-2zM198 253h2v2h-2zM198 253h2v2h-2zM198 253h2v2h-2zM198 253h2v2h-2zM199 253h2v2h-2zM198 253h2v2h-2zM198 253h2v2h-2zM199 253h2v2h-2zM198 253h2v2h-2zM198 253h2v2h-2zM198 253h2v2h-2zM198 253h2v2h-2zM198 253h2v2h-2zM198 253h2v2h-2zM198 253h2v2h-2zM198 253h2v2h-2zM199 253h2v2h-2zM198 253h2v2h-2zM198 253h2v2h-2zM199 253h2v2h-2zM199 253h2v2h-2zM199 253h2v2h-2zM198 253h2v2h-2zM198 253h2v2h-2zM199 253h2v2h-2zM199 253h2v2h-2zM198 253h2v2h-2zM198 253h2v2h-2zM198 253h2v2h-2zM198 253h2v2h-2zM198 253h2v2h-2zM199 253h2v2h-2zM199 253h2v2h-2zM198 253h2v2h-2zM198 253h2v2h-2zM199 253h2v2h-2zM198 253h2v2h-2zM198 253h2v2h-2zM198 253h2v2h-2zM198 253h2v2h-2zM198 253h2v2h-2zM199 253h2v2h-2zM199 253h2v2h-2zM198 253h2v2h-2zM199 253h2v2h-2zM198 253h2v2h-2zM199 253h2v2h-2zM198 253h2v2h-2zM198 253h2v2h-2zM199 253h2v2h-2zM198 253h2v2h-2zM198 253h2v2h-2zM198 253h2v2h-2zM198 253h2v2h-2zM198 253h2v2h-2zM198 253h2v2h-2zM199 253h2v2h-2zM198 253h2v2h-2zM198 253h2v2h-2zM198 253h2v2h-2zM199 253h2v2h-2zM198 253h2v2h-2zM198 253h2v2h-2zM199 253h2v2h-2zM198 253h2v2h-2zM198 253h2v2h-2zM198 253h2v2h-2zM199 253h2v2h-2zM198 253h2v2h-2zM199 253h2v2h-2zM198 253h2v2h-2zM198 253h2v2h-2zM199 253h2v2h-2zM198 253h2v2h-2zM198 253h2v2h-2zM198 253h2v2h-2zM198 253h2v2h-2zM198 253h2v2h-2zM198 253h2v2h-2zM198 253h2v2h-2zM198 253h2v2h-2zM198 253h2v2h-2zM198 253h2v2h-2zM199 253h2v2h-2zM199 253h2v2h-2zM198 253h2v2h-2zM198 253h2v2h-2zM198 253h2v2h-2zM198 253h2v2h-2zM198 253h2v2h-2zM198 253h2v2h-2zM198 253h2v2h-2zM199 253h2v2h-2zM198 253h2v2h-2zM198 253h2v2h-2zM198 253h2v2h-2zM198 253h2v2h-2zM198 253h2v2h-2zM198 253h2v2h-2zM198 253h2v2h-2zM198 253h2v2h-2zM198 253h2v2h-2zM198 253h2v2h-2zM198 253h2v2h-2zM198 253h2v2h-2zM198 253h2v2h-2zM198 253h2v2h-2zM199 253h2v2h-2zM199 253h2v2h-2zM198 253h2v2h-2zM198 253h2v2h-2zM198 253h2v2h-2zM199 253h2v2h-2zM198 253h2v2h-2zM198 253h2v2h-2zM198 253h2v2h-2zM198 253h2v2h-2zM199 253h2v2h-2zM198 253h2v2h-2zM198 253h2v2h-2zM198 253h2v2h-2zM198 253h2v2h-2zM198 253h2v2h-2zM198 253h2v2h-2zM199 253h2v2h-2zM199 253h2v2h-2zM199 253h2v2h-2zM198 253h2v2h-2zM199 253h2v2h-2zM198 253h2v2h-2zM199 253h2v2h-2zM198 253h2v2h-2zM198 253h2v2h-2zM198 253h2v2h-2zM198 253h2v2h-2zM198 253h2v2h-2zM199 253h2v2h-2zM198 253h2v2h-2zM199 253h2v2h-2zM199 253h2v2h-2zM198 253h2v2h-2zM199 253h2v2h-2zM199 253h2v2h-2zM198 253h2v2h-2zM198 253h2v2h-2zM198 252h2v2h-2zM198 253h2v2h-2zM198 253h2v2h-2zM198 253h2v2h-2zM198 253h2v2h-2zM198 253h2v2h-2zM198 253h2v2h-2zM199 253h2v2h-2zM198 253h2v2h-2zM198 253h2v2h-2zM198 253h2v2h-2zM198 253h2v2h-2zM198 253h2v2h-2zM198 253h2v2h-2zM198 253h2v2h-2zM198 253h2v2h-2zM198 252h2v2h-2zM198 253h2v2h-2zM198 253h2v2h-2zM198 253h2v2h-2zM198 253h2v2h-2zM199 252h2v2h-2zM199 253h2v2h-2zM198 252h2v2h-2zM198 253h2v2h-2zM199 252h2v2h-2zM198 253h2v2h-2zM198 253h2v2h-2zM198 253h2v2h-2zM198 253h2v2h-2zM199 253h2v2h-2zM198 253h2v2h-2zM198 253h2v2h-2zM198 253h2v2h-2zM198 253h2v2h-2zM199 253h2v2h-2zM198 253h2v2h-2zM199 253h2v2h-2zM198 253h2v2h-2zM198 252h2v2h-2zM198 253h2v2h-2zM198 253h2v2h-2zM199 252h2v2h-2zM198 253h2v2h-2zM198 254h2v2h-2zM200 253h2v2h-2zM198 253h2v2h-2zM198 253h2v2h-2zM198 253h2v2h-2zM198 253h2v2h-2zM200 254h2v2h-2zM198 253h2v2h-2zM198 253h2v2h-2zM199 253h2v2h-2zM199 253h2v2h-2zM198 253h2v2h-2zM199 253h2v2h-2zM198 253h2v2h-2zM199 253h2v2h-2zM198 252h2v2h-2zM198 253h2v2h-2zM198 252h2v2h-2zM199 254h2v2h-2zM198 253h2v2h-2zM198 253h2v2h-2zM199 253h2v2h-2zM199 254h2v2h-2zM198 252h2v2h-2zM198 253h2v2h-2zM199 254h2v2h-2zM198 253h2v2h-2zM199 253h2v2h-2zM198 252h2v2h-2zM199 253h2v2h-2zM198 253h2v2h-2zM198 253h2v2h-2zM198 253h2v2h-2zM198 253h2v2h-2zM198 252h2v2h-2zM199 252h2v2h-2zM198 252h2v2h-2zM199 252h2v2h-2zM198 253h2v2h-2zM198 252h2v2h-2zM198 253h2v2h-2zM199 252h2v2h-2zM198 253h2v2h-2zM198 252h2v2h-2zM198 254h2v2h-2zM199 254h2v2h-2zM197 253h2v2h-2zM198 252h2v2h-2zM198 253h2v2h-2zM197 253h2v2h-2zM198 252h2v2h-2zM198 253h2v2h-2zM198 252h2v2h-2zM198 252h2v2h-2zM198 252h2v2h-2zM198 253h2v2h-2zM198 253h2v2h-2zM198 252h2v2h-2zM200 253h2v2h-2zM197 253h2v2h-2zM198 252h2v2h-2zM198 252h2v2h-2zM199 254h2v2h-2zM200 254h2v2h-2zM196 250h2v2h-2zM200 256h2v2h-2zM196 252h2v2h-2zM197 252h2v2h-2zM200 254h2v2h-2zM198 252h2v2h-2zM200 254h2v2h-2zM199 252h2v2h-2zM196 253h2v2h-2zM197 253h2v2h-2zM197 251h2v2h-2zM198 253h2v2h-2zM197 254h2v2h-2zM199 254h2v2h-2zM197 251h2v2h-2zM198 253h2v2h-2zM198 252h2v2h-2zM199 250h2v2h-2zM201 255h2v2h-2zM197 256h2v2h-2zM196 253h2v2h-2zM197 250h2v2h-2zM196 252h2v2h-2zM200 254h2v2h-2zM199 251h2v2h-2zM199 251h2v2h-2zM196 252h2v2h-2zM201 255h2v2h-2zM199 255h2v2h-2zM200 256h2v2h-2zM196 253h2v2h-2zM200 251h2v2h-2zM197 252h2v2h-2zM198 255h2v2h-2zM197 255h2v2h-2zM198 256h2v2h-2zM198 254h2v2h-2zM195 252h2v2h-2zM199 252h2v2h-2zM198 253h2v2h-2zM197 254h2v2h-2zM196 251h2v2h-2zM197 250h2v2h-2zM197 250h2v2h-2zM197 252h2v2h-2zM196 252h2v2h-2zM198 253h2v2h-2zM197 252h2v2h-2zM198 251h2v2h-2zM198 252h2v2h-2zM197 253h2v2h-2zM199 252h2v2h-2zM198 252h2v2h-2zM199 253h2v2h-2zM200 252h2v2h-2zM199 252h2v2h-2zM198 250h2v2h-2zM200 253h2v2h-2zM198 253h2v2h-2zM198 253h2v2h-2zM197 252h2v2h-2zM197 251h2v2h-2zM196 253h2v2h-2zM196 252h2v2h-2zM196 253h2v2h-2zM198 255h2v2h-2zM197 253h2v2h-2zM197 251h2v2h-2zM196 253h2v2h-2zM197 255h2v2h-2zM195 253h2v2h-2zM197 252h2v2h-2zM197 252h2v2h-2zM198 253h2v2h-2zM201 254h2v2h-2zM200 254h2v2h-2zM195 251h2v2h-2zM194 251h2v2h-2zM194 254h2v2h-2zM195 252h2v2h-2zM198 251h2v2h-2zM198 256h2v2h-2zM197 254h2v2h-2zM197 253h2v2h-2zM195 251h2v2h-2zM197 249h2v2h-2zM197 253h2v2h-2zM195 253h2v2h-2zM195 256h2v2h-2zM196 252h2v2h-2zM201 257h2v2h-2zM197 254h2v2h-2zM197 250h2v2h-2zM195 252h2v2h-2zM195 252h2v2h-2zM196 252h2v2h-2zM203 250h2v2h-2zM195 253h2v2h-2zM197 249h2v2h-2zM197 255h2v2h-2zM201 252h2v2h-2zM196 250h2v2h-2zM203 250h2v2h-2zM196 249h2v2h-2zM196 250h2v2h-2zM196 248h2v2h-2zM195 248h2v2h-2zM195 252h2v2h-2zM200 255h2v2h-2zM197 256h2v2h-2zM195 249h2v2h-2zM200 246h2v2h-2zM201 259h2v2h-2zM192 250h2v2h-2zM204 256h2v2h-2zM194 252h2v2h-2zM196 249h2v2h-2zM194 253h2v2h-2zM194 252h2v2h-2zM195 254h2v2h-2zM197 238h2v2h-2zM198 252h2v2h-2zM196 250h2v2h-2zM195 259h2v2h-2zM196 249h2v2h-2zM199 261h2v2h-2zM195 245h2v2h-2zM200 258h2v2h-2zM191 248h2v2h-2zM194 250h2v2h-2zM202 246h2v2h-2zM192 252h2v2h-2zM196 248h2v2h-2zM199 249h2v2h-2zM195 251h2v2h-2zM197 253h2v2h-2zM197 256h2v2h-2zM202 252h2v2h-2zM195 246h2v2h-2zM196 253h2v2h-2zM194 254h2v2h-2zM201 253h2v2h-2zM193 253h2v2h-2zM202 253h2v2h-2zM196 250h2v2h-2zM195 264h2v2h-2zM195 246h2v2h-2zM205 254h2v2h-2zM197 253h2v2h-2zM195 252h2v2h-2zM198 252h2v2h-2zM194 249h2v2h-2zM199 250h2v2h-2zM187 251h2v2h-2zM189 253h2v2h-2zM193 250h2v2h-2zM194 248h2v2h-2zM220 244h2v2h-2zM196 252h2v2h-2zM199 256h2v2h-2zM209 260h2v2h-2zM195 246h2v2h-2zM199 252h2v2h-2zM201 244h2v2h-2zM178 247h2v2h-2zM189 249h2v2h-2zM189 253h2v2h-2zM202 242h2v2h-2zM198 252h2v2h-2zM190 242h2v2h-2zM195 252h2v2h-2zM199 253h2v2h-2zM196 251h2v2h-2zM197 250h2v2h-2zM188 257h2v2h-2zM191 253h2v2h-2zM197 253h2v2h-2zM209 253h2v2h-2zM200 250h2v2h-2zM202 260h2v2h-2zM199 254h2v2h-2zM193 252h2v2h-2zM195 250h2v2h-2zM194 256h2v2h-2zM192 256h2v2h-2zM190 248h2v2h-2zM198 254h2v2h-2zM198 252h2v2h-2zM198 253h2v2h-2zM201 254h2v2h-2zM197 253h2v2h-2zM195 252h2v2h-2zM198 253h2v2h-2zM185 240h2v2h-2zM202 252h2v2h-2zM201 253h2v2h-2z"/><path d="M198 253h2v2h-2zM198 253h2v2h-2zM198 253h2v2h-2zM198 253h2v2h-2zM198 253h2v2h-2zM198 253h2v2h-2zM199 253h2v2h-2zM198 253h2v2h-2zM198 253h2v2h-2zM198 253h2v2h-2zM198 253h2v2h-2zM198 253h2v2h-2zM198 253h2v2h-2zM198 253h2v2h-2zM198 253h2v2h-2zM198 253h2v2h-2zM198 253h2v2h-2zM198 253h2v2h-2zM198 253h2v2h-2zM199 253h2v2h-2zM198 253h2v2h-2zM199 253h2v2h-2zM199 253h2v2h-2zM199 253h2v2h-2zM198 253h2v2h-2zM198 253h2v2h-2zM199 253h2v2h-2zM199 253h2v2h-2zM199 253h2v2h-2zM198 253h2v2h-2zM199 253h2v2h-2zM198 253h2v2h-2zM198 253h2v2h-2zM199 253h2v2h-2zM199 253h2v2h-2zM198 253h2v2h-2zM198 253h2v2h-2zM198 253h2v2h-2zM198 253h2v2h-2zM198 253h2v2h-2zM198 253h2v2h-2zM199 253h2v2h-2zM199 253h2v2h-2zM199 253h2v2h-2zM199 253h2v2h-2zM198 253h2v2h-2zM198 253h2v2h-2zM198 253h2v2h-2zM199 253h2v2h-2zM199 253h2v2h-2zM198 253h2v2h-2zM198 253h2v2h-2zM198 253h2v2h-2zM198 253h2v2h-2zM198 253h2v2h-2zM198 253h2v2h-2zM198 253h2v2h-2zM198 253h2v2h-2zM198 253h2v2h-2zM198 253h2v2h-2zM198 253h2v2h-2zM198 253h2v2h-2zM198 253h2v2h-2zM198 253h2v2h-2zM198 253h2v2h-2zM199 253h2v2h-2zM198 253h2v2h-2zM198 253h2v2h-2zM199 253h2v2h-2zM199 253h2v2h-2zM198 253h2v2h-2zM198 253h2v2h-2zM198 253h2v2h-2zM198 253h2v2h-2zM198 253h2v2h-2zM198 253h2v2h-2zM199 253h2v2h-2zM199 253h2v2h-2zM198 253h2v2h-2zM198 253h2v2h-2zM199 253h2v2h-2zM198 253h2v2h-2zM198 253h2v2h-2zM198 253h2v2h-2zM198 253h2v2h-2zM198 253h2v2h-2zM198 253h2v2h-2zM198 253h2v2h-2zM198 253h2v2h-2zM198 253h2v2h-2zM198 253h2v2h-2zM198 253h2v2h-2zM198 253h2v2h-2zM198 253h2v2h-2zM198 253h2v2h-2zM198 253h2v2h-2zM198 253h2v2h-2zM198 253h2v2h-2zM198 253h2v2h-2zM198 253h2v2h-2zM198 253h2v2h-2zM199 253h2v2h-2zM198 253h2v2h-2zM198 253h2v2h-2zM198 253h2v2h-2zM199 253h2v2h-2zM199 253h2v2h-2zM198 253h2v2h-2zM198 253h2v2h-2zM198 253h2v2h-2zM198 253h2v2h-2zM198 253h2v2h-2zM198 253h2v2h-2zM199 253h2v2h-2zM199 253h2v2h-2zM199 253h2v2h-2zM198 253h2v2h-2zM199 253h2v2h-2zM198 253h2v2h-2zM198 253h2v2h-2zM199 253h2v2h-2zM198 253h2v2h-2zM198 253h2v2h-2zM199 253h2v2h-2zM198 253h2v2h-2zM198 253h2v2h-2zM199 253h2v2h-2zM198 253h2v2h-2zM198 253h2v2h-2zM198 253h2v2h-2zM198 253h2v2h-2zM199 253h2v2h-2zM198 253h2v2h-2zM198 253h2v2h-2zM198 253h2v2h-2zM198 253h2v2h-2zM198 253h2v2h-2zM198 253h2v2h-2zM199 253h2v2h-2zM199 253h2v2h-2zM198 253h2v2h-2zM198 253h2v2h-2zM199 253h2v2h-2zM198 253h2v2h-2zM198 253h2v2h-2zM198 253h2v2h-2zM198 253h2v2h-2zM198 253h2v2h-2zM198 253h2v2h-2zM198 253h2v2h-2zM198 253h2v2h-2zM199 253h2v2h-2zM199 253h2v2h-2zM198 253h2v2h-2zM199 253h2v2h-2zM198 253h2v2h-2zM198 253h2v2h-2zM198 253h2v2h-2zM198 253h2v2h-2zM198 253h2v2h-2zM199 253h2v2h-2zM199 253h2v2h-2zM198 253h2v2h-2zM198 253h2v2h-2zM199 253h2v2h-2zM198 253h2v2h-2zM199 253h2v2h-2zM198 253h2v2h-2zM198 253h2v2h-2zM199 253h2v2h-2zM198 253h2v2h-2zM198 253h2v2h-2zM198 253h2v2h-2zM198 253h2v2h-2zM199 253h2v2h-2zM198 253h2v2h-2zM198 253h2v2h-2zM199 253h2v2h-2zM198 253h2v2h-2zM198 252h2v2h-2zM198 253h2v2h-2zM198 253h2v2h-2zM198 253h2v2h-2zM199 253h2v2h-2zM198 253h2v2h-2zM198 253h2v2h-2zM198 253h2v2h-2zM198 253h2v2h-2zM199 253h2v2h-2zM198 253h2v2h-2zM198 253h2v2h-2zM199 253h2v2h-2zM198 253h2v2h-2zM198 253h2v2h-2zM198 253h2v2h-2zM198 253h2v2h-2zM199 253h2v2h-2zM199 253h2v2h-2zM199 253h2v2h-2zM198 253h2v2h-2zM198 253h2v2h-2zM199 252h2v2h-2zM198 252h2v2h-2zM199 253h2v2h-2zM198 253h2v2h-2zM199 253h2v2h-2zM198 253h2v2h-2zM198 253h2v2h-2zM198 253h2v2h-2zM198 253h2v2h-2zM198 253h2v2h-2zM198 253h2v2h-2zM198 253h2v2h-2zM199 253h2v2h-2zM198 253h2v2h-2zM199 254h2v2h-2zM198 253h2v2h-2zM198 253h2v2h-2zM198 253h2v2h-2zM198 253h2v2h-2zM198 253h2v2h-2zM198 253h2v2h-2zM199 254h2v2h-2zM198 252h2v2h-2zM198 253h2v2h-2zM198 253h2v2h-2zM198 253h2v2h-2zM199 253h2v2h-2zM199 253h2v2h-2zM198 253h2v2h-2zM198 253h2v2h-2zM198 253h2v2h-2zM199 253h2v2h-2zM198 253h2v2h-2zM198 253h2v2h-2zM198 253h2v2h-2zM198 252h2v2h-2zM198 253h2v2h-2zM198 253h2v2h-2zM198 252h2v2h-2zM199 252h2v2h-2zM199 254h2v2h-2zM198 253h2v2h-2zM199 254h2v2h-2zM198 253h2v2h-2zM198 253h2v2h-2zM198 252h2v2h-2zM199 252h2v2h-2zM198 253h2v2h-2zM198 252h2v2h-2zM198 254h2v2h-2zM198 252h2v2h-2zM198 253h2v2h-2zM199 253h2v2h-2zM198 254h2v2h-2zM198 253h2v2h-2zM198 253h2v2h-2zM199 253h2v2h-2zM198 253h2v2h-2zM198 252h2v2h-2zM199 253h2v2h-2zM198 253h2v2h-2zM199 253h2v2h-2zM198 253h2v2h-2zM198 253h2v2h-2zM198 253h2v2h-2zM198 254h2v2h-2zM198 253h2v2h-2zM199 253h2v2h-2zM198 253h2v2h-2zM198 253h2v2h-2zM198 252h2v2h-2zM198 253h2v2h-2zM199 253h2v2h-2zM199 254h2v2h-2zM198 253h2v2h-2zM198 252h2v2h-2zM198 253h2v2h-2zM198 253h2v2h-2zM198 254h2v2h-2zM197 253h2v2h-2zM199 253h2v2h-2zM198 253h2v2h-2zM199 254h2v2h-2zM198 253h2v2h-2zM197 252h2v2h-2zM199 253h2v2h-2zM198 253h2v2h-2zM199 253h2v2h-2zM199 254h2v2h-2zM198 252h2v2h-2zM198 253h2v2h-2zM198 252h2v2h-2zM199 253h2v2h-2zM198 253h2v2h-2zM198 253h2v2h-2zM199 253h2v2h-2zM198 253h2v2h-2zM198 253h2v2h-2zM198 252h2v2h-2zM199 254h2v2h-2zM198 253h2v2h-2zM197 251h2v2h-2zM201 253h2v2h-2zM196 253h2v2h-2zM198 252h2v2h-2zM201 254h2v2h-2zM198 252h2v2h-2zM198 250h2v2h-2zM199 252h2v2h-2zM196 252h2v2h-2zM200 254h2v2h-2zM198 254h2v2h-2zM200 255h2v2h-2zM197 254h2v2h-2zM198 252h2v2h-2zM196 253h2v2h-2zM197 254h2v2h-2zM198 252h2v2h-2zM198 252h2v2h-2zM199 252h2v2h-2zM200 251h2v2h-2zM195 254h2v2h-2zM197 253h2v2h-2zM201 255h2v2h-2zM198 255h2v2h-2zM197 252h2v2h-2zM199 253h2v2h-2zM197 252h2v2h-2zM197 251h2v2h-2zM198 251h2v2h-2zM197 252h2v2h-2zM197 253h2v2h-2zM200 251h2v2h-2zM199 257h2v2h-2zM198 256h2v2h-2zM197 250h2v2h-2zM200 255h2v2h-2zM197 252h2v2h-2zM198 252h2v2h-2zM198 251h2v2h-2zM197 251h2v2h-2zM197 253h2v2h-2zM196 251h2v2h-2zM197 253h2v2h-2zM197 255h2v2h-2zM197 254h2v2h-2zM197 255h2v2h-2zM197 252h2v2h-2zM198 253h2v2h-2zM200 250h2v2h-2zM198 252h2v2h-2zM203 253h2v2h-2zM199 252h2v2h-2zM198 251h2v2h-2zM198 251h2v2h-2zM197 254h2v2h-2zM199 252h2v2h-2zM199 255h2v2h-2zM197 252h2v2h-2zM198 252h2v2h-2zM196 252h2v2h-2zM198 251h2v2h-2zM197 251h2v2h-2zM196 253h2v2h-2zM197 253h2v2h-2zM196 253h2v2h-2zM197 252h2v2h-2zM201 254h2v2h-2zM196 253h2v2h-2zM196 253h2v2h-2zM200 250h2v2h-2zM200 254h2v2h-2zM198 251h2v2h-2zM199 252h2v2h-2zM198 253h2v2h-2zM196 253h2v2h-2zM198 250h2v2h-2zM197 252h2v2h-2zM196 251h2v2h-2zM197 249h2v2h-2zM195 252h2v2h-2zM197 253h2v2h-2zM197 251h2v2h-2zM198 251h2v2h-2zM195 255h2v2h-2zM198 257h2v2h-2zM198 252h2v2h-2zM196 252h2v2h-2zM197 252h2v2h-2zM198 255h2v2h-2zM200 252h2v2h-2zM197 249h2v2h-2zM195 255h2v2h-2zM196 250h2v2h-2zM194 251h2v2h-2zM198 255h2v2h-2zM197 254h2v2h-2zM198 255h2v2h-2zM200 256h2v2h-2zM194 251h2v2h-2zM201 253h2v2h-2zM195 251h2v2h-2zM194 253h2v2h-2zM200 249h2v2h-2zM196 248h2v2h-2zM196 247h2v2h-2zM195 252h2v2h-2zM196 250h2v2h-2zM201 250h2v2h-2zM194 253h2v2h-2zM196 250h2v2h-2zM195 250h2v2h-2zM194 255h2v2h-2zM197 248h2v2h-2zM201 255h2v2h-2zM204 251h2v2h-2zM198 252h2v2h-2zM194 249h2v2h-2zM201 248h2v2h-2zM195 259h2v2h-2zM197 251h2v2h-2zM201 256h2v2h-2zM201 256h2v2h-2zM201 251h2v2h-2zM196 249h2v2h-2zM196 248h2v2h-2zM195 247h2v2h-2zM199 247h2v2h-2zM200 250h2v2h-2zM196 247h2v2h-2zM199 249h2v2h-2zM202 253h2v2h-2zM205 256h2v2h-2zM193 249h2v2h-2zM190 254h2v2h-2zM195 249h2v2h-2zM203 251h2v2h-2zM198 251h2v2h-2zM202 250h2v2h-2zM200 252h2v2h-2zM186 252h2v2h-2zM192 254h2v2h-2zM194 250h2v2h-2zM202 253h2v2h-2zM198 257h2v2h-2zM204 257h2v2h-2zM193 251h2v2h-2zM198 258h2v2h-2zM193 251h2v2h-2zM200 249h2v2h-2zM206 260h2v2h-2zM191 253h2v2h-2zM194 250h2v2h-2zM194 244h2v2h-2zM196 250h2v2h-2zM196 252h2v2h-2zM170 248h2v2h-2zM194 255h2v2h-2zM197 253h2v2h-2zM198 252h2v2h-2zM195 244h2v2h-2zM198 254h2v2h-2zM194 262h2v2h-2zM191 251h2v2h-2zM191 253h2v2h-2zM196 257h2v2h-2zM196 244h2v2h-2zM199 252h2v2h-2zM196 248h2v2h-2zM211 248h2v2h-2zM185 251h2v2h-2zM197 250h2v2h-2zM196 251h2v2h-2zM195 250h2v2h-2zM193 244h2v2h-2zM194 249h2v2h-2zM191 248h2v2h-2zM192 254h2v2h-2zM200 251h2v2h-2zM188 252h2v2h-2zM197 238h2v2h-2zM194 241h2v2h-2zM196 253h2v2h-2zM198 249h2v2h-2zM198 253h2v2h-2zM194 251h2v2h-2zM197 253h2v2h-2zM193 247h2v2h-2zM202 252h2v2h-2zM200 254h2v2h-2zM196 252h2v2h-2zM193 251h2v2h-2zM192 249h2v2h-2zM199 253h2v2h-2zM197 253h2v2h-2zM201 251h2v2h-2zM195 248h2v2h-2zM195 253h2v2h-2zM198 252h2v2h-2zM197 251h2v2h-2zM200 255h2v2h-2zM203 256h2v2h-2zM195 252h2v2h-2zM196 247h2v2h-2z"/></g><path d="M203 262L200 256M203 262L206 256M200 256H206" fill="none" stroke="#ff0000" stroke-width="1" stroke-linecap="square" shape-rendering="crispEdges" transform="translate(.5 .5)"/><path d="M200 258L197 252M200 258L203 252M197 252H203" fill="none" stroke="#0000ff" stroke-width="1" stroke-linecap="square" shape-rendering="crispEdges" transform="translate(.5 .5)"/><path d="M200 260L197 254M200 260L203 254M197 254H203" fill="none" stroke="#ffff00" stroke-width="1" stroke-linecap="square" shape-rendering="crispEdges" transform="translate(.5 .5)"/></svg>
</body></html>
